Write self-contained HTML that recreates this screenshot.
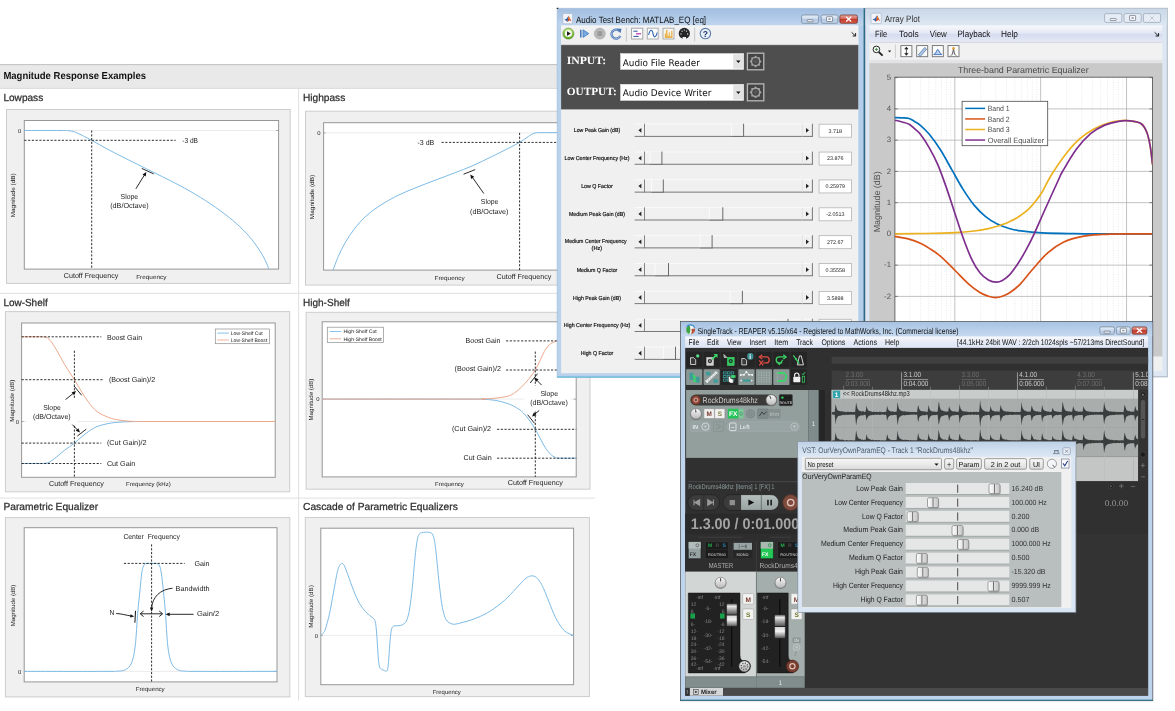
<!DOCTYPE html>
<html lang="en"><head><meta charset="utf-8"><title>Magnitude Response Examples</title>
<style>
html,body{margin:0;padding:0;background:#fff;}
body{width:1175px;height:711px;overflow:hidden;font-family:"Liberation Sans",sans-serif;}
svg{display:block;}
text{white-space:pre;}
</style></head><body>
<svg width="1175" height="711" viewBox="0 0 1175 711" text-rendering="geometricPrecision" style="will-change:transform">
<defs><linearGradient id="gTitleA" x1="0" y1="0" x2="0" y2="1"><stop offset="0" stop-color="#a3bee0"/><stop offset="0.5" stop-color="#afc9e8"/><stop offset="1" stop-color="#c1d6ee"/></linearGradient><linearGradient id="gTitleI" x1="0" y1="0" x2="0" y2="1"><stop offset="0" stop-color="#c9d7e7"/><stop offset="0.6" stop-color="#d6e1ee"/><stop offset="1" stop-color="#dee8f3"/></linearGradient><linearGradient id="gTitleR" x1="0" y1="0" x2="0" y2="1"><stop offset="0" stop-color="#a9c3e3"/><stop offset="0.5" stop-color="#b6cee9"/><stop offset="1" stop-color="#c6d9ef"/></linearGradient><linearGradient id="gTitleV" x1="0" y1="0" x2="0" y2="1"><stop offset="0" stop-color="#bed1e6"/><stop offset="0.5" stop-color="#cfdeee"/><stop offset="1" stop-color="#dde8f5"/></linearGradient><linearGradient id="gSideA" x1="0" y1="0" x2="0" y2="1"><stop offset="0" stop-color="#a6c3e8"/><stop offset="0.3" stop-color="#9fbfe6"/><stop offset="1" stop-color="#c3d8f0"/></linearGradient><linearGradient id="gTool" x1="0" y1="0" x2="0" y2="1"><stop offset="0" stop-color="#f3f4f6"/><stop offset="0.3" stop-color="#f0f0f0"/><stop offset="1" stop-color="#efefef"/></linearGradient><linearGradient id="gMenu" x1="0" y1="0" x2="0" y2="1"><stop offset="0" stop-color="#f8f9fc"/><stop offset="0.45" stop-color="#e4e8f5"/><stop offset="0.55" stop-color="#d6dcf0"/><stop offset="1" stop-color="#e6eaf6"/></linearGradient><linearGradient id="gMenuR" x1="0" y1="0" x2="0" y2="1"><stop offset="0" stop-color="#f8f9fc"/><stop offset="0.5" stop-color="#e6eaf6"/><stop offset="1" stop-color="#dfe5f3"/></linearGradient><linearGradient id="gBtn" x1="0" y1="0" x2="0" y2="1"><stop offset="0" stop-color="#e9f0f9"/><stop offset="0.5" stop-color="#c9d8ec"/><stop offset="0.55" stop-color="#b4c8e2"/><stop offset="1" stop-color="#c6d8ee"/></linearGradient><linearGradient id="gClose" x1="0" y1="0" x2="0" y2="1"><stop offset="0" stop-color="#e9a89c"/><stop offset="0.45" stop-color="#d4685a"/><stop offset="0.5" stop-color="#c1392b"/><stop offset="1" stop-color="#d4604a"/></linearGradient><linearGradient id="gPlay" x1="0" y1="0" x2="0" y2="1"><stop offset="0" stop-color="#c4e88a"/><stop offset="1" stop-color="#5aa21e"/></linearGradient><linearGradient id="gKnob" x1="0" y1="0" x2="0" y2="1"><stop offset="0" stop-color="#fafafa"/><stop offset="1" stop-color="#b8b8b8"/></linearGradient><linearGradient id="gPlayBtn" x1="0" y1="0" x2="0" y2="1"><stop offset="0" stop-color="#b4bebd"/><stop offset="1" stop-color="#98a3a2"/></linearGradient><linearGradient id="gFader" x1="0" y1="0" x2="0" y2="1"><stop offset="0" stop-color="#6a6a6a"/><stop offset="0.12" stop-color="#e8e8e8"/><stop offset="0.3" stop-color="#9a9a9a"/><stop offset="0.48" stop-color="#555"/><stop offset="0.52" stop-color="#d8d8d8"/><stop offset="0.7" stop-color="#f2f2f2"/><stop offset="0.9" stop-color="#8a8a8a"/><stop offset="1" stop-color="#444"/></linearGradient><linearGradient id="gBtnV" x1="0" y1="0" x2="0" y2="1"><stop offset="0" stop-color="#f6f6f6"/><stop offset="0.5" stop-color="#ebebeb"/><stop offset="1" stop-color="#d9d9d9"/></linearGradient><linearGradient id="gThumb" x1="0" y1="0" x2="1" y2="0"><stop offset="0" stop-color="#ffffff"/><stop offset="0.5" stop-color="#e2e2e2"/><stop offset="1" stop-color="#c2c2c2"/></linearGradient><clipPath id="cpAx"><rect x="894.9" y="77.2" width="257.6" height="268"/></clipPath><clipPath id="cpRuler"><rect x="831.6" y="370.6" width="316.5" height="19.3"/></clipPath><clipPath id="cpLane"><rect x="831.6" y="398.7" width="306.6" height="57.7"/></clipPath><clipPath id="cpTrans"><rect x="723" y="494.6" width="55.8" height="15.8" rx="7.9"/></clipPath></defs><rect x="0" y="0" width="1175" height="711" fill="#fff"/><g id="page"><rect x="0" y="65" width="596" height="23" fill="#e9e9e9"/><line x1="0" y1="64.6" x2="596" y2="64.6" stroke="#b9b9b9" stroke-width="0.9"/><line x1="0" y1="88.4" x2="596" y2="88.4" stroke="#d6d6d6" stroke-width="0.9"/><text x="3.4" y="78.9" font-size="10.2" fill="#111" font-family='"Liberation Sans", sans-serif' font-weight="bold" textLength="142.6" lengthAdjust="spacingAndGlyphs">Magnitude Response Examples</text><line x1="298.6" y1="88.8" x2="298.6" y2="700.6" stroke="#dcdcdc" stroke-width="0.9"/><line x1="0" y1="293.3" x2="595" y2="293.3" stroke="#dcdcdc" stroke-width="0.9"/><line x1="0" y1="498.1" x2="595" y2="498.1" stroke="#dcdcdc" stroke-width="0.9"/><text x="3.4" y="100.6" font-size="10.2" fill="#2e2e2e" font-family='"Liberation Sans", sans-serif' textLength="39.8" lengthAdjust="spacingAndGlyphs" stroke="#2e2e2e" stroke-width="0.25">Lowpass</text><text x="303" y="100.6" font-size="10.2" fill="#2e2e2e" font-family='"Liberation Sans", sans-serif' textLength="42.2" lengthAdjust="spacingAndGlyphs" stroke="#2e2e2e" stroke-width="0.25">Highpass</text><text x="3.4" y="305.5" font-size="10.2" fill="#2e2e2e" font-family='"Liberation Sans", sans-serif' textLength="44.3" lengthAdjust="spacingAndGlyphs" stroke="#2e2e2e" stroke-width="0.25">Low-Shelf</text><text x="303" y="305.5" font-size="10.2" fill="#2e2e2e" font-family='"Liberation Sans", sans-serif' textLength="46.8" lengthAdjust="spacingAndGlyphs" stroke="#2e2e2e" stroke-width="0.25">High-Shelf</text><text x="3.4" y="510.3" font-size="10.2" fill="#2e2e2e" font-family='"Liberation Sans", sans-serif' textLength="94.8" lengthAdjust="spacingAndGlyphs" stroke="#2e2e2e" stroke-width="0.25">Parametric Equalizer</text><text x="303" y="510.3" font-size="10.2" fill="#2e2e2e" font-family='"Liberation Sans", sans-serif' textLength="154.8" lengthAdjust="spacingAndGlyphs" stroke="#2e2e2e" stroke-width="0.25">Cascade of Parametric Equalizers</text><rect x="6.5" y="109.5" width="283.7" height="173.9" fill="#f0f0f0" stroke="#cdcdcd" stroke-width="1"/><rect x="24.3" y="120.5" width="254.3" height="148.6" fill="#fff" stroke="#969696" stroke-width="1"/><line x1="24.8" y1="130.5" x2="278.1" y2="130.5" stroke="#e6e6e6" stroke-width="0.8"/><line x1="276.1" y1="130.5" x2="278.6" y2="130.5" stroke="#8e8e8e" stroke-width="0.8"/><line x1="24.3" y1="130.5" x2="26.3" y2="130.5" stroke="#8e8e8e" stroke-width="0.8"/><text x="15.2" y="217.3" font-size="5.9" fill="#222" font-family='"Liberation Sans", sans-serif' textLength="44" lengthAdjust="spacingAndGlyphs" transform="rotate(-90 15.2 217.3)">Magnitude (dB)</text><text x="21.2" y="132.6" font-size="5.9" fill="#222" font-family='"Liberation Sans", sans-serif' text-anchor="end">0</text><path d="M24.3 130.5 C30.25 130.5 52.72 130.48 60 130.5 C67.28 130.52 65.6 130.37 68 130.6 C70.4 130.83 72.4 131.28 74.4 131.9 C76.4 132.52 77.13 132.9 80 134.3 C82.87 135.7 86.05 137.32 91.6 140.3 C97.15 143.28 104.3 147.52 113.3 152.2 C122.3 156.88 134.82 163 145.6 168.4 C156.38 173.8 168.83 179.75 178 184.6 C187.17 189.45 193.6 193.18 200.6 197.5 C207.6 201.82 214.07 206.18 220 210.5 C225.93 214.82 231.33 219.08 236.2 223.4 C241.07 227.72 245.42 232.08 249.2 236.4 C252.98 240.72 256.2 245.27 258.9 249.3 C261.6 253.33 263.75 257.3 265.4 260.6 C267.05 263.9 268.23 267.68 268.8 269.1" fill="none" stroke="#7dbbe6" stroke-width="1"/><line x1="24.3" y1="140.3" x2="175.7" y2="140.3" stroke="#1a1a1a" stroke-width="0.9" stroke-dasharray="2.2 1.55"/><line x1="91.7" y1="130.5" x2="91.7" y2="269.1" stroke="#1a1a1a" stroke-width="0.9" stroke-dasharray="2.2 1.55"/><text x="182.2" y="142.6" font-size="7.2" fill="#222" font-family='"Liberation Sans", sans-serif' textLength="15.8" lengthAdjust="spacingAndGlyphs">-3 dB</text><line x1="141.7" y1="168.4" x2="153.7" y2="173.9" stroke="#111" stroke-width="0.9"/><line x1="135.9" y1="188.8" x2="144.36" y2="175.05" stroke="#111" stroke-width="0.9"/><path d="M146.3 171.9 L145.72 176.47 L142.48 174.48Z" fill="#111"/><text x="129.4" y="198.5" font-size="7.2" fill="#222" font-family='"Liberation Sans", sans-serif' text-anchor="middle" textLength="17.6" lengthAdjust="spacingAndGlyphs">Slope</text><text x="129.4" y="208.2" font-size="7.2" fill="#222" font-family='"Liberation Sans", sans-serif' text-anchor="middle" textLength="38.4" lengthAdjust="spacingAndGlyphs">(dB/Octave)</text><text x="63.8" y="278" font-size="7.2" fill="#222" font-family='"Liberation Sans", sans-serif' textLength="54.5" lengthAdjust="spacingAndGlyphs">Cutoff Frequency</text><text x="136.2" y="279.1" font-size="5.9" fill="#222" font-family='"Liberation Sans", sans-serif' textLength="30.3" lengthAdjust="spacingAndGlyphs">Frequency</text><rect x="305.5" y="111.2" width="284.7" height="173.9" fill="#f0f0f0" stroke="#cdcdcd" stroke-width="1"/><rect x="323.6" y="122.7" width="253.4" height="147.4" fill="#fff" stroke="#969696" stroke-width="1"/><line x1="324.1" y1="132.9" x2="576.5" y2="132.9" stroke="#e6e6e6" stroke-width="0.8"/><line x1="574.5" y1="132.9" x2="577" y2="132.9" stroke="#8e8e8e" stroke-width="0.8"/><line x1="323.6" y1="132.9" x2="325.6" y2="132.9" stroke="#8e8e8e" stroke-width="0.8"/><text x="314.2" y="219.15" font-size="5.9" fill="#222" font-family='"Liberation Sans", sans-serif' textLength="44.3" lengthAdjust="spacingAndGlyphs" transform="rotate(-90 314.2 219.15)">Magnitude (dB)</text><text x="320.6" y="135" font-size="5.9" fill="#222" font-family='"Liberation Sans", sans-serif' text-anchor="end">0</text><path d="M333.11 270.06 C333.96 267.82 336.2 261.16 338.21 256.6 C340.22 252.03 342.47 247.31 345.18 242.67 C347.88 238.03 350.98 233.19 354.46 228.74 C357.94 224.29 361.81 219.84 366.07 215.97 C370.32 212.11 374.97 208.82 380 205.53 C385.02 202.24 390.44 199.15 396.24 196.24 C402.05 193.34 408.24 190.83 414.81 188.12 C421.39 185.41 429.13 182.51 435.71 180 C442.28 177.48 448.09 175.43 454.28 173.03 C460.47 170.63 466.66 168.31 472.85 165.6 C479.04 162.9 485.61 159.61 491.42 156.78 C497.22 153.96 502.98 151.06 507.66 148.66 C512.35 146.26 516.02 144.44 519.5 142.39 C522.99 140.34 526.27 137.83 528.56 136.36 C530.84 134.89 531.84 134.17 533.2 133.57 C534.55 132.97 535.33 132.91 536.68 132.76 C538.03 132.6 534.6 132.66 541.32 132.64 C548.04 132.62 571.05 132.64 577 132.64" fill="none" stroke="#7dbbe6" stroke-width="1"/><line x1="441.5" y1="142.4" x2="577" y2="142.4" stroke="#1a1a1a" stroke-width="0.9" stroke-dasharray="2.2 1.55"/><line x1="519.6" y1="132.9" x2="519.6" y2="270.1" stroke="#1a1a1a" stroke-width="0.9" stroke-dasharray="2.2 1.55"/><text x="417.5" y="144.8" font-size="7.2" fill="#222" font-family='"Liberation Sans", sans-serif' textLength="16.8" lengthAdjust="spacingAndGlyphs">-3 dB</text><line x1="463.6" y1="174.2" x2="475.2" y2="169.6" stroke="#111" stroke-width="0.9"/><line x1="483.8" y1="193.5" x2="472.44" y2="177.42" stroke="#111" stroke-width="0.9"/><path d="M470.3 174.4 L474.28 176.73 L471.17 178.93Z" fill="#111"/><text x="489.6" y="204.4" font-size="7.2" fill="#222" font-family='"Liberation Sans", sans-serif' text-anchor="middle" textLength="17.6" lengthAdjust="spacingAndGlyphs">Slope</text><text x="489.3" y="213.7" font-size="7.2" fill="#222" font-family='"Liberation Sans", sans-serif' text-anchor="middle" textLength="38.4" lengthAdjust="spacingAndGlyphs">(dB/Octave)</text><text x="434.5" y="279.7" font-size="5.9" fill="#222" font-family='"Liberation Sans", sans-serif' textLength="30.1" lengthAdjust="spacingAndGlyphs">Frequency</text><text x="496.6" y="279" font-size="7.2" fill="#222" font-family='"Liberation Sans", sans-serif' textLength="54.8" lengthAdjust="spacingAndGlyphs">Cutoff Frequency</text><rect x="5.4" y="311.6" width="284.3" height="180.2" fill="#f0f0f0" stroke="#cdcdcd" stroke-width="1"/><rect x="21.6" y="323" width="253.6" height="154.3" fill="#fff" stroke="#969696" stroke-width="1"/><line x1="22.1" y1="421.5" x2="274.7" y2="421.5" stroke="#e6e6e6" stroke-width="0.8"/><line x1="272.7" y1="421.5" x2="275.2" y2="421.5" stroke="#8e8e8e" stroke-width="0.8"/><line x1="21.6" y1="421.5" x2="23.6" y2="421.5" stroke="#8e8e8e" stroke-width="0.8"/><text x="13.7" y="421.7" font-size="5.9" fill="#222" font-family='"Liberation Sans", sans-serif' textLength="42" lengthAdjust="spacingAndGlyphs" transform="rotate(-90 13.7 421.7)">Magnitude (dB)</text><text x="19" y="423.6" font-size="5.9" fill="#222" font-family='"Liberation Sans", sans-serif' text-anchor="end">0</text><path d="M21.6 463.5 C24.67 463.5 35.93 463.55 40 463.5 C44.07 463.45 44.33 463.48 46 463.2 C47.67 462.92 48.3 462.78 50 461.8 C51.7 460.82 53.75 459.23 56.2 457.3 C58.65 455.37 61.67 452.57 64.7 450.2 C67.73 447.83 71.57 445.33 74.4 443.1 C77.23 440.87 79.35 438.73 81.7 436.8 C84.05 434.87 85.95 433.2 88.5 431.5 C91.05 429.8 93.58 427.95 97 426.6 C100.42 425.25 105.33 424.13 109 423.4 C112.67 422.67 115.03 422.5 119 422.2 C122.97 421.9 127.63 421.72 132.8 421.6 C137.97 421.48 126.27 421.52 150 421.5 C173.73 421.48 254.33 421.5 275.2 421.5" fill="none" stroke="#7dbbe6" stroke-width="1"/><path d="M21.6 336.8 C24.67 336.8 35.93 336.72 40 336.8 C44.07 336.88 44.33 336.73 46 337.3 C47.67 337.87 48.3 338.18 50 340.2 C51.7 342.22 53.75 345.32 56.2 349.4 C58.65 353.48 61.67 359.65 64.7 364.7 C67.73 369.75 71.57 375.17 74.4 379.7 C77.23 384.23 79.35 388.17 81.7 391.9 C84.05 395.63 85.95 398.83 88.5 402.1 C91.05 405.37 93.58 408.92 97 411.5 C100.42 414.08 105.33 416.18 109 417.6 C112.67 419.02 115.03 419.37 119 420 C122.97 420.63 127.63 421.15 132.8 421.4 C137.97 421.65 126.27 421.48 150 421.5 C173.73 421.52 254.33 421.5 275.2 421.5" fill="none" stroke="#eea88c" stroke-width="1"/><line x1="21.6" y1="336.8" x2="101.3" y2="336.8" stroke="#1a1a1a" stroke-width="0.9" stroke-dasharray="2.2 1.55"/><text x="106.9" y="339.5" font-size="7.2" fill="#222" font-family='"Liberation Sans", sans-serif' textLength="35.2" lengthAdjust="spacingAndGlyphs">Boost Gain</text><line x1="21.6" y1="379.7" x2="103" y2="379.7" stroke="#1a1a1a" stroke-width="0.9" stroke-dasharray="2.2 1.55"/><text x="108.9" y="382" font-size="7.2" fill="#222" font-family='"Liberation Sans", sans-serif' textLength="46.3" lengthAdjust="spacingAndGlyphs">(Boost Gain)/2</text><line x1="21.6" y1="443.1" x2="101.3" y2="443.1" stroke="#1a1a1a" stroke-width="0.9" stroke-dasharray="2.2 1.55"/><text x="106.9" y="445.3" font-size="7.2" fill="#222" font-family='"Liberation Sans", sans-serif' textLength="39.8" lengthAdjust="spacingAndGlyphs">(Cut Gain)/2</text><line x1="21.6" y1="463.5" x2="101.3" y2="463.5" stroke="#1a1a1a" stroke-width="0.9" stroke-dasharray="2.2 1.55"/><text x="106.9" y="466.3" font-size="7.2" fill="#222" font-family='"Liberation Sans", sans-serif' textLength="28.4" lengthAdjust="spacingAndGlyphs">Cut Gain</text><line x1="74.4" y1="350.7" x2="74.4" y2="477.3" stroke="#1a1a1a" stroke-width="0.9" stroke-dasharray="2.2 1.55"/><rect x="27" y="398.6" width="50.2" height="26.8" fill="#fff"/><line x1="74" y1="386" x2="81.7" y2="395.3" stroke="#111" stroke-width="0.9"/><line x1="65.5" y1="399.6" x2="73.21" y2="393.41" stroke="#111" stroke-width="0.9"/><path d="M76.1 391.1 L74.01 395.21 L71.63 392.25Z" fill="#111"/><line x1="77.4" y1="436" x2="86.3" y2="429.1" stroke="#111" stroke-width="0.9"/><line x1="72.3" y1="424.6" x2="77.42" y2="429.85" stroke="#111" stroke-width="0.9"/><path d="M80 432.5 L75.71 430.82 L78.43 428.17Z" fill="#111"/><text x="52" y="409.8" font-size="7.2" fill="#222" font-family='"Liberation Sans", sans-serif' text-anchor="middle" textLength="17.4" lengthAdjust="spacingAndGlyphs">Slope</text><text x="51.8" y="419.3" font-size="7.2" fill="#222" font-family='"Liberation Sans", sans-serif' text-anchor="middle" textLength="37.8" lengthAdjust="spacingAndGlyphs">(dB/Octave)</text><text x="49" y="485.7" font-size="7.2" fill="#222" font-family='"Liberation Sans", sans-serif' textLength="54.8" lengthAdjust="spacingAndGlyphs">Cutoff Frequency</text><text x="126" y="486.2" font-size="5.9" fill="#222" font-family='"Liberation Sans", sans-serif' textLength="44.7" lengthAdjust="spacingAndGlyphs">Frequency (kHz)</text><rect x="215.3" y="329" width="54.3" height="14.7" fill="#fff" stroke="#8e8e8e" stroke-width="0.7"/><line x1="217.2" y1="333.1" x2="228.8" y2="333.1" stroke="#7dbbe6" stroke-width="0.9"/><line x1="217.2" y1="340" x2="228.8" y2="340" stroke="#eea88c" stroke-width="0.9"/><text x="230.7" y="334.9" font-size="5" fill="#222" font-family='"Liberation Sans", sans-serif' textLength="32" lengthAdjust="spacingAndGlyphs">Low-Shelf Cut</text><text x="230.7" y="341.9" font-size="5" fill="#222" font-family='"Liberation Sans", sans-serif' textLength="36.6" lengthAdjust="spacingAndGlyphs">Low-Shelf Boost</text><rect x="306.1" y="312.3" width="283.9" height="176.9" fill="#f0f0f0" stroke="#cdcdcd" stroke-width="1"/><rect x="322.2" y="321.8" width="254" height="155.1" fill="#fff" stroke="#969696" stroke-width="1"/><line x1="322.7" y1="399.1" x2="575.7" y2="399.1" stroke="#e6e6e6" stroke-width="0.8"/><line x1="573.7" y1="399.1" x2="576.2" y2="399.1" stroke="#8e8e8e" stroke-width="0.8"/><line x1="322.2" y1="399.1" x2="324.2" y2="399.1" stroke="#8e8e8e" stroke-width="0.8"/><text x="313.4" y="420.5" font-size="5.9" fill="#222" font-family='"Liberation Sans", sans-serif' textLength="41.8" lengthAdjust="spacingAndGlyphs" transform="rotate(-90 313.4 420.5)">Magnitude (dB)</text><text x="319.6" y="401.2" font-size="5.9" fill="#222" font-family='"Liberation Sans", sans-serif' text-anchor="end">0</text><path d="M322.2 399.1 C346.83 399.1 443.27 399.07 470 399.1 C496.73 399.13 478.43 399.1 482.6 399.3 C486.77 399.5 490.75 399.57 495 400.3 C499.25 401.03 504.77 402.6 508.1 403.7 C511.43 404.8 512.73 405.62 515 406.9 C517.27 408.18 519.45 409.38 521.7 411.4 C523.95 413.42 526.23 416.02 528.5 419 C530.77 421.98 533.3 425.97 535.3 429.3 C537.3 432.63 538.8 435.88 540.5 439 C542.2 442.12 543.83 445.47 545.5 448 C547.17 450.53 548.92 452.65 550.5 454.2 C552.08 455.75 553.58 456.63 555 457.3 C556.42 457.97 555.47 458.05 559 458.2 C562.53 458.35 573.33 458.2 576.2 458.2" fill="none" stroke="#7dbbe6" stroke-width="1"/><path d="M322.2 399.1 C346.83 399.1 443.27 399.13 470 399.1 C496.73 399.07 478.43 399.05 482.6 398.9 C486.77 398.75 490.77 398.65 495 398.2 C499.23 397.75 504.67 397.13 508 396.2 C511.33 395.27 512.72 394.17 515 392.6 C517.28 391.03 519.45 389.02 521.7 386.8 C523.95 384.58 526.23 382.1 528.5 379.3 C530.77 376.5 533.3 373.3 535.3 370 C537.3 366.7 538.8 362.93 540.5 359.5 C542.2 356.07 543.83 352 545.5 349.4 C547.17 346.8 548.8 345.22 550.5 343.9 C552.2 342.58 554.12 342 555.7 341.5 C557.28 341 556.58 341 560 340.9 C563.42 340.8 573.5 340.9 576.2 340.9" fill="none" stroke="#eea88c" stroke-width="1"/><text x="465.5" y="342.6" font-size="7.2" fill="#222" font-family='"Liberation Sans", sans-serif' textLength="34.9" lengthAdjust="spacingAndGlyphs">Boost Gain</text><line x1="506" y1="340.9" x2="576.2" y2="340.9" stroke="#1a1a1a" stroke-width="0.9" stroke-dasharray="2.2 1.55"/><text x="454.5" y="370.6" font-size="7.2" fill="#222" font-family='"Liberation Sans", sans-serif' textLength="46.4" lengthAdjust="spacingAndGlyphs">(Boost Gain)/2</text><line x1="506" y1="370" x2="576.2" y2="370" stroke="#1a1a1a" stroke-width="0.9" stroke-dasharray="2.2 1.55"/><text x="451.9" y="431" font-size="7.2" fill="#222" font-family='"Liberation Sans", sans-serif' textLength="39.2" lengthAdjust="spacingAndGlyphs">(Cut Gain)/2</text><line x1="497" y1="429.3" x2="576.2" y2="429.3" stroke="#1a1a1a" stroke-width="0.9" stroke-dasharray="2.2 1.55"/><text x="463.5" y="459.9" font-size="7.2" fill="#222" font-family='"Liberation Sans", sans-serif' textLength="28.1" lengthAdjust="spacingAndGlyphs">Cut Gain</text><line x1="497" y1="458.2" x2="576.2" y2="458.2" stroke="#1a1a1a" stroke-width="0.9" stroke-dasharray="2.2 1.55"/><line x1="535.3" y1="351.6" x2="535.3" y2="476.9" stroke="#1a1a1a" stroke-width="0.9" stroke-dasharray="2.2 1.55"/><rect x="524.5" y="385.6" width="46.5" height="24.6" fill="#fff"/><line x1="530.2" y1="383" x2="537.6" y2="373.6" stroke="#111" stroke-width="0.9"/><line x1="541.6" y1="385.1" x2="536.88" y2="380.25" stroke="#111" stroke-width="0.9"/><path d="M534.3 377.6 L538.59 379.28 L535.87 381.93Z" fill="#111"/><line x1="527.7" y1="414.8" x2="534.5" y2="423.3" stroke="#111" stroke-width="0.9"/><line x1="539.2" y1="410.5" x2="534.86" y2="414.05" stroke="#111" stroke-width="0.9"/><path d="M532 416.4 L534.04 412.27 L536.45 415.21Z" fill="#111"/><text x="549.2" y="395.7" font-size="7.2" fill="#222" font-family='"Liberation Sans", sans-serif' text-anchor="middle" textLength="17.6" lengthAdjust="spacingAndGlyphs">Slope</text><text x="549" y="404.7" font-size="7.2" fill="#222" font-family='"Liberation Sans", sans-serif' text-anchor="middle" textLength="37.6" lengthAdjust="spacingAndGlyphs">(dB/Octave)</text><text x="435.1" y="485.6" font-size="5.9" fill="#222" font-family='"Liberation Sans", sans-serif' textLength="28.8" lengthAdjust="spacingAndGlyphs">Frequency</text><text x="507.7" y="484.6" font-size="7.2" fill="#222" font-family='"Liberation Sans", sans-serif' textLength="55.2" lengthAdjust="spacingAndGlyphs">Cutoff Frequency</text><rect x="327.3" y="327.2" width="56.2" height="15.4" fill="#fff" stroke="#8e8e8e" stroke-width="0.7"/><line x1="329.6" y1="331.5" x2="341.3" y2="331.5" stroke="#7dbbe6" stroke-width="0.9"/><line x1="329.6" y1="338.8" x2="341.3" y2="338.8" stroke="#eea88c" stroke-width="0.9"/><text x="343.5" y="333.3" font-size="5" fill="#222" font-family='"Liberation Sans", sans-serif' textLength="33.2" lengthAdjust="spacingAndGlyphs">High-Shelf Cut</text><text x="343.5" y="340.6" font-size="5" fill="#222" font-family='"Liberation Sans", sans-serif' textLength="38.3" lengthAdjust="spacingAndGlyphs">High-Shelf Boost</text><rect x="5.4" y="517.6" width="284.4" height="179.3" fill="#f0f0f0" stroke="#cdcdcd" stroke-width="1"/><rect x="24.2" y="527.7" width="252.8" height="154.2" fill="#fff" stroke="#969696" stroke-width="1"/><line x1="24.7" y1="671.4" x2="276.5" y2="671.4" stroke="#e6e6e6" stroke-width="0.8"/><line x1="274.5" y1="671.4" x2="277" y2="671.4" stroke="#8e8e8e" stroke-width="0.8"/><line x1="24.2" y1="671.4" x2="26.2" y2="671.4" stroke="#8e8e8e" stroke-width="0.8"/><text x="15" y="626.2" font-size="5.9" fill="#222" font-family='"Liberation Sans", sans-serif' textLength="41.6" lengthAdjust="spacingAndGlyphs" transform="rotate(-90 15 626.2)">Magnitude (dB)</text><text x="21.4" y="673.5" font-size="5.9" fill="#222" font-family='"Liberation Sans", sans-serif' text-anchor="end">0</text><path d="M24.2 671.4 C37.67 671.4 89.53 671.43 105 671.4 C120.47 671.37 113.58 671.48 117 671.2 C120.42 670.92 123.08 671.07 125.5 669.7 C127.92 668.33 129.88 666.95 131.5 663 C133.12 659.05 134.15 654.5 135.2 646 C136.25 637.5 137 621.33 137.8 612 C138.6 602.67 139.33 596.5 140 590 C140.67 583.5 141.22 577 141.8 573 C142.38 569 142.83 567.57 143.5 566 C144.17 564.43 144.88 564.03 145.8 563.6 C146.72 563.17 147.63 563.43 149 563.4 C150.37 563.37 152.63 563.37 154 563.4 C155.37 563.43 156.27 563.17 157.2 563.6 C158.13 564.03 158.92 564.43 159.6 566 C160.28 567.57 160.68 569 161.3 573 C161.92 577 162.62 583.5 163.3 590 C163.98 596.5 164.65 602.67 165.4 612 C166.15 621.33 166.78 637.5 167.8 646 C168.82 654.5 169.88 659.05 171.5 663 C173.12 666.95 175.08 668.33 177.5 669.7 C179.92 671.07 182.58 670.92 186 671.2 C189.42 671.48 182.83 671.37 198 671.4 C213.17 671.43 263.83 671.4 277 671.4" fill="none" stroke="#7dbbe6" stroke-width="1"/><text x="123.4" y="538.9" font-size="7.2" fill="#222" font-family='"Liberation Sans", sans-serif' textLength="56.5" lengthAdjust="spacingAndGlyphs">Center  Frequency</text><line x1="151.6" y1="544.4" x2="151.6" y2="681.9" stroke="#1a1a1a" stroke-width="0.9" stroke-dasharray="2.2 1.55"/><line x1="123.9" y1="563.4" x2="184.7" y2="563.4" stroke="#1a1a1a" stroke-width="0.9" stroke-dasharray="2.2 1.55"/><text x="194.4" y="565.5" font-size="7.2" fill="#222" font-family='"Liberation Sans", sans-serif' textLength="15.1" lengthAdjust="spacingAndGlyphs">Gain</text><text x="175.6" y="590.7" font-size="7.2" fill="#222" font-family='"Liberation Sans", sans-serif' textLength="33.9" lengthAdjust="spacingAndGlyphs">Bandwidth</text><text x="197" y="616" font-size="7.2" fill="#222" font-family='"Liberation Sans", sans-serif' textLength="22.1" lengthAdjust="spacingAndGlyphs">Gain/2</text><text x="109.4" y="614.7" font-size="7.2" fill="#222" font-family='"Liberation Sans", sans-serif' textLength="4.8" lengthAdjust="spacingAndGlyphs">N</text><path d="M172.5 588.2 C160 589.5 152.5 597 151.6 608" fill="none" stroke="#111" stroke-width="0.9"/><path d="M151.6 611.8 L149.9 607.6 L153.3 607.6Z" fill="#111"/><line x1="140.5" y1="613.8" x2="162.2" y2="613.8" stroke="#111" stroke-width="0.9"/><path d="M143.6 611 L140.2 613.8 L143.6 616.6" fill="none" stroke="#111" stroke-width="0.9"/><path d="M159.2 611 L162.6 613.8 L159.2 616.6" fill="none" stroke="#111" stroke-width="0.9"/><line x1="193.6" y1="614.3" x2="169.2" y2="614.3" stroke="#111" stroke-width="0.9"/><path d="M165.5 614.3 L169.7 612.4 L169.7 616.2Z" fill="#111"/><path d="M116.2 613.5 C122 613.8 126 615.2 130.5 615.9" fill="none" stroke="#111" stroke-width="0.9"/><path d="M134.2 616.4 L130 617.6 L130.6 614.2Z" fill="#111"/><line x1="135.5" y1="610.8" x2="134.9" y2="622.7" stroke="#111" stroke-width="1"/><text x="135.7" y="690.8" font-size="5.9" fill="#222" font-family='"Liberation Sans", sans-serif' textLength="29" lengthAdjust="spacingAndGlyphs">Frequency</text><rect x="305.3" y="517.5" width="284.1" height="179.1" fill="#f0f0f0" stroke="#cdcdcd" stroke-width="1"/><rect x="320.8" y="528.2" width="252.8" height="156.5" fill="#fff" stroke="#969696" stroke-width="1"/><line x1="321.3" y1="635.4" x2="573.1" y2="635.4" stroke="#e6e6e6" stroke-width="0.8"/><line x1="571.1" y1="635.4" x2="573.6" y2="635.4" stroke="#8e8e8e" stroke-width="0.8"/><line x1="320.8" y1="635.4" x2="322.8" y2="635.4" stroke="#8e8e8e" stroke-width="0.8"/><text x="312.6" y="627.8" font-size="5.9" fill="#222" font-family='"Liberation Sans", sans-serif' textLength="42.6" lengthAdjust="spacingAndGlyphs" transform="rotate(-90 312.6 627.8)">Magnitude (dB)</text><text x="318" y="637.6" font-size="5.9" fill="#222" font-family='"Liberation Sans", sans-serif' text-anchor="end">0</text><path d="M320.86 635.67 C321.3 635.13 322.77 633.57 323.53 632.46 C324.29 631.35 324.42 632.01 325.4 628.98 C326.38 625.95 328.07 620.29 329.41 614.28 C330.75 608.26 332.09 600.02 333.42 592.89 C334.76 585.76 336.32 576.18 337.43 571.5 C338.55 566.82 339.35 566.15 340.11 564.81 C340.86 563.48 341.31 563.39 341.98 563.48 C342.65 563.57 343.09 563.34 344.12 565.35 C345.14 567.35 346.57 571.36 348.13 575.51 C349.69 579.65 351.69 585.76 353.48 590.21 C355.26 594.67 356.82 598.68 358.82 602.25 C360.83 605.81 363.5 609.24 365.51 611.6 C367.51 613.97 369.47 615.21 370.86 616.42 C372.24 617.62 372.99 617.62 373.8 618.82 C374.6 620.03 375.13 620.38 375.67 623.64 C376.2 626.89 376.56 632.55 377.01 638.34 C377.45 644.14 377.9 653.58 378.34 658.4 C378.79 663.21 379.1 665.39 379.68 667.22 C380.26 669.05 381.02 668.78 381.82 669.36 C382.62 669.94 383.78 670.38 384.49 670.7 C385.2 671.01 385.61 671.36 386.1 671.23 C386.59 671.1 387.03 671.36 387.43 669.89 C387.83 668.42 388.1 666.77 388.5 662.41 C388.9 658.04 389.39 648.95 389.84 643.69 C390.29 638.43 390.69 633.66 391.18 630.86 C391.67 628.05 392.11 627.69 392.78 626.84 C393.45 626 393.94 626 395.19 625.78 C396.43 625.55 398.75 625.86 400.27 625.51 C401.78 625.15 403.16 624.62 404.28 623.64 C405.39 622.66 406.06 622.08 406.95 619.63 C407.84 617.17 408.73 614.28 409.63 608.93 C410.52 603.58 411.41 596.01 412.3 587.54 C413.19 579.07 414.17 565.93 414.97 558.13 C415.78 550.33 416.44 544.67 417.11 540.75 C417.78 536.83 418.23 535.94 418.98 534.6 C419.74 533.26 420.54 533.13 421.66 532.73 C422.77 532.33 424.33 532.24 425.67 532.19 C427.01 532.15 428.57 532.15 429.68 532.46 C430.79 532.77 431.55 532.68 432.35 534.06 C433.16 535.45 433.82 537.18 434.49 540.75 C435.16 544.31 435.61 548.55 436.36 555.45 C437.12 562.36 438.15 574.17 439.04 582.19 C439.93 590.21 440.82 598.01 441.71 603.58 C442.6 609.15 443.49 612.72 444.39 615.61 C445.28 618.51 445.94 619.63 447.06 620.96 C448.17 622.3 449.73 623.1 451.07 623.64 C452.41 624.17 453.07 624.39 455.08 624.17 C457.09 623.95 459.98 623.15 463.1 622.3 C466.22 621.45 469.79 620.65 473.8 619.09 C477.81 617.53 482.8 615.44 487.17 612.94 C491.53 610.45 496.55 606.75 500 604.12 C503.45 601.48 504.86 600.11 507.87 597.13 C510.89 594.15 515.25 589.24 518.09 586.23 C520.92 583.23 523.02 580.73 524.89 579.09 C526.77 577.44 528.07 576.9 529.32 576.36 C530.57 575.82 531.3 575.74 532.38 575.85 C533.46 575.96 534.6 576.16 535.79 577.04 C536.98 577.92 538.23 579.2 539.53 581.13 C540.84 583.06 542.09 585.27 543.62 588.62 C545.15 591.96 546.74 596.39 548.72 601.21 C550.71 606.04 553.26 613.01 555.53 617.55 C557.8 622.09 560.35 625.89 562.34 628.45 C564.33 631 565.57 631.71 567.45 632.87 C569.32 634.04 572.55 635 573.57 635.43" fill="none" stroke="#7dbbe6" stroke-width="1"/><text x="432.7" y="693.5" font-size="5.9" fill="#222" font-family='"Liberation Sans", sans-serif' textLength="28.1" lengthAdjust="spacingAndGlyphs">Frequency</text></g><g id="arrayplot"><rect x="865.1" y="8.2" width="302.1" height="368.7" fill="#dde7f4" stroke="#8b97a8" stroke-width="0.7"/><rect x="865.6" y="8.7" width="301.1" height="16.7" fill="url(#gTitleI)"/><rect x="871" y="13.2" width="10.3" height="10.4" fill="#f1f4f9" stroke="#9fb0c8" stroke-width="0.6" rx="0.8"/><path d="M872.44 19.44 L874.91 18.4 L877.18 15.28 L876.66 18.61 L875.74 21.73 L874.3 20.27Z" fill="#2f5fa8"/><path d="M877.18 15.28 L880.27 21.52 L878.42 19.86 L875.74 21.73 L876.66 18.61Z" fill="#d2431c"/><path d="M877.18 15.28 L878.72 19.23 L877.39 18.82Z" fill="#f19a38"/><text x="884.7" y="21.8" font-size="9.2" fill="#333" font-family='"Liberation Sans", sans-serif' textLength="35.2" lengthAdjust="spacingAndGlyphs">Array Plot</text><rect x="1104.6" y="13.6" width="17.2" height="8.8" fill="#e6ecf5" stroke="#97a3b3" stroke-width="0.7" rx="1.5"/><rect x="1110.2" y="18.6" width="6" height="2" fill="#fff" stroke="#4a5566" stroke-width="0.6" rx="0.5"/><rect x="1124" y="13.6" width="17.2" height="8.8" fill="#e6ecf5" stroke="#97a3b3" stroke-width="0.7" rx="1.5"/><rect x="1129.6" y="15.6" width="6" height="4.8" fill="#fff" stroke="#4a5566" stroke-width="0.6" rx="0.5"/><rect x="1131.4" y="17.2" width="2.4" height="1.6" fill="#8d99ab"/><rect x="1143.4" y="13.6" width="17.2" height="8.8" fill="#e6ecf5" stroke="#97a3b3" stroke-width="0.7" rx="1.5"/><path d="M1149.5 15.7 l5 4.6 M1154.5 15.7 l-5 4.6" fill="none" stroke="#fff" stroke-width="1.3"/><path d="M1149.5 15.7 l5 4.6 M1154.5 15.7 l-5 4.6" fill="none" stroke="#7a8799" stroke-width="0.5"/><rect x="869.4" y="25.4" width="292.9" height="16.8" fill="url(#gMenu)"/><text x="875" y="36.9" font-size="9.2" fill="#111" font-family='"Liberation Sans", sans-serif' textLength="12.2" lengthAdjust="spacingAndGlyphs">File</text><text x="899.1" y="36.9" font-size="9.2" fill="#111" font-family='"Liberation Sans", sans-serif' textLength="19.6" lengthAdjust="spacingAndGlyphs">Tools</text><text x="929.8" y="36.9" font-size="9.2" fill="#111" font-family='"Liberation Sans", sans-serif' textLength="17" lengthAdjust="spacingAndGlyphs">View</text><text x="957.5" y="36.9" font-size="9.2" fill="#111" font-family='"Liberation Sans", sans-serif' textLength="32.7" lengthAdjust="spacingAndGlyphs">Playback</text><text x="1000.9" y="36.9" font-size="9.2" fill="#111" font-family='"Liberation Sans", sans-serif' textLength="17.1" lengthAdjust="spacingAndGlyphs">Help</text><path d="M1154.6 32.3 l3.8 3.6 M1158.6 33 v3 h-3" fill="none" stroke="#111" stroke-width="0.9"/><rect x="869.4" y="42.2" width="292.9" height="17.7" fill="#f1f1f1"/><line x1="869.4" y1="42.4" x2="1162.3" y2="42.4" stroke="#c9cfdd" stroke-width="0.7"/><rect x="869.4" y="59.9" width="292.9" height="3.3" fill="#e3e3e3"/><circle cx="876.4" cy="49.4" r="3.3" fill="#fff" stroke="#222" stroke-width="1"/><line x1="878.8" y1="52" x2="882.6" y2="55.6" stroke="#222" stroke-width="1.8"/><path d="M874.8 49.4 h3.2 M876.4 47.8 v3.2" fill="none" stroke="#2a7a2a" stroke-width="0.8"/><path d="M888 50.4 L891.2 50.4 L889.6 52.4Z" fill="#222"/><line x1="895.4" y1="44.5" x2="895.4" y2="58" stroke="#c4c4c4" stroke-width="0.8"/><rect x="900.9" y="45.6" width="11" height="11.1" fill="#fcfcfc" stroke="#6f6f6f" stroke-width="0.9"/><path d="M906.4 47 v8.4 M906.4 47.2 l-1.6 1.8 h3.2z M906.4 55.2 l-1.6 -1.8 h3.2z" fill="#222" stroke="#222" stroke-width="0.7"/><rect x="916.7" y="45.6" width="11" height="11.1" fill="#fcfcfc" stroke="#6f6f6f" stroke-width="0.9"/><path d="M918.3 54.8 l6.4 -7.4 l2 1.8 l-6.4 7.4z" fill="#a8c4e6" stroke="#3e5f8e" stroke-width="0.6"/><rect x="932.3" y="45.6" width="11" height="11.1" fill="#fcfcfc" stroke="#6f6f6f" stroke-width="0.9"/><path d="M933.7 54.4 C936.3 54.2 936.5 49.4 937.8 49.4 C939.1 49.4 939.3 54.2 941.9 54.4" fill="#bcd3ef" stroke="#2f64b5" stroke-width="0.9"/><line x1="933.7" y1="54.6" x2="941.9" y2="54.6" stroke="#2f64b5" stroke-width="0.8"/><rect x="948" y="45.6" width="11" height="11.1" fill="#fcfcfc" stroke="#6f6f6f" stroke-width="0.9"/><path d="M950.6 55.6 C952.6 55 953 52 953.5 47.6 C954 52 954.4 55 956.4 55.6" fill="#e9eef6" stroke="#333" stroke-width="0.8"/><circle cx="953.5" cy="48.2" r="1.2" fill="#e8a020"/><rect x="869.4" y="63.2" width="292.9" height="293.4" fill="#c9c9c9"/><rect x="869.4" y="356.6" width="292.9" height="14.4" fill="#f0f0f0"/><text x="957.9" y="72.8" font-size="8.9" fill="#4a4a4a" font-family='"Liberation Sans", sans-serif' textLength="130.8" lengthAdjust="spacingAndGlyphs">Three-band Parametric Equalizer</text><rect x="894.9" y="77.2" width="257.6" height="267.8" fill="#fff"/><line x1="909.9" y1="77.2" x2="909.9" y2="345" stroke="#dcdcdc" stroke-width="0.6" stroke-dasharray="1 1.4"/><line x1="920.63" y1="77.2" x2="920.63" y2="345" stroke="#dcdcdc" stroke-width="0.6" stroke-dasharray="1 1.4"/><line x1="928.95" y1="77.2" x2="928.95" y2="345" stroke="#dcdcdc" stroke-width="0.6" stroke-dasharray="1 1.4"/><line x1="935.75" y1="77.2" x2="935.75" y2="345" stroke="#dcdcdc" stroke-width="0.6" stroke-dasharray="1 1.4"/><line x1="941.5" y1="77.2" x2="941.5" y2="345" stroke="#dcdcdc" stroke-width="0.6" stroke-dasharray="1 1.4"/><line x1="946.48" y1="77.2" x2="946.48" y2="345" stroke="#dcdcdc" stroke-width="0.6" stroke-dasharray="1 1.4"/><line x1="950.87" y1="77.2" x2="950.87" y2="345" stroke="#dcdcdc" stroke-width="0.6" stroke-dasharray="1 1.4"/><line x1="980.65" y1="77.2" x2="980.65" y2="345" stroke="#dcdcdc" stroke-width="0.6" stroke-dasharray="1 1.4"/><line x1="995.77" y1="77.2" x2="995.77" y2="345" stroke="#dcdcdc" stroke-width="0.6" stroke-dasharray="1 1.4"/><line x1="1006.5" y1="77.2" x2="1006.5" y2="345" stroke="#dcdcdc" stroke-width="0.6" stroke-dasharray="1 1.4"/><line x1="1014.82" y1="77.2" x2="1014.82" y2="345" stroke="#dcdcdc" stroke-width="0.6" stroke-dasharray="1 1.4"/><line x1="1021.62" y1="77.2" x2="1021.62" y2="345" stroke="#dcdcdc" stroke-width="0.6" stroke-dasharray="1 1.4"/><line x1="1027.37" y1="77.2" x2="1027.37" y2="345" stroke="#dcdcdc" stroke-width="0.6" stroke-dasharray="1 1.4"/><line x1="1032.35" y1="77.2" x2="1032.35" y2="345" stroke="#dcdcdc" stroke-width="0.6" stroke-dasharray="1 1.4"/><line x1="1036.74" y1="77.2" x2="1036.74" y2="345" stroke="#dcdcdc" stroke-width="0.6" stroke-dasharray="1 1.4"/><line x1="1066.52" y1="77.2" x2="1066.52" y2="345" stroke="#dcdcdc" stroke-width="0.6" stroke-dasharray="1 1.4"/><line x1="1081.64" y1="77.2" x2="1081.64" y2="345" stroke="#dcdcdc" stroke-width="0.6" stroke-dasharray="1 1.4"/><line x1="1092.37" y1="77.2" x2="1092.37" y2="345" stroke="#dcdcdc" stroke-width="0.6" stroke-dasharray="1 1.4"/><line x1="1100.69" y1="77.2" x2="1100.69" y2="345" stroke="#dcdcdc" stroke-width="0.6" stroke-dasharray="1 1.4"/><line x1="1107.49" y1="77.2" x2="1107.49" y2="345" stroke="#dcdcdc" stroke-width="0.6" stroke-dasharray="1 1.4"/><line x1="1113.24" y1="77.2" x2="1113.24" y2="345" stroke="#dcdcdc" stroke-width="0.6" stroke-dasharray="1 1.4"/><line x1="1118.22" y1="77.2" x2="1118.22" y2="345" stroke="#dcdcdc" stroke-width="0.6" stroke-dasharray="1 1.4"/><line x1="1122.61" y1="77.2" x2="1122.61" y2="345" stroke="#dcdcdc" stroke-width="0.6" stroke-dasharray="1 1.4"/><line x1="894.9" y1="327.65" x2="1152.5" y2="327.65" stroke="#b2b2b2" stroke-width="0.8"/><line x1="894.9" y1="296.4" x2="1152.5" y2="296.4" stroke="#b2b2b2" stroke-width="0.8"/><line x1="894.9" y1="265.15" x2="1152.5" y2="265.15" stroke="#b2b2b2" stroke-width="0.8"/><line x1="894.9" y1="233.9" x2="1152.5" y2="233.9" stroke="#b2b2b2" stroke-width="0.8"/><line x1="894.9" y1="202.65" x2="1152.5" y2="202.65" stroke="#b2b2b2" stroke-width="0.8"/><line x1="894.9" y1="171.4" x2="1152.5" y2="171.4" stroke="#b2b2b2" stroke-width="0.8"/><line x1="894.9" y1="140.15" x2="1152.5" y2="140.15" stroke="#b2b2b2" stroke-width="0.8"/><line x1="894.9" y1="108.9" x2="1152.5" y2="108.9" stroke="#b2b2b2" stroke-width="0.8"/><line x1="954.8" y1="77.2" x2="954.8" y2="345" stroke="#b2b2b2" stroke-width="0.8"/><line x1="1040.67" y1="77.2" x2="1040.67" y2="345" stroke="#b2b2b2" stroke-width="0.8"/><line x1="1126.54" y1="77.2" x2="1126.54" y2="345" stroke="#b2b2b2" stroke-width="0.8"/><rect x="894.9" y="77.2" width="257.6" height="267.8" fill="none" stroke="#5a5a5a" stroke-width="0.9"/><line x1="894.9" y1="296.4" x2="897.9" y2="296.4" stroke="#5a5a5a" stroke-width="0.7"/><line x1="1149.5" y1="296.4" x2="1152.5" y2="296.4" stroke="#5a5a5a" stroke-width="0.7"/><text x="891" y="298.6" font-size="7.8" fill="#555" font-family='"Liberation Sans", sans-serif' text-anchor="end">-2</text><line x1="894.9" y1="265.15" x2="897.9" y2="265.15" stroke="#5a5a5a" stroke-width="0.7"/><line x1="1149.5" y1="265.15" x2="1152.5" y2="265.15" stroke="#5a5a5a" stroke-width="0.7"/><text x="891" y="267.35" font-size="7.8" fill="#555" font-family='"Liberation Sans", sans-serif' text-anchor="end">-1</text><line x1="894.9" y1="233.9" x2="897.9" y2="233.9" stroke="#5a5a5a" stroke-width="0.7"/><line x1="1149.5" y1="233.9" x2="1152.5" y2="233.9" stroke="#5a5a5a" stroke-width="0.7"/><text x="891" y="236.1" font-size="7.8" fill="#555" font-family='"Liberation Sans", sans-serif' text-anchor="end">0</text><line x1="894.9" y1="202.65" x2="897.9" y2="202.65" stroke="#5a5a5a" stroke-width="0.7"/><line x1="1149.5" y1="202.65" x2="1152.5" y2="202.65" stroke="#5a5a5a" stroke-width="0.7"/><text x="891" y="204.85" font-size="7.8" fill="#555" font-family='"Liberation Sans", sans-serif' text-anchor="end">1</text><line x1="894.9" y1="171.4" x2="897.9" y2="171.4" stroke="#5a5a5a" stroke-width="0.7"/><line x1="1149.5" y1="171.4" x2="1152.5" y2="171.4" stroke="#5a5a5a" stroke-width="0.7"/><text x="891" y="173.6" font-size="7.8" fill="#555" font-family='"Liberation Sans", sans-serif' text-anchor="end">2</text><line x1="894.9" y1="140.15" x2="897.9" y2="140.15" stroke="#5a5a5a" stroke-width="0.7"/><line x1="1149.5" y1="140.15" x2="1152.5" y2="140.15" stroke="#5a5a5a" stroke-width="0.7"/><text x="891" y="142.35" font-size="7.8" fill="#555" font-family='"Liberation Sans", sans-serif' text-anchor="end">3</text><line x1="894.9" y1="108.9" x2="897.9" y2="108.9" stroke="#5a5a5a" stroke-width="0.7"/><line x1="1149.5" y1="108.9" x2="1152.5" y2="108.9" stroke="#5a5a5a" stroke-width="0.7"/><text x="891" y="111.1" font-size="7.8" fill="#555" font-family='"Liberation Sans", sans-serif' text-anchor="end">4</text><line x1="894.9" y1="77.65" x2="897.9" y2="77.65" stroke="#5a5a5a" stroke-width="0.7"/><line x1="1149.5" y1="77.65" x2="1152.5" y2="77.65" stroke="#5a5a5a" stroke-width="0.7"/><text x="891" y="79.85" font-size="7.8" fill="#555" font-family='"Liberation Sans", sans-serif' text-anchor="end">5</text><text x="880.2" y="232.3" font-size="8.9" fill="#4d4d4d" font-family='"Liberation Sans", sans-serif' textLength="61" lengthAdjust="spacingAndGlyphs" transform="rotate(-90 880.2 232.3)">Magnitude (dB)</text><g clip-path="url(#cpAx)" fill="none" stroke-width="1.5" stroke-linejoin="round"><path d="M894.9 117.7 C896.08 117.73 899.63 117.77 902 117.9 C904.37 118.03 907.02 117.92 909.1 118.5 C911.18 119.08 912.62 120.27 914.5 121.4 C916.38 122.53 917.93 123.15 920.4 125.3 C922.87 127.45 925.93 130.18 929.3 134.3 C932.67 138.42 936.85 144.1 940.6 150 C944.35 155.9 948.05 163.13 951.8 169.7 C955.55 176.27 959.35 183.45 963.1 189.4 C966.85 195.35 970.55 200.87 974.3 205.4 C978.05 209.93 981.85 213.55 985.6 216.6 C989.35 219.65 992.73 221.68 996.8 223.7 C1000.87 225.72 1005.98 227.5 1010 228.7 C1014.02 229.9 1015.52 230.2 1020.9 230.9 C1026.28 231.6 1033.37 232.43 1042.3 232.9 C1051.23 233.37 1064.88 233.53 1074.5 233.7 C1084.12 233.87 1087 233.87 1100 233.9 C1113 233.93 1143.75 233.9 1152.5 233.9" fill="none" stroke="#0072bd" stroke-width="1.7"/><path d="M894.9 236.3 C897.27 236.77 904.85 237.93 909.1 239.1 C913.35 240.27 917.03 241.75 920.4 243.3 C923.77 244.85 925.93 246.23 929.3 248.4 C932.67 250.57 936.38 252.7 940.6 256.3 C944.82 259.9 949.92 265.37 954.6 270 C959.28 274.63 964.48 280.35 968.7 284.1 C972.92 287.85 976.62 290.48 979.9 292.5 C983.18 294.52 985.82 295.35 988.4 296.2 C990.98 297.05 993.07 297.6 995.4 297.6 C997.73 297.6 999.97 297.05 1002.4 296.2 C1004.83 295.35 1007.07 294.48 1010 292.5 C1012.93 290.52 1016.4 287.97 1020 284.3 C1023.6 280.63 1026.98 275.75 1031.6 270.5 C1036.22 265.25 1042.33 257.57 1047.7 252.8 C1053.07 248.03 1058 244.65 1063.8 241.9 C1069.6 239.15 1076.25 237.53 1082.5 236.3 C1088.75 235.07 1093.7 234.9 1101.3 234.5 C1108.9 234.1 1119.57 234 1128.1 233.9 C1136.63 233.8 1148.43 233.9 1152.5 233.9" fill="none" stroke="#d95319" stroke-width="1.7"/><path d="M894.9 233.8 C899.92 233.75 915.05 233.68 925 233.5 C934.95 233.32 946.38 233.12 954.6 232.7 C962.82 232.28 968.67 231.67 974.3 231 C979.93 230.33 983.72 229.78 988.4 228.7 C993.08 227.62 998.8 225.72 1002.4 224.5 C1006 223.28 1007.23 222.73 1010 221.4 C1012.77 220.07 1015.85 218.6 1019 216.5 C1022.15 214.4 1026.07 211.45 1028.9 208.8 C1031.73 206.15 1033.77 203.43 1036 200.6 C1038.23 197.77 1039.77 196.02 1042.3 191.8 C1044.83 187.58 1047.37 181.48 1051.2 175.3 C1055.03 169.12 1060.62 160.72 1065.3 154.7 C1069.98 148.68 1074.62 143.45 1079.3 139.2 C1083.98 134.95 1088.7 131.87 1093.4 129.2 C1098.1 126.53 1102.82 124.63 1107.5 123.2 C1112.18 121.77 1117.75 120.98 1121.5 120.6 C1125.25 120.22 1126.72 120.38 1130 120.9 C1133.28 121.42 1138.4 121.82 1141.2 123.7 C1144 125.58 1145.3 128.45 1146.8 132.2 C1148.3 135.95 1149.25 140.82 1150.2 146.2 C1151.15 151.58 1152.12 161.45 1152.5 164.5" fill="none" stroke="#edb120" stroke-width="1.7"/><path d="M894.9 120.2 C896.08 120.5 899.63 121.33 902 122 C904.37 122.67 907.02 123.1 909.1 124.2 C911.18 125.3 912.62 126.92 914.5 128.6 C916.38 130.28 917.93 131.1 920.4 134.3 C922.87 137.5 926.4 142.75 929.3 147.8 C932.2 152.85 934.98 158.05 937.8 164.6 C940.62 171.15 943.4 179.13 946.2 187.1 C949 195.07 951.78 203.97 954.6 212.4 C957.42 220.83 960.28 229.97 963.1 237.7 C965.92 245.43 968.7 252.95 971.5 258.8 C974.3 264.65 977.08 269.28 979.9 272.8 C982.72 276.32 985.68 278.35 988.4 279.9 C991.12 281.45 993.87 282.02 996.2 282.1 C998.53 282.18 1000.1 281.7 1002.4 280.4 C1004.7 279.1 1007.4 277.12 1010 274.3 C1012.6 271.48 1015.3 267.6 1018 263.5 C1020.7 259.4 1023.48 254.68 1026.2 249.7 C1028.92 244.72 1031.17 240.3 1034.3 233.6 C1037.43 226.9 1040.98 218.43 1045 209.5 C1049.02 200.57 1055.48 186.33 1058.4 180 C1061.32 173.67 1059.48 176.67 1062.5 171.5 C1065.52 166.33 1071.82 155.32 1076.5 149 C1081.18 142.68 1085.9 137.58 1090.6 133.6 C1095.3 129.62 1100.02 127.15 1104.7 125.1 C1109.38 123.05 1114.48 122 1118.7 121.3 C1122.92 120.6 1126.25 120.5 1130 120.9 C1133.75 121.3 1138.4 121.82 1141.2 123.7 C1144 125.58 1145.3 128.45 1146.8 132.2 C1148.3 135.95 1149.25 140.82 1150.2 146.2 C1151.15 151.58 1152.12 161.45 1152.5 164.5" fill="none" stroke="#7e2f8e" stroke-width="1.7"/></g><rect x="962.1" y="101.3" width="85.6" height="44.4" fill="#fff" stroke="#4a4a4a" stroke-width="0.8"/><line x1="965.2" y1="108.4" x2="985.1" y2="108.4" stroke="#0072bd" stroke-width="1.5"/><text x="987.7" y="111.1" font-size="7.6" fill="#4d4d4d" font-family='"Liberation Sans", sans-serif' textLength="22" lengthAdjust="spacingAndGlyphs">Band 1</text><line x1="965.2" y1="118.95" x2="985.1" y2="118.95" stroke="#d95319" stroke-width="1.5"/><text x="987.7" y="121.65" font-size="7.6" fill="#4d4d4d" font-family='"Liberation Sans", sans-serif' textLength="22" lengthAdjust="spacingAndGlyphs">Band 2</text><line x1="965.2" y1="129.5" x2="985.1" y2="129.5" stroke="#edb120" stroke-width="1.5"/><text x="987.7" y="132.2" font-size="7.6" fill="#4d4d4d" font-family='"Liberation Sans", sans-serif' textLength="22" lengthAdjust="spacingAndGlyphs">Band 3</text><line x1="965.2" y1="140.05" x2="985.1" y2="140.05" stroke="#7e2f8e" stroke-width="1.5"/><text x="987.7" y="142.75" font-size="7.6" fill="#4d4d4d" font-family='"Liberation Sans", sans-serif' textLength="56.5" lengthAdjust="spacingAndGlyphs">Overall Equalizer</text></g><g id="atb"><rect x="557.1" y="8.2" width="306.7" height="369.2" fill="#b9d1ea" stroke="#9db6d6" stroke-width="0.6"/><rect x="556.7" y="7.8" width="1.6" height="1.2" fill="#222"/><rect x="557.7" y="8.8" width="305.5" height="16.8" fill="url(#gTitleA)"/><rect x="557.7" y="25.5" width="3.4" height="347.7" fill="#b9d1ea"/><rect x="858.3" y="25.5" width="4.9" height="347.7" fill="#b4cdea"/><rect x="863.6" y="8.2" width="1.4" height="369.2" fill="#2b6b88"/><line x1="557.1" y1="377" x2="863.8" y2="377" stroke="#46b6d6" stroke-width="0.9"/><rect x="561.1" y="25.5" width="297.2" height="347.7" fill="#f0f0f0"/><rect x="562.8" y="13.6" width="9.8" height="10.2" fill="#f1f4f9" stroke="#9fb0c8" stroke-width="0.6" rx="0.8"/><path d="M564.17 19.72 L566.52 18.7 L568.68 15.64 L568.19 18.9 L567.31 21.96 L565.94 20.54Z" fill="#2f5fa8"/><path d="M568.68 15.64 L571.62 21.76 L569.86 20.13 L567.31 21.96 L568.19 18.9Z" fill="#d2431c"/><path d="M568.68 15.64 L570.15 19.52 L568.88 19.11Z" fill="#f19a38"/><text x="576" y="22.6" font-size="9.2" fill="#111" font-family='"Liberation Sans", sans-serif' textLength="130.1" lengthAdjust="spacingAndGlyphs">Audio Test Bench: MATLAB_EQ [eq]</text><rect x="801.6" y="15" width="17" height="8.3" fill="url(#gBtn)" stroke="#6f7f93" stroke-width="0.7" rx="1.5"/><rect x="807.1" y="19.75" width="6" height="2" fill="#fff" stroke="#4a5566" stroke-width="0.6" rx="0.5"/><rect x="821.2" y="15" width="16.7" height="8.3" fill="url(#gBtn)" stroke="#6f7f93" stroke-width="0.7" rx="1.5"/><rect x="826.55" y="16.75" width="6" height="4.8" fill="#fff" stroke="#4a5566" stroke-width="0.6" rx="0.5"/><rect x="828.35" y="18.35" width="2.4" height="1.6" fill="#8d99ab"/><rect x="839.9" y="15" width="17.5" height="8.3" fill="url(#gClose)" stroke="#6b2a22" stroke-width="0.7" rx="1.5"/><path d="M846.15 16.85 l5 4.6 M851.15 16.85 l-5 4.6" fill="none" stroke="#fff" stroke-width="1.3"/><rect x="561.1" y="25.5" width="297.2" height="19.1" fill="url(#gTool)"/><line x1="561.1" y1="44.6" x2="858.3" y2="44.6" stroke="#c8c8c8" stroke-width="0.8"/><circle cx="568.4" cy="33.6" r="5.5" fill="url(#gPlay)" stroke="#4f8420" stroke-width="0.6"/><circle cx="568.4" cy="33.6" r="3.5" fill="#f7fcf2"/><path d="M567 31.3 L567 35.9 L570.8 33.6Z" fill="#222"/><line x1="580.8" y1="29.8" x2="580.8" y2="37.4" stroke="#3f78bb" stroke-width="1.5"/><path d="M583 29.8 L583 37.4 L588.8 33.6Z" fill="#77abe0" stroke="#3f78bb" stroke-width="0.8"/><circle cx="599.8" cy="33.6" r="5.5" fill="#b9b9b9" stroke="#a3a3a3" stroke-width="0.6"/><rect x="597.4" y="31.2" width="4.8" height="4.8" fill="#999"/><path d="M619.2 31 A4.5 4.5 0 1 0 620.2 35.8" fill="none" stroke="#4b76b4" stroke-width="2.3"/><path d="M619.2 31 A4.5 4.5 0 1 0 620.2 35.8" fill="none" stroke="#a9c2e4" stroke-width="0.9"/><path d="M616.6 28.4 L621.6 28.8 L620.4 33.2Z" fill="#4b76b4"/><line x1="626.4" y1="27.5" x2="626.4" y2="41.5" stroke="#bdbdbd" stroke-width="0.8"/><rect x="631.6" y="28.2" width="11.2" height="10.8" fill="#fdfdfd" stroke="#9c9c9c" stroke-width="0.9"/><line x1="633.4" y1="31.2" x2="637.6" y2="31.2" stroke="#3a5fa8" stroke-width="1.1"/><line x1="636" y1="33.8" x2="641" y2="33.8" stroke="#c02aa8" stroke-width="1.2"/><line x1="633.4" y1="36.4" x2="638.6" y2="36.4" stroke="#3a5fa8" stroke-width="1.1"/><rect x="647.3" y="28.2" width="10.9" height="10.8" fill="#fdfdfd" stroke="#a6a6a6" stroke-width="0.9"/><path d="M648.6 35 C650 29 652.3 29 653 33.6 C653.8 38 656 38 657.2 32.5" fill="none" stroke="#2f64b5" stroke-width="1.1"/><rect x="663" y="28.2" width="11" height="10.8" fill="#f6f3ea" stroke="#a6a6a6" stroke-width="0.9"/><path d="M664.8 38 V33.4 h1.2 V30 h1.5 V35.8 h1.2 V32.6 h1.2 V36.2 h1.2 V31 h1.4 V38Z" fill="#e9b452"/><circle cx="684.3" cy="33.4" r="5.6" fill="#262626"/><rect x="682.6" y="37" width="3.4" height="2.6" fill="#f0f0f0"/><circle cx="681" cy="34" r="0.65" fill="#ddd"/><circle cx="682.1" cy="31.2" r="0.65" fill="#ddd"/><circle cx="684.3" cy="30.1" r="0.65" fill="#ddd"/><circle cx="686.5" cy="31.2" r="0.65" fill="#ddd"/><circle cx="687.6" cy="34" r="0.65" fill="#ddd"/><line x1="694.7" y1="27.5" x2="694.7" y2="41.5" stroke="#bdbdbd" stroke-width="0.8"/><circle cx="705.4" cy="33.6" r="5.2" fill="#e8f0fa" stroke="#5b7eab" stroke-width="1.1"/><text x="705.4" y="36.7" font-size="8.6" fill="#1e3566" font-family='"Liberation Sans", sans-serif' font-weight="bold" text-anchor="middle">?</text><path d="M851.6 32.3 l3.8 3.6 M855.6 33 v3 h-3" fill="none" stroke="#111" stroke-width="0.9"/><rect x="561.1" y="45.1" width="297.2" height="64.3" fill="#4e4e4e"/><text x="566.7" y="63.8" font-size="11" fill="#fff" font-family='"Liberation Serif", serif' font-weight="bold" textLength="39.5" lengthAdjust="spacingAndGlyphs">INPUT:</text><text x="566.7" y="94.5" font-size="11" fill="#fff" font-family='"Liberation Serif", serif' font-weight="bold" textLength="50" lengthAdjust="spacingAndGlyphs">OUTPUT:</text><rect x="620.6" y="53.6" width="123.1" height="15.8" fill="#fff" stroke="#e6e6e6" stroke-width="0.6"/><rect x="733.2" y="54.4" width="9.9" height="14.2" fill="#e2e2e2"/><path d="M736.1 60.6 L740.5 60.6 L738.3 63.1Z" fill="#111"/><text x="622.7" y="65.5" font-size="9.3" fill="#111" font-family='"DejaVu Sans", "Liberation Sans", sans-serif' textLength="77.1" lengthAdjust="spacingAndGlyphs">Audio File Reader</text><rect x="747.4" y="53.2" width="16.4" height="16.6" fill="#444" stroke="#b9b9b9" stroke-width="1.3"/><path d="M755.6 55.5 L757.4 57.16 L759.84 57.26 L759.94 59.7 L761.6 61.5 L759.94 63.3 L759.84 65.74 L757.4 65.84 L755.6 67.5 L753.8 65.84 L751.36 65.74 L751.26 63.3 L749.6 61.5 L751.26 59.7 L751.36 57.26 L753.8 57.16Z" fill="#a2a2a2"/><circle cx="755.6" cy="61.5" r="3.4" fill="#474747"/><circle cx="755.6" cy="61.2" r="2" fill="#565656"/><rect x="620.6" y="84.3" width="123.1" height="16.1" fill="#fff" stroke="#e6e6e6" stroke-width="0.6"/><rect x="733.2" y="85.1" width="9.9" height="14.5" fill="#e2e2e2"/><path d="M736.1 91.45 L740.5 91.45 L738.3 93.95Z" fill="#111"/><text x="622.7" y="96.2" font-size="9.3" fill="#111" font-family='"DejaVu Sans", "Liberation Sans", sans-serif' textLength="88.7" lengthAdjust="spacingAndGlyphs">Audio Device Writer</text><rect x="747.4" y="83.9" width="16.4" height="16.9" fill="#444" stroke="#b9b9b9" stroke-width="1.3"/><path d="M755.6 86.35 L757.4 88.01 L759.84 88.11 L759.94 90.55 L761.6 92.35 L759.94 94.15 L759.84 96.59 L757.4 96.69 L755.6 98.35 L753.8 96.69 L751.36 96.59 L751.26 94.15 L749.6 92.35 L751.26 90.55 L751.36 88.11 L753.8 88.01Z" fill="#a2a2a2"/><circle cx="755.6" cy="92.35" r="3.4" fill="#474747"/><circle cx="755.6" cy="92.05" r="2" fill="#565656"/><rect x="634.6" y="123.7" width="178.1" height="13.1" fill="#f0f0f0"/><line x1="634.6" y1="136.4" x2="812.7" y2="136.4" stroke="#6a6a6a" stroke-width="0.9"/><line x1="634.6" y1="124.1" x2="812.7" y2="124.1" stroke="#fdfdfd" stroke-width="0.8"/><line x1="644.5" y1="123.7" x2="644.5" y2="136.8" stroke="#777" stroke-width="0.9"/><line x1="802.4" y1="123.7" x2="802.4" y2="136.8" stroke="#d8d8d8" stroke-width="0.6"/><line x1="812.4" y1="123.7" x2="812.4" y2="136.8" stroke="#6a6a6a" stroke-width="0.9"/><path d="M638.4 130.3 L641.4 127.9 L641.4 132.7Z" fill="#222"/><path d="M809 130.3 L806 127.9 L806 132.7Z" fill="#222"/><rect x="731.3" y="124.3" width="12.7" height="11.9" fill="#f0f0f0"/><line x1="743.6" y1="123.7" x2="743.6" y2="136.8" stroke="#6a6a6a" stroke-width="1"/><line x1="731.6" y1="124.3" x2="731.6" y2="136" stroke="#fff" stroke-width="0.7"/><line x1="731.3" y1="136.4" x2="744" y2="136.4" stroke="#6a6a6a" stroke-width="0.9"/><rect x="819.1" y="124.2" width="32.4" height="13" fill="#fff" stroke="#b4b4b4" stroke-width="0.8"/><text x="835.3" y="132.5" font-size="5.4" fill="#222" font-family='"Liberation Sans", sans-serif' text-anchor="middle">3.718</text><text x="597" y="132.3" font-size="5.7" fill="#111" font-family='"Liberation Sans", sans-serif' text-anchor="middle" textLength="46.3" lengthAdjust="spacingAndGlyphs" stroke="#111" stroke-width="0.18">Low Peak Gain (dB)</text><rect x="634.6" y="151.57" width="178.1" height="13.1" fill="#f0f0f0"/><line x1="634.6" y1="164.27" x2="812.7" y2="164.27" stroke="#6a6a6a" stroke-width="0.9"/><line x1="634.6" y1="151.97" x2="812.7" y2="151.97" stroke="#fdfdfd" stroke-width="0.8"/><line x1="644.5" y1="151.57" x2="644.5" y2="164.67" stroke="#777" stroke-width="0.9"/><line x1="802.4" y1="151.57" x2="802.4" y2="164.67" stroke="#d8d8d8" stroke-width="0.6"/><line x1="812.4" y1="151.57" x2="812.4" y2="164.67" stroke="#6a6a6a" stroke-width="0.9"/><path d="M638.4 158.17 L641.4 155.77 L641.4 160.57Z" fill="#222"/><path d="M809 158.17 L806 155.77 L806 160.57Z" fill="#222"/><rect x="649.6" y="152.17" width="12.7" height="11.9" fill="#f0f0f0"/><line x1="661.9" y1="151.57" x2="661.9" y2="164.67" stroke="#6a6a6a" stroke-width="1"/><line x1="649.9" y1="152.17" x2="649.9" y2="163.87" stroke="#fff" stroke-width="0.7"/><line x1="649.6" y1="164.27" x2="662.3" y2="164.27" stroke="#6a6a6a" stroke-width="0.9"/><rect x="819.1" y="152.07" width="32.4" height="13" fill="#fff" stroke="#b4b4b4" stroke-width="0.8"/><text x="835.3" y="160.37" font-size="5.4" fill="#222" font-family='"Liberation Sans", sans-serif' text-anchor="middle">23.876</text><text x="597" y="160.17" font-size="5.7" fill="#111" font-family='"Liberation Sans", sans-serif' text-anchor="middle" textLength="65" lengthAdjust="spacingAndGlyphs" stroke="#111" stroke-width="0.18">Low Center Frequency (Hz)</text><rect x="634.6" y="179.44" width="178.1" height="13.1" fill="#f0f0f0"/><line x1="634.6" y1="192.14" x2="812.7" y2="192.14" stroke="#6a6a6a" stroke-width="0.9"/><line x1="634.6" y1="179.84" x2="812.7" y2="179.84" stroke="#fdfdfd" stroke-width="0.8"/><line x1="644.5" y1="179.44" x2="644.5" y2="192.54" stroke="#777" stroke-width="0.9"/><line x1="802.4" y1="179.44" x2="802.4" y2="192.54" stroke="#d8d8d8" stroke-width="0.6"/><line x1="812.4" y1="179.44" x2="812.4" y2="192.54" stroke="#6a6a6a" stroke-width="0.9"/><path d="M638.4 186.04 L641.4 183.64 L641.4 188.44Z" fill="#222"/><path d="M809 186.04 L806 183.64 L806 188.44Z" fill="#222"/><rect x="651.3" y="180.04" width="12.4" height="11.9" fill="#f0f0f0"/><line x1="663.3" y1="179.44" x2="663.3" y2="192.54" stroke="#6a6a6a" stroke-width="1"/><line x1="651.6" y1="180.04" x2="651.6" y2="191.74" stroke="#fff" stroke-width="0.7"/><line x1="651.3" y1="192.14" x2="663.7" y2="192.14" stroke="#6a6a6a" stroke-width="0.9"/><rect x="819.1" y="179.94" width="32.4" height="13" fill="#fff" stroke="#b4b4b4" stroke-width="0.8"/><text x="835.3" y="188.24" font-size="5.4" fill="#222" font-family='"Liberation Sans", sans-serif' text-anchor="middle">0.25979</text><text x="597" y="188.04" font-size="5.7" fill="#111" font-family='"Liberation Sans", sans-serif' text-anchor="middle" textLength="31.6" lengthAdjust="spacingAndGlyphs" stroke="#111" stroke-width="0.18">Low Q Factor</text><rect x="634.6" y="207.31" width="178.1" height="13.1" fill="#f0f0f0"/><line x1="634.6" y1="220.01" x2="812.7" y2="220.01" stroke="#6a6a6a" stroke-width="0.9"/><line x1="634.6" y1="207.71" x2="812.7" y2="207.71" stroke="#fdfdfd" stroke-width="0.8"/><line x1="644.5" y1="207.31" x2="644.5" y2="220.41" stroke="#777" stroke-width="0.9"/><line x1="802.4" y1="207.31" x2="802.4" y2="220.41" stroke="#d8d8d8" stroke-width="0.6"/><line x1="812.4" y1="207.31" x2="812.4" y2="220.41" stroke="#6a6a6a" stroke-width="0.9"/><path d="M638.4 213.91 L641.4 211.51 L641.4 216.31Z" fill="#222"/><path d="M809 213.91 L806 211.51 L806 216.31Z" fill="#222"/><rect x="709.1" y="207.91" width="14.1" height="11.9" fill="#f0f0f0"/><line x1="722.8" y1="207.31" x2="722.8" y2="220.41" stroke="#6a6a6a" stroke-width="1"/><line x1="709.4" y1="207.91" x2="709.4" y2="219.61" stroke="#fff" stroke-width="0.7"/><line x1="709.1" y1="220.01" x2="723.2" y2="220.01" stroke="#6a6a6a" stroke-width="0.9"/><rect x="819.1" y="207.81" width="32.4" height="13" fill="#fff" stroke="#b4b4b4" stroke-width="0.8"/><text x="835.3" y="216.11" font-size="5.4" fill="#222" font-family='"Liberation Sans", sans-serif' text-anchor="middle">-2.0513</text><text x="597" y="215.91" font-size="5.7" fill="#111" font-family='"Liberation Sans", sans-serif' text-anchor="middle" textLength="56" lengthAdjust="spacingAndGlyphs" stroke="#111" stroke-width="0.18">Medium Peak Gain (dB)</text><rect x="634.6" y="235.18" width="178.1" height="13.1" fill="#f0f0f0"/><line x1="634.6" y1="247.88" x2="812.7" y2="247.88" stroke="#6a6a6a" stroke-width="0.9"/><line x1="634.6" y1="235.58" x2="812.7" y2="235.58" stroke="#fdfdfd" stroke-width="0.8"/><line x1="644.5" y1="235.18" x2="644.5" y2="248.28" stroke="#777" stroke-width="0.9"/><line x1="802.4" y1="235.18" x2="802.4" y2="248.28" stroke="#d8d8d8" stroke-width="0.6"/><line x1="812.4" y1="235.18" x2="812.4" y2="248.28" stroke="#6a6a6a" stroke-width="0.9"/><path d="M638.4 241.78 L641.4 239.38 L641.4 244.18Z" fill="#222"/><path d="M809 241.78 L806 239.38 L806 244.18Z" fill="#222"/><rect x="699.8" y="235.78" width="12.7" height="11.9" fill="#f0f0f0"/><line x1="712.1" y1="235.18" x2="712.1" y2="248.28" stroke="#6a6a6a" stroke-width="1"/><line x1="700.1" y1="235.78" x2="700.1" y2="247.48" stroke="#fff" stroke-width="0.7"/><line x1="699.8" y1="247.88" x2="712.5" y2="247.88" stroke="#6a6a6a" stroke-width="0.9"/><rect x="819.1" y="235.68" width="32.4" height="13" fill="#fff" stroke="#b4b4b4" stroke-width="0.8"/><text x="835.3" y="243.98" font-size="5.4" fill="#222" font-family='"Liberation Sans", sans-serif' text-anchor="middle">272.67</text><text x="595.8" y="243.38" font-size="5.7" fill="#111" font-family='"Liberation Sans", sans-serif' text-anchor="middle" textLength="61.9" lengthAdjust="spacingAndGlyphs" stroke="#111" stroke-width="0.18">Medium Center Frequency</text><text x="596.9" y="250.48" font-size="5.7" fill="#111" font-family='"Liberation Sans", sans-serif' text-anchor="middle" textLength="10.6" lengthAdjust="spacingAndGlyphs" stroke="#111" stroke-width="0.18">(Hz)</text><rect x="634.6" y="263.05" width="178.1" height="13.1" fill="#f0f0f0"/><line x1="634.6" y1="275.75" x2="812.7" y2="275.75" stroke="#6a6a6a" stroke-width="0.9"/><line x1="634.6" y1="263.45" x2="812.7" y2="263.45" stroke="#fdfdfd" stroke-width="0.8"/><line x1="644.5" y1="263.05" x2="644.5" y2="276.15" stroke="#777" stroke-width="0.9"/><line x1="802.4" y1="263.05" x2="802.4" y2="276.15" stroke="#d8d8d8" stroke-width="0.6"/><line x1="812.4" y1="263.05" x2="812.4" y2="276.15" stroke="#6a6a6a" stroke-width="0.9"/><path d="M638.4 269.65 L641.4 267.25 L641.4 272.05Z" fill="#222"/><path d="M809 269.65 L806 267.25 L806 272.05Z" fill="#222"/><rect x="654.8" y="263.65" width="14.1" height="11.9" fill="#f0f0f0"/><line x1="668.5" y1="263.05" x2="668.5" y2="276.15" stroke="#6a6a6a" stroke-width="1"/><line x1="655.1" y1="263.65" x2="655.1" y2="275.35" stroke="#fff" stroke-width="0.7"/><line x1="654.8" y1="275.75" x2="668.9" y2="275.75" stroke="#6a6a6a" stroke-width="0.9"/><rect x="819.1" y="263.55" width="32.4" height="13" fill="#fff" stroke="#b4b4b4" stroke-width="0.8"/><text x="835.3" y="271.85" font-size="5.4" fill="#222" font-family='"Liberation Sans", sans-serif' text-anchor="middle">0.35558</text><text x="597" y="271.65" font-size="5.7" fill="#111" font-family='"Liberation Sans", sans-serif' text-anchor="middle" textLength="40.7" lengthAdjust="spacingAndGlyphs" stroke="#111" stroke-width="0.18">Medium Q Factor</text><rect x="634.6" y="290.92" width="178.1" height="13.1" fill="#f0f0f0"/><line x1="634.6" y1="303.62" x2="812.7" y2="303.62" stroke="#6a6a6a" stroke-width="0.9"/><line x1="634.6" y1="291.32" x2="812.7" y2="291.32" stroke="#fdfdfd" stroke-width="0.8"/><line x1="644.5" y1="290.92" x2="644.5" y2="304.02" stroke="#777" stroke-width="0.9"/><line x1="802.4" y1="290.92" x2="802.4" y2="304.02" stroke="#d8d8d8" stroke-width="0.6"/><line x1="812.4" y1="290.92" x2="812.4" y2="304.02" stroke="#6a6a6a" stroke-width="0.9"/><path d="M638.4 297.52 L641.4 295.12 L641.4 299.92Z" fill="#222"/><path d="M809 297.52 L806 295.12 L806 299.92Z" fill="#222"/><rect x="729.9" y="291.52" width="12.9" height="11.9" fill="#f0f0f0"/><line x1="742.4" y1="290.92" x2="742.4" y2="304.02" stroke="#6a6a6a" stroke-width="1"/><line x1="730.2" y1="291.52" x2="730.2" y2="303.22" stroke="#fff" stroke-width="0.7"/><line x1="729.9" y1="303.62" x2="742.8" y2="303.62" stroke="#6a6a6a" stroke-width="0.9"/><rect x="819.1" y="291.42" width="32.4" height="13" fill="#fff" stroke="#b4b4b4" stroke-width="0.8"/><text x="835.3" y="299.72" font-size="5.4" fill="#222" font-family='"Liberation Sans", sans-serif' text-anchor="middle">3.5898</text><text x="597" y="299.52" font-size="5.7" fill="#111" font-family='"Liberation Sans", sans-serif' text-anchor="middle" textLength="47.8" lengthAdjust="spacingAndGlyphs" stroke="#111" stroke-width="0.18">High Peak Gain (dB)</text><rect x="634.6" y="318.79" width="178.1" height="13.1" fill="#f0f0f0"/><line x1="634.6" y1="331.49" x2="812.7" y2="331.49" stroke="#6a6a6a" stroke-width="0.9"/><line x1="634.6" y1="319.19" x2="812.7" y2="319.19" stroke="#fdfdfd" stroke-width="0.8"/><line x1="644.5" y1="318.79" x2="644.5" y2="331.89" stroke="#777" stroke-width="0.9"/><line x1="802.4" y1="318.79" x2="802.4" y2="331.89" stroke="#d8d8d8" stroke-width="0.6"/><line x1="812.4" y1="318.79" x2="812.4" y2="331.89" stroke="#6a6a6a" stroke-width="0.9"/><path d="M638.4 325.39 L641.4 322.99 L641.4 327.79Z" fill="#222"/><path d="M809 325.39 L806 322.99 L806 327.79Z" fill="#222"/><rect x="774.3" y="319.39" width="14.1" height="11.9" fill="#f0f0f0"/><line x1="788" y1="318.79" x2="788" y2="331.89" stroke="#6a6a6a" stroke-width="1"/><line x1="774.6" y1="319.39" x2="774.6" y2="331.09" stroke="#fff" stroke-width="0.7"/><line x1="774.3" y1="331.49" x2="788.4" y2="331.49" stroke="#6a6a6a" stroke-width="0.9"/><rect x="819.1" y="319.29" width="32.4" height="13" fill="#fff" stroke="#b4b4b4" stroke-width="0.8"/><text x="597" y="327.39" font-size="5.7" fill="#111" font-family='"Liberation Sans", sans-serif' text-anchor="middle" textLength="66.7" lengthAdjust="spacingAndGlyphs" stroke="#111" stroke-width="0.18">High Center Frequency (Hz)</text><rect x="634.6" y="346.66" width="178.1" height="13.1" fill="#f0f0f0"/><line x1="634.6" y1="359.36" x2="812.7" y2="359.36" stroke="#6a6a6a" stroke-width="0.9"/><line x1="634.6" y1="347.06" x2="812.7" y2="347.06" stroke="#fdfdfd" stroke-width="0.8"/><line x1="644.5" y1="346.66" x2="644.5" y2="359.76" stroke="#777" stroke-width="0.9"/><line x1="802.4" y1="346.66" x2="802.4" y2="359.76" stroke="#d8d8d8" stroke-width="0.6"/><line x1="812.4" y1="346.66" x2="812.4" y2="359.76" stroke="#6a6a6a" stroke-width="0.9"/><path d="M638.4 353.26 L641.4 350.86 L641.4 355.66Z" fill="#222"/><path d="M809 353.26 L806 350.86 L806 355.66Z" fill="#222"/><rect x="663.3" y="347.26" width="12.6" height="11.9" fill="#f0f0f0"/><line x1="675.5" y1="346.66" x2="675.5" y2="359.76" stroke="#6a6a6a" stroke-width="1"/><line x1="663.6" y1="347.26" x2="663.6" y2="358.96" stroke="#fff" stroke-width="0.7"/><line x1="663.3" y1="359.36" x2="675.9" y2="359.36" stroke="#6a6a6a" stroke-width="0.9"/><rect x="819.1" y="347.16" width="32.4" height="13" fill="#fff" stroke="#b4b4b4" stroke-width="0.8"/><text x="597" y="355.26" font-size="5.7" fill="#111" font-family='"Liberation Sans", sans-serif' text-anchor="middle" textLength="32.6" lengthAdjust="spacingAndGlyphs" stroke="#111" stroke-width="0.18">High Q Factor</text></g><g id="reaper"><rect x="680.4" y="321.4" width="472.4" height="379.3" fill="#bdd4ec" stroke="#555b61" stroke-width="0.8"/><rect x="681" y="322" width="471.2" height="14.4" fill="url(#gTitleR)"/><line x1="680.4" y1="700.2" x2="1152.8" y2="700.2" stroke="#1d6d86" stroke-width="1"/><circle cx="690.4" cy="329.6" r="4.7" fill="#f4f4f4" stroke="#a8b4c4" stroke-width="0.4"/><path d="M689.6 325.2 A4.6 4.6 0 0 0 689.2 334 C691 331.5 690.4 328 689.6 325.2z" fill="#3ea344"/><path d="M691 334.2 A4.7 4.7 0 0 0 695 328.6 L691.4 329 C692 331 691.8 332.6 691 334.2z" fill="#b5513c"/><path d="M686.6 327 A4.7 4.7 0 0 1 694.8 327.8" fill="none" stroke="#3b8fd0" stroke-width="1.3"/><text x="697.5" y="333.8" font-size="8.6" fill="#111" font-family='"Liberation Sans", sans-serif' textLength="261" lengthAdjust="spacingAndGlyphs">SingleTrack - REAPER v5.15/x64 - Registered to MathWorks, Inc. (Commercial license)</text><rect x="1099.9" y="326.9" width="14.5" height="7.3" fill="url(#gBtn)" stroke="#6f7f93" stroke-width="0.7" rx="1.5"/><rect x="1104.15" y="331.15" width="6" height="2" fill="#fff" stroke="#4a5566" stroke-width="0.6" rx="0.5"/><rect x="1116.4" y="326.9" width="13.9" height="7.3" fill="url(#gBtn)" stroke="#6f7f93" stroke-width="0.7" rx="1.5"/><rect x="1120.35" y="328.15" width="6" height="4.8" fill="#fff" stroke="#4a5566" stroke-width="0.6" rx="0.5"/><rect x="1122.15" y="329.75" width="2.4" height="1.6" fill="#8d99ab"/><rect x="1132.1" y="326.9" width="14.7" height="7.3" fill="url(#gClose)" stroke="#6b2a22" stroke-width="0.7" rx="1.5"/><path d="M1136.95 328.25 l5 4.6 M1141.95 328.25 l-5 4.6" fill="none" stroke="#fff" stroke-width="1.3"/><rect x="685.2" y="336.4" width="462.9" height="11.5" fill="url(#gMenuR)"/><text x="688.6" y="344.9" font-size="8.2" fill="#111" font-family='"Liberation Sans", sans-serif' textLength="10.7" lengthAdjust="spacingAndGlyphs">File</text><text x="707" y="344.9" font-size="8.2" fill="#111" font-family='"Liberation Sans", sans-serif' textLength="11.9" lengthAdjust="spacingAndGlyphs">Edit</text><text x="726.9" y="344.9" font-size="8.2" fill="#111" font-family='"Liberation Sans", sans-serif' textLength="14.5" lengthAdjust="spacingAndGlyphs">View</text><text x="749.4" y="344.9" font-size="8.2" fill="#111" font-family='"Liberation Sans", sans-serif' textLength="16.7" lengthAdjust="spacingAndGlyphs">Insert</text><text x="774.2" y="344.9" font-size="8.2" fill="#111" font-family='"Liberation Sans", sans-serif' textLength="14" lengthAdjust="spacingAndGlyphs">Item</text><text x="796.2" y="344.9" font-size="8.2" fill="#111" font-family='"Liberation Sans", sans-serif' textLength="16.7" lengthAdjust="spacingAndGlyphs">Track</text><text x="821.4" y="344.9" font-size="8.2" fill="#111" font-family='"Liberation Sans", sans-serif' textLength="23.8" lengthAdjust="spacingAndGlyphs">Options</text><text x="853.4" y="344.9" font-size="8.2" fill="#111" font-family='"Liberation Sans", sans-serif' textLength="23.6" lengthAdjust="spacingAndGlyphs">Actions</text><text x="885" y="344.9" font-size="8.2" fill="#111" font-family='"Liberation Sans", sans-serif' textLength="14.4" lengthAdjust="spacingAndGlyphs">Help</text><text x="957" y="344.7" font-size="8.2" fill="#111" font-family='"Liberation Sans", sans-serif' textLength="187.3" lengthAdjust="spacingAndGlyphs">[44.1kHz 24bit WAV : 2/2ch 1024spls ~57/213ms DirectSound]</text><rect x="685.2" y="347.9" width="462.9" height="347.7" fill="#303030"/><rect x="686.1" y="351.7" width="16.2" height="15.8" fill="#252525" rx="0.8"/><path d="M690.5 357.7 h3.2 l2 2 v4.8 h-5.2z" fill="#3a3a3a" stroke="#d6d6d6" stroke-width="0.9"/><circle cx="697.7" cy="355.9" r="1.6" fill="#5fe08a"/><rect x="686.1" y="369.2" width="16.2" height="15.8" fill="#8a9795" rx="0.8"/><rect x="689.5" y="372.8" width="4" height="7" fill="#3f9c99"/><rect x="695.5" y="376.6" width="4.2" height="6" fill="#3f9c99"/><path d="M692.3 373.6 L696.7 377.4 L694.7 378.2 L696.9 382 L692.5 381.8 L693.7 379.6Z" fill="#3bd468"/><rect x="703.53" y="351.7" width="16.2" height="15.8" fill="#252525" rx="0.8"/><rect x="706.73" y="357.5" width="6.6" height="7.8" fill="#cfcfcf" stroke="#d6d6d6" stroke-width="0.6"/><circle cx="709.93" cy="361.1" r="2.1" fill="#2a2a2a"/><circle cx="709.93" cy="361.1" r="0.8" fill="#cfcfcf"/><path d="M712.13 359.3 l4.6 -4.6" fill="none" stroke="#3bd468" stroke-width="1.7"/><path d="M713.53 353.9 h4 v4z" fill="#3bd468"/><rect x="703.53" y="369.2" width="16.2" height="15.8" fill="#8a9795" rx="0.8"/><rect x="706.13" y="371.8" width="4.2" height="3.6" fill="#3f9c99"/><rect x="713.53" y="379.2" width="4.2" height="3.6" fill="#3f9c99"/><line x1="706.13" y1="382.2" x2="716.93" y2="372" stroke="#f0f0f0" stroke-width="2.4"/><line x1="706.13" y1="382.2" x2="716.93" y2="372" stroke="#8a9795" stroke-width="0.8" stroke-dasharray="1.4 1.2"/><path d="M715.13 371.4 l2 2 M707.93 382.8 l-2.2 -2.2" fill="none" stroke="#f0f0f0" stroke-width="0.9"/><rect x="720.96" y="351.7" width="16.2" height="15.8" fill="#252525" rx="0.8"/><rect x="727.36" y="357.3" width="6.8" height="8.2" fill="#35c862" stroke="#3bd468" stroke-width="0.6"/><circle cx="730.76" cy="361.1" r="2.1" fill="#1f3a28"/><circle cx="730.76" cy="361.1" r="0.8" fill="#35c862"/><path d="M723.56 354.5 l3 2.6 M726.76 357.3 h-2.6 v-2.4" fill="none" stroke="#d6d6d6" stroke-width="1"/><rect x="720.96" y="369.2" width="16.2" height="15.8" fill="#252525" rx="0.8"/><rect x="723.56" y="371.8" width="2.6" height="2.2" fill="none" stroke="#3a9a98" stroke-width="0.8"/><rect x="727.36" y="371.8" width="2.6" height="2.2" fill="none" stroke="#3a9a98" stroke-width="0.8"/><rect x="731.16" y="371.8" width="2.6" height="2.2" fill="none" stroke="#3a9a98" stroke-width="0.8"/><rect x="723.56" y="375.4" width="2.6" height="2.2" fill="none" stroke="#3a9a98" stroke-width="0.8"/><rect x="727.36" y="375.4" width="2.6" height="2.2" fill="none" stroke="#3a9a98" stroke-width="0.8"/><rect x="731.16" y="375.4" width="2.6" height="2.2" fill="none" stroke="#3a9a98" stroke-width="0.8"/><rect x="723.56" y="379" width="2.6" height="2.2" fill="none" stroke="#3a9a98" stroke-width="0.8"/><rect x="727.36" y="379" width="2.6" height="2.2" fill="none" stroke="#3a9a98" stroke-width="0.8"/><rect x="731.16" y="379" width="2.6" height="2.2" fill="none" stroke="#3a9a98" stroke-width="0.8"/><rect x="731.16" y="375.2" width="4.4" height="2.6" fill="#3bd468"/><path d="M728.56 376.6 v5 l2 1.4 h2.6 v-3.6 l-2.6 -0.8 v-2z" fill="#fff" stroke="#333" stroke-width="0.4"/><rect x="738.39" y="351.7" width="16.2" height="15.8" fill="#252525" rx="0.8"/><path d="M741.79 358.5 h3 l1.8 1.8 v4.6 h-4.8z" fill="#3a3a3a" stroke="#d6d6d6" stroke-width="0.9"/><rect x="747.19" y="353.1" width="6.2" height="6.6" fill="#3f8f92" rx="2.6"/><text x="750.09" y="359.1" font-size="6.5" fill="#fff" font-family='"Liberation Sans", sans-serif' font-weight="bold" text-anchor="middle">i</text><rect x="738.39" y="369.2" width="16.2" height="15.8" fill="#8a9795" rx="0.8"/><path d="M740.99 375 l3 -0.2 l2.4 -3 l2.6 2.8 l3 0.2" fill="none" stroke="#f0f0f0" stroke-width="0.8"/><circle cx="740.79" cy="375" r="0.9" fill="#fff"/><circle cx="743.99" cy="374.8" r="0.9" fill="#fff"/><circle cx="746.39" cy="372" r="0.9" fill="#fff"/><circle cx="748.99" cy="374.8" r="0.9" fill="#fff"/><circle cx="752.19" cy="375" r="0.9" fill="#fff"/><rect x="742.79" y="379.4" width="7.4" height="2.4" fill="#3f9c99"/><path d="M739.99 380.6 L741.79 379.4 L741.79 381.8Z" fill="#f0f0f0"/><path d="M752.99 380.6 L751.19 379.4 L751.19 381.8Z" fill="#f0f0f0"/><rect x="755.82" y="351.7" width="16.2" height="15.8" fill="#252525" rx="0.8"/><path d="M759.82 356.9 h6.4 a3 3 0 0 1 0 6 h-3" fill="none" stroke="#de4a42" stroke-width="1.3"/><path d="M762.22 359.1 l-3 -2.2 l3 -2.2" fill="none" stroke="#de4a42" stroke-width="1.2"/><path d="M759.22 360.3 l4 5 M763.22 360.3 l-4 5" fill="none" stroke="#de4a42" stroke-width="1.2"/><rect x="755.82" y="369.2" width="16.2" height="15.8" fill="#8a9795" rx="0.8"/><line x1="758.82" y1="371.6" x2="758.82" y2="382.8" stroke="#b9c4c2" stroke-width="0.8" stroke-dasharray="1 0.8"/><line x1="761.42" y1="371.6" x2="761.42" y2="382.8" stroke="#b9c4c2" stroke-width="0.8" stroke-dasharray="1 0.8"/><line x1="764.02" y1="371.6" x2="764.02" y2="382.8" stroke="#b9c4c2" stroke-width="0.8" stroke-dasharray="1 0.8"/><line x1="766.62" y1="371.6" x2="766.62" y2="382.8" stroke="#b9c4c2" stroke-width="0.8" stroke-dasharray="1 0.8"/><line x1="769.22" y1="371.6" x2="769.22" y2="382.8" stroke="#b9c4c2" stroke-width="0.8" stroke-dasharray="1 0.8"/><rect x="773.25" y="351.7" width="16.2" height="15.8" fill="#252525" rx="0.8"/><path d="M785.25 356.9 h-6 a3 3 0 0 0 0 6 h3" fill="none" stroke="#3bd468" stroke-width="1.3"/><path d="M783.25 359.1 l3 -2.2 l-3 -2.2" fill="none" stroke="#3bd468" stroke-width="1.2"/><path d="M777.65 362.1 l1.6 2.4 l3.6 -4.6" fill="none" stroke="#3bd468" stroke-width="1.2"/><rect x="773.25" y="369.2" width="16.2" height="15.8" fill="#8a9795" rx="0.8"/><path d="M777.25 373 h5 a4 4 0 0 1 0 8 h-5" fill="none" stroke="#3bd468" stroke-width="1.8"/><line x1="777.25" y1="372.2" x2="777.25" y2="382" stroke="#b9c4c2" stroke-width="0.7" stroke-dasharray="1 1"/><rect x="790.68" y="351.7" width="16.2" height="15.8" fill="#252525" rx="0.8"/><path d="M797.28 364.9 l2.2 -9 h1.8 l2.2 9z" fill="none" stroke="#d6d6d6" stroke-width="1"/><line x1="793.28" y1="355.3" x2="799.28" y2="363.7" stroke="#3bd468" stroke-width="1.2"/><circle cx="796.08" cy="359.3" r="1" fill="#3bd468"/><rect x="790.68" y="369.2" width="16.2" height="15.8" fill="#252525" rx="0.8"/><rect x="793.28" y="376.8" width="7" height="5.4" fill="#f0f0f0" rx="0.6"/><path d="M794.58 376.8 v-1.6 a2.2 2.2 0 0 1 4.4 0 v1.6" fill="none" stroke="#f0f0f0" stroke-width="1.2"/><path d="M802.08 373.6 l1 1.2 l2 -2.6" fill="none" stroke="#3bd468" stroke-width="1"/><rect x="802.28" y="376.2" width="2.4" height="6" fill="none" stroke="#3bd468" stroke-width="0.7"/><rect x="831.6" y="356.7" width="316.5" height="7.1" fill="#404040"/><rect x="831.6" y="370.6" width="316.5" height="19.3" fill="#3d3d3d"/><g clip-path="url(#cpRuler)"><line x1="843.6" y1="385.5" x2="843.6" y2="389.9" stroke="#777" stroke-width="0.8"/><line x1="872.57" y1="386.6" x2="872.57" y2="389.9" stroke="#777" stroke-width="0.8"/><text x="845.5" y="377.3" font-size="7.4" fill="#6e6e6e" font-family='"Liberation Sans", sans-serif' textLength="17.6" lengthAdjust="spacingAndGlyphs">2.3.00</text><line x1="845.5" y1="379.5" x2="870.2" y2="379.5" stroke="#6e6e6e" stroke-width="0.6"/><text x="845.5" y="385.7" font-size="7.4" fill="#6e6e6e" font-family='"Liberation Sans", sans-serif' textLength="24.8" lengthAdjust="spacingAndGlyphs">0:03.000</text><line x1="901.55" y1="372.4" x2="901.55" y2="389.9" stroke="#b0b0b0" stroke-width="0.8"/><line x1="930.52" y1="386.6" x2="930.52" y2="389.9" stroke="#777" stroke-width="0.8"/><text x="903.45" y="377.3" font-size="7.4" fill="#c9c9c9" font-family='"Liberation Sans", sans-serif' textLength="17.6" lengthAdjust="spacingAndGlyphs">3.1.00</text><line x1="903.45" y1="379.5" x2="928.15" y2="379.5" stroke="#c9c9c9" stroke-width="0.6"/><text x="903.45" y="385.7" font-size="7.4" fill="#c9c9c9" font-family='"Liberation Sans", sans-serif' textLength="24.8" lengthAdjust="spacingAndGlyphs">0:04.000</text><line x1="959.5" y1="385.5" x2="959.5" y2="389.9" stroke="#777" stroke-width="0.8"/><line x1="988.47" y1="386.6" x2="988.47" y2="389.9" stroke="#777" stroke-width="0.8"/><text x="961.4" y="377.3" font-size="7.4" fill="#6e6e6e" font-family='"Liberation Sans", sans-serif' textLength="17.6" lengthAdjust="spacingAndGlyphs">3.3.00</text><line x1="961.4" y1="379.5" x2="986.1" y2="379.5" stroke="#6e6e6e" stroke-width="0.6"/><text x="961.4" y="385.7" font-size="7.4" fill="#6e6e6e" font-family='"Liberation Sans", sans-serif' textLength="24.8" lengthAdjust="spacingAndGlyphs">0:05.000</text><line x1="1017.45" y1="372.4" x2="1017.45" y2="389.9" stroke="#b0b0b0" stroke-width="0.8"/><line x1="1046.42" y1="386.6" x2="1046.42" y2="389.9" stroke="#777" stroke-width="0.8"/><text x="1019.35" y="377.3" font-size="7.4" fill="#c9c9c9" font-family='"Liberation Sans", sans-serif' textLength="17.6" lengthAdjust="spacingAndGlyphs">4.1.00</text><line x1="1019.35" y1="379.5" x2="1044.05" y2="379.5" stroke="#c9c9c9" stroke-width="0.6"/><text x="1019.35" y="385.7" font-size="7.4" fill="#c9c9c9" font-family='"Liberation Sans", sans-serif' textLength="24.8" lengthAdjust="spacingAndGlyphs">0:06.000</text><line x1="1075.4" y1="385.5" x2="1075.4" y2="389.9" stroke="#777" stroke-width="0.8"/><line x1="1104.37" y1="386.6" x2="1104.37" y2="389.9" stroke="#777" stroke-width="0.8"/><text x="1077.3" y="377.3" font-size="7.4" fill="#6e6e6e" font-family='"Liberation Sans", sans-serif' textLength="17.6" lengthAdjust="spacingAndGlyphs">4.3.00</text><line x1="1077.3" y1="379.5" x2="1102" y2="379.5" stroke="#6e6e6e" stroke-width="0.6"/><text x="1077.3" y="385.7" font-size="7.4" fill="#6e6e6e" font-family='"Liberation Sans", sans-serif' textLength="24.8" lengthAdjust="spacingAndGlyphs">0:07.000</text><line x1="1133.35" y1="372.4" x2="1133.35" y2="389.9" stroke="#b0b0b0" stroke-width="0.8"/><line x1="1162.32" y1="386.6" x2="1162.32" y2="389.9" stroke="#777" stroke-width="0.8"/><text x="1135.25" y="377.3" font-size="7.4" fill="#c9c9c9" font-family='"Liberation Sans", sans-serif' textLength="17.6" lengthAdjust="spacingAndGlyphs">5.1.00</text><line x1="1135.25" y1="379.5" x2="1159.95" y2="379.5" stroke="#c9c9c9" stroke-width="0.6"/><text x="1135.25" y="385.7" font-size="7.4" fill="#c9c9c9" font-family='"Liberation Sans", sans-serif' textLength="24.8" lengthAdjust="spacingAndGlyphs">0:08.000</text></g><rect x="831.6" y="389.9" width="306.6" height="91.5" fill="#c3c6c5"/><rect x="831.6" y="389.9" width="306.6" height="8.8" fill="#c8cccb"/><rect x="831.6" y="398.7" width="306.6" height="57.7" fill="#a9aead"/><line x1="831.6" y1="456.6" x2="1138.2" y2="456.6" stroke="#8b908f" stroke-width="0.8"/><line x1="843.6" y1="389.9" x2="843.6" y2="481.2" stroke="#9fa7a6" stroke-width="0.6" opacity="0.8"/><line x1="872.58" y1="389.9" x2="872.58" y2="481.2" stroke="#b4bbba" stroke-width="0.6" opacity="0.8"/><line x1="901.55" y1="389.9" x2="901.55" y2="481.2" stroke="#9fa7a6" stroke-width="0.6" opacity="0.8"/><line x1="930.53" y1="389.9" x2="930.53" y2="481.2" stroke="#b4bbba" stroke-width="0.6" opacity="0.8"/><line x1="959.5" y1="389.9" x2="959.5" y2="481.2" stroke="#9fa7a6" stroke-width="0.6" opacity="0.8"/><line x1="988.48" y1="389.9" x2="988.48" y2="481.2" stroke="#b4bbba" stroke-width="0.6" opacity="0.8"/><line x1="1017.45" y1="389.9" x2="1017.45" y2="481.2" stroke="#9fa7a6" stroke-width="0.6" opacity="0.8"/><line x1="1046.42" y1="389.9" x2="1046.42" y2="481.2" stroke="#b4bbba" stroke-width="0.6" opacity="0.8"/><line x1="1075.4" y1="389.9" x2="1075.4" y2="481.2" stroke="#9fa7a6" stroke-width="0.6" opacity="0.8"/><line x1="1104.38" y1="389.9" x2="1104.38" y2="481.2" stroke="#b4bbba" stroke-width="0.6" opacity="0.8"/><line x1="1133.35" y1="389.9" x2="1133.35" y2="481.2" stroke="#9fa7a6" stroke-width="0.6" opacity="0.8"/><g clip-path="url(#cpLane)"><path d="M831.6 412.11 L832.1 411.9 L832.6 412.18 L833.1 412.03 L833.6 411.81 L834.1 412.14 L834.6 411.92 L835.1 408.05 L835.6 404.06 L836.1 406.37 L836.6 408 L837.1 409.38 L837.6 410.15 L838.1 410.48 L838.6 410.81 L839.1 411.11 L839.6 410.95 L840.1 410.9 L840.6 411.38 L841.1 411.06 L841.6 411.49 L842.1 411.6 L842.6 411.3 L843.1 411.54 L843.6 411.76 L844.1 411.97 L844.6 411.71 L845.1 411.55 L845.6 412.02 L846.1 412.15 L846.6 411.89 L847.1 411.74 L847.6 411.72 L848.1 411.86 L848.6 411.86 L849.1 411.94 L849.6 412.11 L850.1 411.92 L850.6 411.97 L851.1 411.86 L851.6 411.89 L852.1 411.99 L852.6 412.29 L853.1 411.78 L853.6 411.96 L854.1 412.09 L854.6 412.1 L855.1 412.21 L855.6 407.6 L856.1 402.16 L856.6 404.94 L857.1 406.92 L857.6 408.74 L858.1 409.24 L858.6 410.43 L859.1 410.49 L859.6 410.98 L860.1 410.72 L860.6 411.34 L861.1 411.37 L861.6 411.38 L862.1 411.71 L862.6 411.11 L863.1 411.16 L863.6 411.37 L864.1 411.69 L864.6 411.94 L865.1 411.77 L865.6 411.49 L866.1 408.52 L866.6 405.69 L867.1 408.07 L867.6 409.17 L868.1 410.35 L868.6 410.49 L869.1 411.03 L869.6 411.16 L870.1 410.95 L870.6 411.15 L871.1 411.62 L871.6 411.55 L872.1 411.94 L872.6 411.93 L873.1 411.61 L873.6 411.85 L874.1 411.65 L874.6 411.98 L875.1 411.72 L875.6 412.11 L876.1 411.72 L876.6 411.67 L877.1 411.95 L877.6 411.89 L878.1 412.03 L878.6 412.15 L879.1 411.61 L879.6 411.65 L880.1 412.04 L880.6 411.77 L881.1 411.81 L881.6 412.15 L882.1 412.09 L882.6 412.25 L883.1 412.22 L883.6 412.1 L884.1 411.68 L884.6 411.92 L885.1 411.92 L885.6 411.74 L886.1 412.05 L886.6 409.55 L887.1 405.45 L887.6 407.8 L888.1 409.51 L888.6 409.86 L889.1 410.67 L889.6 410.79 L890.1 410.88 L890.6 411.39 L891.1 411.37 L891.6 411.68 L892.1 411.54 L892.6 411.35 L893.1 411.56 L893.6 411.7 L894.1 411.98 L894.6 411.96 L895.1 411.74 L895.6 411.8 L896.1 411.57 L896.6 411.81 L897.1 406.95 L897.6 402.09 L898.1 405.21 L898.6 407.79 L899.1 409.32 L899.6 409.29 L900.1 410.11 L900.6 410.6 L901.1 410.68 L901.6 410.84 L902.1 411.2 L902.6 411.34 L903.1 411.36 L903.6 411.48 L904.1 411.14 L904.6 411.36 L905.1 411.53 L905.6 411.49 L906.1 411.43 L906.6 411.81 L907.1 411.79 L907.6 411.84 L908.1 411.83 L908.6 411.85 L909.1 412.08 L909.6 411.81 L910.1 411.95 L910.6 412.09 L911.1 411.83 L911.6 412.07 L912.1 412.17 L912.6 411.83 L913.1 411.98 L913.6 411.95 L914.1 412.15 L914.6 411.75 L915.1 412.14 L915.6 411.73 L916.1 412.17 L916.6 411.94 L917.1 412.05 L917.6 408.35 L918.1 404.93 L918.6 406.5 L919.1 408.67 L919.6 409.62 L920.1 410.15 L920.6 410.74 L921.1 411.14 L921.6 411.09 L922.1 410.89 L922.6 411.18 L923.1 411.61 L923.6 411.39 L924.1 411.34 L924.6 411.42 L925.1 411.51 L925.6 411.44 L926.1 411.73 L926.6 412.09 L927.1 412.04 L927.6 411.72 L928.1 408.76 L928.6 405.05 L929.1 407.27 L929.6 409.19 L930.1 410.37 L930.6 410.48 L931.1 411.05 L931.6 411.17 L932.1 411.47 L932.6 411.65 L933.1 411.37 L933.6 411.54 L934.1 411.38 L934.6 411.7 L935.1 411.82 L935.6 411.63 L936.1 411.63 L936.6 411.94 L937.1 411.76 L937.6 411.6 L938.1 407.8 L938.6 402.37 L939.1 402.52 L939.6 406.24 L940.1 407.65 L940.6 409.32 L941.1 410.23 L941.6 410.58 L942.1 410.32 L942.6 410.6 L943.1 410.81 L943.6 411.27 L944.1 411.34 L944.6 411.2 L945.1 411.49 L945.6 411.54 L946.1 411.38 L946.6 411.67 L947.1 411.36 L947.6 411.43 L948.1 411.92 L948.6 409.06 L949.1 406.36 L949.6 408.11 L950.1 408.97 L950.6 409.87 L951.1 410.49 L951.6 410.64 L952.1 411.31 L952.6 411.16 L953.1 411.17 L953.6 411.63 L954.1 411.27 L954.6 411.3 L955.1 411.57 L955.6 411.45 L956.1 411.85 L956.6 411.73 L957.1 411.88 L957.6 411.69 L958.1 411.84 L958.6 411.63 L959.1 408.74 L959.6 403.72 L960.1 406.84 L960.6 408.86 L961.1 409.25 L961.6 410.19 L962.1 410.52 L962.6 411.2 L963.1 411.16 L963.6 411.37 L964.1 411.4 L964.6 411.34 L965.1 411.61 L965.6 411.66 L966.1 411.2 L966.6 411.81 L967.1 411.71 L967.6 411.72 L968.1 411.69 L968.6 411.96 L969.1 412.15 L969.6 411.9 L970.1 411.96 L970.6 411.54 L971.1 412.19 L971.6 411.97 L972.1 411.98 L972.6 411.99 L973.1 412.15 L973.6 411.83 L974.1 411.84 L974.6 411.74 L975.1 411.76 L975.6 412.22 L976.1 411.65 L976.6 411.78 L977.1 411.93 L977.6 412.2 L978.1 411.7 L978.6 412.06 L979.1 411.9 L979.6 406.91 L980.1 399.68 L980.6 404.78 L981.1 406.91 L981.6 408.05 L982.1 409.4 L982.6 409.51 L983.1 410.34 L983.6 410.56 L984.1 410.79 L984.6 411.14 L985.1 411.42 L985.6 411.56 L986.1 411.57 L986.6 411.21 L987.1 411.82 L987.6 411.85 L988.1 411.73 L988.6 411.7 L989.1 411.59 L989.6 411.61 L990.1 409.07 L990.6 405.75 L991.1 408.1 L991.6 409.77 L992.1 410.05 L992.6 410.95 L993.1 410.86 L993.6 410.66 L994.1 411.41 L994.6 411.29 L995.1 411.73 L995.6 411.34 L996.1 411.57 L996.6 411.54 L997.1 411.34 L997.6 411.37 L998.1 411.94 L998.6 411.55 L999.1 412.11 L999.6 411.54 L1000.1 408.47 L1000.6 404.89 L1001.1 406.4 L1001.6 408.55 L1002.1 409.15 L1002.6 409.81 L1003.1 410.46 L1003.6 410.78 L1004.1 411.07 L1004.6 411.24 L1005.1 410.95 L1005.6 411.41 L1006.1 411.43 L1006.6 411.7 L1007.1 411.4 L1007.6 411.53 L1008.1 411.45 L1008.6 411.84 L1009.1 411.8 L1009.6 411.84 L1010.1 411.86 L1010.6 412.1 L1011.1 412.1 L1011.6 411.8 L1012.1 411.61 L1012.6 411.9 L1013.1 411.98 L1013.6 412.1 L1014.1 411.97 L1014.6 412.12 L1015.1 412.15 L1015.6 411.96 L1016.1 411.88 L1016.6 411.65 L1017.1 411.94 L1017.6 412.28 L1018.1 411.92 L1018.6 412.07 L1019.1 411.84 L1019.6 412.16 L1020.1 411.74 L1020.6 412.24 L1021.1 407 L1021.6 401.51 L1022.1 406.25 L1022.6 408.1 L1023.1 409.01 L1023.6 409.5 L1024.1 410.54 L1024.6 410.6 L1025.1 410.46 L1025.6 410.81 L1026.1 411.45 L1026.6 411.19 L1027.1 411.61 L1027.6 411.67 L1028.1 411.45 L1028.6 411.73 L1029.1 411.7 L1029.6 411.55 L1030.1 411.6 L1030.6 411.66 L1031.1 409.05 L1031.6 405.56 L1032.1 406.54 L1032.6 408.23 L1033.1 409.53 L1033.6 410.34 L1034.1 410.86 L1034.6 410.8 L1035.1 410.98 L1035.6 411.13 L1036.1 411.52 L1036.6 411.46 L1037.1 411.37 L1037.6 411.53 L1038.1 411.49 L1038.6 411.68 L1039.1 411.61 L1039.6 411.96 L1040.1 411.76 L1040.6 411.99 L1041.1 412.13 L1041.6 408.85 L1042.1 405 L1042.6 406.94 L1043.1 409.22 L1043.6 409.79 L1044.1 410.4 L1044.6 410.61 L1045.1 411.06 L1045.6 410.75 L1046.1 411.19 L1046.6 411.32 L1047.1 411.25 L1047.6 411.65 L1048.1 411.61 L1048.6 411.5 L1049.1 411.64 L1049.6 411.67 L1050.1 412.06 L1050.6 411.88 L1051.1 411.47 L1051.6 412 L1052.1 409.5 L1052.6 407.54 L1053.1 409.21 L1053.6 410.11 L1054.1 411.04 L1054.6 410.97 L1055.1 411.35 L1055.6 411.22 L1056.1 411.52 L1056.6 411.59 L1057.1 411.84 L1057.6 411.52 L1058.1 411.68 L1058.6 411.69 L1059.1 411.72 L1059.6 411.95 L1060.1 411.9 L1060.6 411.84 L1061.1 412.14 L1061.6 411.89 L1062.1 406.93 L1062.6 401.49 L1063.1 403.41 L1063.6 406.45 L1064.1 408.37 L1064.6 409.33 L1065.1 409.93 L1065.6 410.5 L1066.1 410.9 L1066.6 411.05 L1067.1 410.99 L1067.6 411.27 L1068.1 411.49 L1068.6 411.45 L1069.1 411.31 L1069.6 411.38 L1070.1 411.53 L1070.6 411.53 L1071.1 412.03 L1071.6 411.51 L1072.1 411.75 L1072.6 409.29 L1073.1 405.83 L1073.6 407.98 L1074.1 408.75 L1074.6 410.26 L1075.1 410.62 L1075.6 411.09 L1076.1 411.22 L1076.6 410.97 L1077.1 411.5 L1077.6 411.33 L1078.1 411.69 L1078.6 411.69 L1079.1 411.61 L1079.6 411.71 L1080.1 411.81 L1080.6 411.61 L1081.1 411.85 L1081.6 411.56 L1082.1 411.57 L1082.6 411.68 L1083.1 408.19 L1083.6 405.94 L1084.1 408.08 L1084.6 409.19 L1085.1 409.9 L1085.6 410.36 L1086.1 410.71 L1086.6 410.9 L1087.1 411.32 L1087.6 411.25 L1088.1 411.45 L1088.6 411.16 L1089.1 411.83 L1089.6 411.66 L1090.1 411.41 L1090.6 411.84 L1091.1 411.9 L1091.6 411.83 L1092.1 411.81 L1092.6 411.9 L1093.1 411.85 L1093.6 411.93 L1094.1 412.03 L1094.6 412.13 L1095.1 411.98 L1095.6 411.85 L1096.1 411.78 L1096.6 412.03 L1097.1 411.99 L1097.6 412.04 L1098.1 412.2 L1098.6 411.96 L1099.1 411.92 L1099.6 412.09 L1100.1 411.86 L1100.6 411.87 L1101.1 411.65 L1101.6 412.11 L1102.1 411.94 L1102.6 411.66 L1103.1 412.04 L1103.6 407.84 L1104.1 401.24 L1104.6 404.88 L1105.1 407.04 L1105.6 408.56 L1106.1 409.4 L1106.6 410.31 L1107.1 410.62 L1107.6 410.6 L1108.1 411 L1108.6 410.8 L1109.1 411.46 L1109.6 411.39 L1110.1 411.36 L1110.6 411.25 L1111.1 411.67 L1111.6 411.58 L1112.1 411.76 L1112.6 411.75 L1113.1 411.45 L1113.6 411.65 L1114.1 411.79 L1114.6 411.73 L1115.1 411.87 L1115.6 411.88 L1116.1 412.08 L1116.6 411.84 L1117.1 412.13 L1117.6 411.92 L1118.1 411.76 L1118.6 412.2 L1119.1 412.12 L1119.6 412.02 L1120.1 411.87 L1120.6 412.12 L1121.1 412.02 L1121.6 412.3 L1122.1 412.11 L1122.6 412.06 L1123.1 412.15 L1123.6 411.8 L1124.1 408.26 L1124.6 404.55 L1125.1 406.32 L1125.6 407.56 L1126.1 408.98 L1126.6 410.37 L1127.1 410.55 L1127.6 410.71 L1128.1 410.78 L1128.6 411.33 L1129.1 411.06 L1129.6 411.08 L1130.1 411.38 L1130.6 411.64 L1131.1 411.64 L1131.6 411.57 L1132.1 411.66 L1132.6 411.5 L1133.1 411.65 L1133.6 411.48 L1134.1 411.94 L1134.6 409.05 L1135.1 405.71 L1135.6 407.48 L1136.1 409.28 L1136.6 410.18 L1137.1 410.24 L1137.6 410.94 L1138.1 411.1 L1138.1 415.82 L1137.6 415.82 L1137.1 416.28 L1136.6 416.96 L1136.1 417.67 L1135.6 419.15 L1135.1 421.22 L1134.6 417.65 L1134.1 414.84 L1133.6 415.15 L1133.1 415.23 L1132.6 415.29 L1132.1 415.17 L1131.6 415.04 L1131.1 414.82 L1130.6 415.12 L1130.1 415.34 L1129.6 415.51 L1129.1 415.61 L1128.6 415.4 L1128.1 415.63 L1127.6 415.98 L1127.1 416.52 L1126.6 416.42 L1126.1 417.36 L1125.6 419.13 L1125.1 421.76 L1124.6 422.95 L1124.1 418.57 L1123.6 414.92 L1123.1 414.41 L1122.6 414.59 L1122.1 414.5 L1121.6 414.38 L1121.1 414.61 L1120.6 414.64 L1120.1 414.73 L1119.6 414.63 L1119.1 414.45 L1118.6 414.47 L1118.1 414.88 L1117.6 414.69 L1117.1 414.69 L1116.6 414.7 L1116.1 414.56 L1115.6 414.86 L1115.1 414.63 L1114.6 415.12 L1114.1 414.88 L1113.6 415.04 L1113.1 415.18 L1112.6 414.87 L1112.1 414.88 L1111.6 415.27 L1111.1 414.97 L1110.6 415.29 L1110.1 415.35 L1109.6 415.36 L1109.1 415.48 L1108.6 415.7 L1108.1 415.97 L1107.6 416.18 L1107.1 415.91 L1106.6 416.66 L1106.1 416.97 L1105.6 418.2 L1105.1 419.16 L1104.6 421.22 L1104.1 424.73 L1103.6 419.79 L1103.1 414.81 L1102.6 415.08 L1102.1 414.74 L1101.6 414.69 L1101.1 414.8 L1100.6 414.81 L1100.1 414.77 L1099.6 414.44 L1099.1 414.96 L1098.6 414.71 L1098.1 414.45 L1097.6 414.63 L1097.1 414.75 L1096.6 414.56 L1096.1 414.8 L1095.6 414.74 L1095.1 414.68 L1094.6 414.58 L1094.1 414.68 L1093.6 414.96 L1093.1 414.79 L1092.6 414.84 L1092.1 415.09 L1091.6 414.71 L1091.1 414.93 L1090.6 415.06 L1090.1 415.15 L1089.6 415.01 L1089.1 414.84 L1088.6 415.58 L1088.1 415.43 L1087.6 415.4 L1087.1 415.35 L1086.6 416.12 L1086.1 416.01 L1085.6 416.29 L1085.1 416.93 L1084.6 417.45 L1084.1 418.91 L1083.6 421.85 L1083.1 418.29 L1082.6 414.83 L1082.1 414.9 L1081.6 414.9 L1081.1 414.81 L1080.6 415.14 L1080.1 414.92 L1079.6 415.01 L1079.1 415.28 L1078.6 415 L1078.1 415 L1077.6 415.5 L1077.1 415.42 L1076.6 415.66 L1076.1 415.41 L1075.6 415.59 L1075.1 416.13 L1074.6 416.35 L1074.1 417.74 L1073.6 419.17 L1073.1 421.44 L1072.6 417.73 L1072.1 414.96 L1071.6 415.27 L1071.1 414.78 L1070.6 415.29 L1070.1 415 L1069.6 415.4 L1069.1 415.36 L1068.6 414.98 L1068.1 415.37 L1067.6 415.38 L1067.1 416 L1066.6 415.73 L1066.1 416.03 L1065.6 416.58 L1065.1 417.08 L1064.6 417.62 L1064.1 418.23 L1063.6 420.13 L1063.1 423.23 L1062.6 425.5 L1062.1 420.09 L1061.6 414.91 L1061.1 414.49 L1060.6 414.77 L1060.1 414.77 L1059.6 414.64 L1059.1 414.85 L1058.6 414.97 L1058.1 414.92 L1057.6 415.4 L1057.1 414.79 L1056.6 414.95 L1056.1 414.96 L1055.6 415.36 L1055.1 415.22 L1054.6 415.7 L1054.1 415.88 L1053.6 416.62 L1053.1 417.21 L1052.6 419.14 L1052.1 416.86 L1051.6 414.79 L1051.1 415.19 L1050.6 414.74 L1050.1 414.71 L1049.6 414.96 L1049.1 414.9 L1048.6 415.25 L1048.1 415.23 L1047.6 414.93 L1047.1 415.61 L1046.6 415.47 L1046.1 415.76 L1045.6 415.96 L1045.1 415.67 L1044.6 416.32 L1044.1 416.27 L1043.6 417.52 L1043.1 417.62 L1042.6 419.86 L1042.1 422.58 L1041.6 417.73 L1041.1 414.62 L1040.6 414.71 L1040.1 414.99 L1039.6 414.66 L1039.1 415.03 L1038.6 414.91 L1038.1 415.1 L1037.6 415.08 L1037.1 415.28 L1036.6 415.23 L1036.1 415.11 L1035.6 415.37 L1035.1 415.76 L1034.6 415.95 L1034.1 416.06 L1033.6 416.62 L1033.1 417.07 L1032.6 418.13 L1032.1 419.89 L1031.6 421.05 L1031.1 417.82 L1030.6 414.98 L1030.1 415.13 L1029.6 415.02 L1029.1 414.85 L1028.6 414.99 L1028.1 415.17 L1027.6 415.02 L1027.1 415.08 L1026.6 415.51 L1026.1 415.41 L1025.6 415.84 L1025.1 415.92 L1024.6 415.86 L1024.1 416.15 L1023.6 416.97 L1023.1 417.91 L1022.6 418.85 L1022.1 421.47 L1021.6 425.45 L1021.1 419.66 L1020.6 414.46 L1020.1 414.96 L1019.6 414.38 L1019.1 414.89 L1018.6 414.63 L1018.1 414.73 L1017.6 414.46 L1017.1 414.79 L1016.6 414.87 L1016.1 414.71 L1015.6 414.76 L1015.1 414.53 L1014.6 414.73 L1014.1 414.68 L1013.6 414.7 L1013.1 414.78 L1012.6 414.97 L1012.1 414.96 L1011.6 414.9 L1011.1 414.64 L1010.6 414.56 L1010.1 414.7 L1009.6 414.85 L1009.1 414.93 L1008.6 414.81 L1008.1 415.14 L1007.6 415.03 L1007.1 415.25 L1006.6 414.86 L1006.1 415.25 L1005.6 415.12 L1005.1 415.6 L1004.6 415.49 L1004.1 415.92 L1003.6 415.79 L1003.1 416.22 L1002.6 416.66 L1002.1 417.63 L1001.6 418.33 L1001.1 420.78 L1000.6 421.72 L1000.1 417.85 L999.6 415.06 L999.1 414.74 L998.6 415.28 L998.1 414.69 L997.6 415.12 L997.1 415.15 L996.6 415.28 L996.1 415.15 L995.6 415.33 L995.1 415.07 L994.6 415.29 L994.1 415.48 L993.6 416.07 L993.1 415.92 L992.6 415.86 L992.1 416.64 L991.6 417.2 L991.1 418.43 L990.6 421.31 L990.1 417.35 L989.6 414.93 L989.1 415.35 L988.6 414.78 L988.1 414.82 L987.6 414.88 L987.1 415.03 L986.6 415.56 L986.1 415.19 L985.6 415.12 L985.1 415.53 L984.6 415.53 L984.1 415.93 L983.6 415.96 L983.1 416.07 L982.6 417.1 L982.1 417.5 L981.6 418.15 L981.1 419.8 L980.6 423.12 L980.1 427.87 L979.6 419.91 L979.1 414.6 L978.6 414.68 L978.1 414.95 L977.6 414.56 L977.1 414.77 L976.6 414.88 L976.1 414.92 L975.6 414.56 L975.1 414.85 L974.6 414.87 L974.1 414.81 L973.6 414.91 L973.1 414.6 L972.6 414.6 L972.1 414.74 L971.6 414.63 L971.1 414.43 L970.6 415.2 L970.1 414.65 L969.6 414.74 L969.1 414.59 L968.6 414.85 L968.1 414.97 L967.6 414.82 L967.1 414.98 L966.6 414.91 L966.1 415.48 L965.6 415.01 L965.1 414.98 L964.6 415.3 L964.1 415.44 L963.6 415.18 L963.1 415.59 L962.6 415.75 L962.1 416.54 L961.6 416.89 L961.1 417.26 L960.6 418.38 L960.1 420.45 L959.6 423.62 L959.1 418.06 L958.6 415.09 L958.1 414.88 L957.6 415.05 L957.1 414.92 L956.6 415.03 L956.1 414.81 L955.6 415.31 L955.1 415.02 L954.6 415.24 L954.1 415.44 L953.6 414.99 L953.1 415.8 L952.6 415.52 L952.1 415.36 L951.6 415.99 L951.1 416.43 L950.6 416.5 L950.1 417.44 L949.6 418.86 L949.1 421.33 L948.6 418.13 L948.1 414.84 L947.6 415.15 L947.1 415.21 L946.6 414.96 L946.1 415.14 L945.6 415.3 L945.1 415.1 L944.6 415.55 L944.1 415.33 L943.6 415.63 L943.1 415.7 L942.6 416.18 L942.1 416.07 L941.6 416.14 L941.1 416.83 L940.6 417.72 L940.1 418.43 L939.6 421.12 L939.1 423.44 L938.6 424.84 L938.1 419.15 L937.6 414.99 L937.1 414.85 L936.6 414.86 L936.1 414.89 L935.6 415.21 L935.1 414.84 L934.6 415.12 L934.1 415.28 L933.6 415.04 L933.1 415.13 L932.6 415.17 L932.1 415.34 L931.6 415.49 L931.1 415.65 L930.6 416.43 L930.1 416.5 L929.6 417.68 L929.1 419.3 L928.6 421.66 L928.1 418.21 L927.6 414.93 L927.1 414.7 L926.6 414.58 L926.1 414.88 L925.6 415.23 L925.1 415.07 L924.6 415.38 L924.1 415.19 L923.6 415.13 L923.1 415.03 L922.6 415.33 L922.1 415.54 L921.6 415.67 L921.1 415.76 L920.6 415.88 L920.1 416.52 L919.6 416.74 L919.1 417.9 L918.6 420.14 L918.1 422.15 L917.6 418.55 L917.1 414.47 L916.6 414.65 L916.1 414.45 L915.6 414.91 L915.1 414.59 L914.6 414.79 L914.1 414.51 L913.6 414.56 L913.1 414.74 L912.6 414.84 L912.1 414.44 L911.6 414.7 L911.1 414.75 L910.6 414.59 L910.1 414.69 L909.6 414.89 L909.1 414.67 L908.6 415.04 L908.1 415.04 L907.6 414.96 L907.1 414.88 L906.6 414.97 L906.1 415.18 L905.6 415.05 L905.1 415.28 L904.6 415.48 L904.1 415.29 L903.6 415.05 L903.1 415.2 L902.6 415.48 L902.1 415.52 L901.6 415.62 L901.1 416.09 L900.6 416.14 L900.1 416.72 L899.6 417.1 L899.1 417.86 L898.6 419.05 L898.1 422.2 L897.6 425.11 L897.1 420.23 L896.6 414.9 L896.1 415.04 L895.6 414.85 L895.1 415.18 L894.6 414.7 L894.1 414.67 L893.6 414.97 L893.1 415.27 L892.6 415.15 L892.1 415.13 L891.6 414.98 L891.1 415.42 L890.6 415.36 L890.1 415.56 L889.6 415.93 L889.1 416.09 L888.6 417.12 L888.1 417.58 L887.6 419.05 L887.1 421.1 L886.6 417.3 L886.1 414.67 L885.6 414.73 L885.1 414.62 L884.6 414.93 L884.1 414.91 L883.6 414.53 L883.1 414.6 L882.6 414.56 L882.1 414.43 L881.6 414.4 L881.1 414.83 L880.6 414.89 L880.1 414.79 L879.6 414.9 L879.1 414.93 L878.6 414.51 L878.1 414.67 L877.6 414.73 L877.1 414.77 L876.6 414.96 L876.1 414.86 L875.6 414.59 L875.1 414.87 L874.6 414.64 L874.1 414.98 L873.6 414.83 L873.1 415.21 L872.6 414.98 L872.1 414.75 L871.6 415.23 L871.1 415.15 L870.6 415.28 L870.1 415.46 L869.6 415.6 L869.1 415.8 L868.6 416.06 L868.1 416.72 L867.6 417.43 L867.1 418.69 L866.6 420.59 L866.1 418.08 L865.6 415.27 L865.1 414.72 L864.6 414.87 L864.1 415.01 L863.6 415.28 L863.1 415.31 L862.6 415.41 L862.1 415.25 L861.6 415.5 L861.1 415.36 L860.6 415.54 L860.1 415.82 L859.6 415.96 L859.1 416.27 L858.6 416.53 L858.1 417.3 L857.6 418.24 L857.1 419.61 L856.6 422.44 L856.1 425.52 L855.6 419.9 L855.1 414.48 L854.6 414.65 L854.1 414.62 L853.6 414.72 L853.1 414.95 L852.6 414.48 L852.1 414.68 L851.6 414.83 L851.1 414.68 L850.6 414.57 L850.1 414.63 L849.6 414.7 L849.1 414.8 L848.6 414.9 L848.1 414.8 L847.6 414.99 L847.1 415.12 L846.6 414.75 L846.1 414.55 L845.6 414.77 L845.1 415.29 L844.6 415.13 L844.1 414.58 L843.6 414.95 L843.1 415.07 L842.6 415.12 L842.1 415.02 L841.6 415.41 L841.1 415.54 L840.6 415.56 L840.1 415.87 L839.6 415.69 L839.1 415.7 L838.6 416.01 L838.1 416.03 L837.6 416.64 L837.1 417.76 L836.6 418.43 L836.1 420.78 L835.6 424.45 L835.1 418.69 L834.6 414.74 L834.1 414.56 L833.6 414.91 L833.1 414.53 L832.6 414.37 L832.1 414.64 L831.6 414.52Z" fill="#3a3d3d"/><path d="M831.6 440.44 L832.1 440.5 L832.6 440.51 L833.1 440.41 L833.6 440.25 L834.1 440.4 L834.6 440.26 L835.1 436.27 L835.6 432.3 L836.1 435.08 L836.6 436.78 L837.1 438.29 L837.6 438.37 L838.1 438.8 L838.6 438.86 L839.1 439.24 L839.6 439.4 L840.1 439.79 L840.6 439.85 L841.1 439.57 L841.6 439.68 L842.1 439.8 L842.6 439.62 L843.1 440.01 L843.6 439.8 L844.1 440.19 L844.6 440.34 L845.1 440.4 L845.6 440.38 L846.1 440.06 L846.6 440.05 L847.1 440.05 L847.6 440.19 L848.1 440.45 L848.6 440.36 L849.1 440.45 L849.6 440.29 L850.1 440.13 L850.6 440.26 L851.1 440.01 L851.6 440.33 L852.1 440.29 L852.6 440.48 L853.1 440.59 L853.6 440.5 L854.1 440.04 L854.6 440.43 L855.1 440.41 L855.6 435.56 L856.1 430.24 L856.6 433.08 L857.1 435.19 L857.6 437.3 L858.1 437.37 L858.6 438.59 L859.1 438.61 L859.6 439.22 L860.1 438.81 L860.6 439.11 L861.1 439.54 L861.6 439.92 L862.1 439.44 L862.6 439.38 L863.1 439.99 L863.6 440.13 L864.1 439.63 L864.6 439.83 L865.1 439.83 L865.6 439.93 L866.1 437.29 L866.6 433.91 L867.1 435.96 L867.6 438.11 L868.1 438.48 L868.6 438.57 L869.1 439.31 L869.6 439.07 L870.1 439.32 L870.6 439.57 L871.1 439.91 L871.6 439.96 L872.1 439.7 L872.6 439.77 L873.1 439.75 L873.6 440.12 L874.1 440.33 L874.6 440.26 L875.1 440.12 L875.6 440.03 L876.1 440.18 L876.6 440.02 L877.1 439.94 L877.6 440.13 L878.1 440.11 L878.6 440.13 L879.1 439.91 L879.6 440.1 L880.1 440.5 L880.6 440.52 L881.1 440.09 L881.6 440.39 L882.1 440.37 L882.6 440.32 L883.1 440.16 L883.6 440.46 L884.1 440.41 L884.6 440.26 L885.1 440.4 L885.6 440.2 L886.1 439.94 L886.6 437.86 L887.1 434.26 L887.6 435.6 L888.1 437.84 L888.6 438.22 L889.1 439.03 L889.6 439.26 L890.1 439.4 L890.6 439.67 L891.1 439.73 L891.6 439.98 L892.1 440.07 L892.6 440.2 L893.1 439.98 L893.6 440.07 L894.1 440.33 L894.6 439.92 L895.1 439.99 L895.6 439.96 L896.1 439.99 L896.6 439.93 L897.1 435.04 L897.6 430.19 L898.1 434.57 L898.6 436.46 L899.1 436.83 L899.6 438.29 L900.1 438.7 L900.6 438.75 L901.1 439.15 L901.6 439.4 L902.1 439.47 L902.6 439.67 L903.1 439.87 L903.6 440.08 L904.1 439.9 L904.6 439.67 L905.1 439.74 L905.6 439.81 L906.1 440.04 L906.6 439.79 L907.1 440 L907.6 440.01 L908.1 439.92 L908.6 439.99 L909.1 440.48 L909.6 440.32 L910.1 440.09 L910.6 440.32 L911.1 440.08 L911.6 440.24 L912.1 440.44 L912.6 440.18 L913.1 439.99 L913.6 440.22 L914.1 440.16 L914.6 440.49 L915.1 440.35 L915.6 440.53 L916.1 440.12 L916.6 440.27 L917.1 440.4 L917.6 436.52 L918.1 432.83 L918.6 435.62 L919.1 437.1 L919.6 438.28 L920.1 438.73 L920.6 438.74 L921.1 439.07 L921.6 439.71 L922.1 439.79 L922.6 439.67 L923.1 439.52 L923.6 439.54 L924.1 440.04 L924.6 439.65 L925.1 440.08 L925.6 440.16 L926.1 439.9 L926.6 440.16 L927.1 439.76 L927.6 439.96 L928.1 436.8 L928.6 433.3 L929.1 436.11 L929.6 437.48 L930.1 438.45 L930.6 438.63 L931.1 439.16 L931.6 439.59 L932.1 439.24 L932.6 439.19 L933.1 439.96 L933.6 439.96 L934.1 439.94 L934.6 439.78 L935.1 439.96 L935.6 440.27 L936.1 440.22 L936.6 439.95 L937.1 440.24 L937.6 439.78 L938.1 436.09 L938.6 429.45 L939.1 432 L939.6 434.19 L940.1 436.99 L940.6 437.45 L941.1 438.01 L941.6 438.62 L942.1 438.89 L942.6 439.13 L943.1 439.38 L943.6 439.78 L944.1 439.54 L944.6 439.75 L945.1 439.61 L945.6 439.61 L946.1 439.88 L946.6 440.14 L947.1 439.9 L947.6 439.8 L948.1 440.32 L948.6 437.42 L949.1 433.82 L949.6 435.8 L950.1 437.73 L950.6 438.14 L951.1 439.07 L951.6 438.84 L952.1 439.49 L952.6 439.82 L953.1 439.54 L953.6 439.42 L954.1 439.96 L954.6 439.86 L955.1 440.01 L955.6 440.25 L956.1 439.97 L956.6 439.88 L957.1 439.81 L957.6 440.34 L958.1 439.98 L958.6 440.06 L959.1 436.21 L959.6 433.45 L960.1 435.4 L960.6 437.37 L961.1 438.12 L961.6 438.79 L962.1 438.62 L962.6 439.16 L963.1 439.21 L963.6 439.64 L964.1 439.48 L964.6 439.46 L965.1 439.6 L965.6 439.98 L966.1 440.2 L966.6 440.19 L967.1 440.01 L967.6 439.69 L968.1 440.37 L968.6 440 L969.1 440.13 L969.6 439.92 L970.1 440.29 L970.6 440.17 L971.1 440.4 L971.6 440.31 L972.1 440.32 L972.6 440.28 L973.1 440.03 L973.6 440.18 L974.1 440.14 L974.6 440.51 L975.1 440.11 L975.6 440.07 L976.1 440 L976.6 440.18 L977.1 440.41 L977.6 440.38 L978.1 440.52 L978.6 440.25 L979.1 440.37 L979.6 435.77 L980.1 428.54 L980.6 432.33 L981.1 435.54 L981.6 436.84 L982.1 437.53 L982.6 438.51 L983.1 439.04 L983.6 438.84 L984.1 438.96 L984.6 439.55 L985.1 439.39 L985.6 439.62 L986.1 439.76 L986.6 439.94 L987.1 439.66 L987.6 439.48 L988.1 440.06 L988.6 439.72 L989.1 440.12 L989.6 440.01 L990.1 437.66 L990.6 434.39 L991.1 436.47 L991.6 437.97 L992.1 438.57 L992.6 438.84 L993.1 439.33 L993.6 439.37 L994.1 439.72 L994.6 439.73 L995.1 439.6 L995.6 439.94 L996.1 440.02 L996.6 440.05 L997.1 440.14 L997.6 440.12 L998.1 440 L998.6 439.75 L999.1 440.02 L999.6 440.02 L1000.1 436.95 L1000.6 433.56 L1001.1 434.29 L1001.6 436.77 L1002.1 437.78 L1002.6 438.57 L1003.1 439.21 L1003.6 438.92 L1004.1 439.36 L1004.6 439.48 L1005.1 439.57 L1005.6 439.79 L1006.1 439.76 L1006.6 439.57 L1007.1 439.79 L1007.6 439.96 L1008.1 440.1 L1008.6 439.95 L1009.1 440.43 L1009.6 440.05 L1010.1 440.01 L1010.6 440.18 L1011.1 440.32 L1011.6 440.3 L1012.1 440.32 L1012.6 440.31 L1013.1 440.48 L1013.6 439.95 L1014.1 440.45 L1014.6 440.24 L1015.1 440.18 L1015.6 440.3 L1016.1 440.26 L1016.6 440.44 L1017.1 440.13 L1017.6 440.4 L1018.1 440.12 L1018.6 440.41 L1019.1 439.99 L1019.6 440.47 L1020.1 440.24 L1020.6 440.49 L1021.1 435.93 L1021.6 429.62 L1022.1 434.21 L1022.6 436.06 L1023.1 437.02 L1023.6 438.21 L1024.1 438.6 L1024.6 438.84 L1025.1 439.31 L1025.6 439.15 L1026.1 439.19 L1026.6 439.32 L1027.1 439.5 L1027.6 439.85 L1028.1 439.7 L1028.6 439.97 L1029.1 440.22 L1029.6 439.83 L1030.1 440 L1030.6 440.04 L1031.1 437.42 L1031.6 433.16 L1032.1 435.79 L1032.6 436.64 L1033.1 437.83 L1033.6 439.06 L1034.1 439.26 L1034.6 439.61 L1035.1 439.39 L1035.6 439.33 L1036.1 439.77 L1036.6 439.72 L1037.1 439.72 L1037.6 439.83 L1038.1 440.24 L1038.6 439.72 L1039.1 440.03 L1039.6 440.23 L1040.1 439.98 L1040.6 440.29 L1041.1 440.23 L1041.6 437.01 L1042.1 432.81 L1042.6 435.61 L1043.1 437.09 L1043.6 438.38 L1044.1 438.71 L1044.6 439.17 L1045.1 439.01 L1045.6 439.56 L1046.1 439.31 L1046.6 439.85 L1047.1 439.82 L1047.6 439.7 L1048.1 439.93 L1048.6 440.2 L1049.1 440.06 L1049.6 440.18 L1050.1 440.04 L1050.6 440.32 L1051.1 439.89 L1051.6 440.26 L1052.1 438.39 L1052.6 435.87 L1053.1 437.57 L1053.6 438.66 L1054.1 438.71 L1054.6 439.19 L1055.1 439.59 L1055.6 439.44 L1056.1 439.62 L1056.6 439.9 L1057.1 439.86 L1057.6 439.95 L1058.1 439.99 L1058.6 439.82 L1059.1 439.91 L1059.6 439.98 L1060.1 440.18 L1060.6 439.9 L1061.1 440.11 L1061.6 440.13 L1062.1 435.52 L1062.6 429.45 L1063.1 432.4 L1063.6 435.53 L1064.1 437.12 L1064.6 437.58 L1065.1 438.54 L1065.6 438.42 L1066.1 438.84 L1066.6 439.25 L1067.1 439.26 L1067.6 439.45 L1068.1 439.39 L1068.6 439.74 L1069.1 439.85 L1069.6 439.7 L1070.1 440.03 L1070.6 440.14 L1071.1 440.16 L1071.6 440.02 L1072.1 440.02 L1072.6 437.33 L1073.1 434.26 L1073.6 436.4 L1074.1 437.15 L1074.6 438.71 L1075.1 438.75 L1075.6 438.79 L1076.1 439.1 L1076.6 439.27 L1077.1 439.55 L1077.6 439.62 L1078.1 439.57 L1078.6 440.09 L1079.1 440.15 L1079.6 439.97 L1080.1 439.96 L1080.6 440.04 L1081.1 439.93 L1081.6 439.98 L1082.1 440.17 L1082.6 439.94 L1083.1 436.74 L1083.6 434.11 L1084.1 436.26 L1084.6 437.63 L1085.1 438.35 L1085.6 438.82 L1086.1 439.09 L1086.6 439.4 L1087.1 439.16 L1087.6 439.74 L1088.1 439.6 L1088.6 439.96 L1089.1 439.94 L1089.6 440.23 L1090.1 439.85 L1090.6 439.74 L1091.1 439.91 L1091.6 440.04 L1092.1 440.05 L1092.6 440.38 L1093.1 439.88 L1093.6 439.91 L1094.1 440.34 L1094.6 440.3 L1095.1 440.09 L1095.6 440.52 L1096.1 440.08 L1096.6 440.5 L1097.1 439.88 L1097.6 440.37 L1098.1 440.47 L1098.6 440.48 L1099.1 440.11 L1099.6 440.54 L1100.1 440.35 L1100.6 440.45 L1101.1 440.02 L1101.6 440.15 L1102.1 440.1 L1102.6 440.27 L1103.1 440.12 L1103.6 435.41 L1104.1 429.57 L1104.6 433.28 L1105.1 436.01 L1105.6 437.11 L1106.1 438.07 L1106.6 438.08 L1107.1 439.11 L1107.6 438.81 L1108.1 439 L1108.6 439.41 L1109.1 439.36 L1109.6 439.44 L1110.1 439.97 L1110.6 439.8 L1111.1 439.79 L1111.6 439.63 L1112.1 439.99 L1112.6 439.78 L1113.1 440.24 L1113.6 440.17 L1114.1 440.21 L1114.6 440.21 L1115.1 439.93 L1115.6 440.31 L1116.1 440.3 L1116.6 439.98 L1117.1 440.23 L1117.6 440.34 L1118.1 440.21 L1118.6 440.5 L1119.1 440.38 L1119.6 440.17 L1120.1 440.32 L1120.6 440.41 L1121.1 440.25 L1121.6 440.13 L1122.1 440.04 L1122.6 440.48 L1123.1 440.51 L1123.6 440.16 L1124.1 436.13 L1124.6 432.47 L1125.1 434.25 L1125.6 435.95 L1126.1 437.74 L1126.6 437.85 L1127.1 439.16 L1127.6 438.72 L1128.1 439.45 L1128.6 439.21 L1129.1 439.69 L1129.6 439.65 L1130.1 439.75 L1130.6 440.06 L1131.1 440.13 L1131.6 439.99 L1132.1 440.26 L1132.6 440.07 L1133.1 439.95 L1133.6 440.21 L1134.1 440.06 L1134.6 437.21 L1135.1 434.52 L1135.6 435.98 L1136.1 437.54 L1136.6 438.68 L1137.1 439.09 L1137.6 439.11 L1138.1 439.3 L1138.1 444.38 L1137.6 443.91 L1137.1 444.39 L1136.6 444.97 L1136.1 445.98 L1135.6 447.12 L1135.1 448.84 L1134.6 446.33 L1134.1 443.19 L1133.6 443.05 L1133.1 443.42 L1132.6 443.19 L1132.1 443.24 L1131.6 443.51 L1131.1 443.12 L1130.6 443.32 L1130.1 443.62 L1129.6 443.75 L1129.1 443.67 L1128.6 443.76 L1128.1 443.83 L1127.6 444.61 L1127.1 444.21 L1126.6 445.09 L1126.1 445.47 L1125.6 447.29 L1125.1 449.74 L1124.6 450.77 L1124.1 446.61 L1123.6 443.02 L1123.1 442.74 L1122.6 442.81 L1122.1 443.27 L1121.6 443.28 L1121.1 442.95 L1120.6 442.83 L1120.1 442.83 L1119.6 443.22 L1119.1 443 L1118.6 442.95 L1118.1 443.09 L1117.6 442.86 L1117.1 443.05 L1116.6 443.29 L1116.1 443.04 L1115.6 442.95 L1115.1 443.27 L1114.6 443.08 L1114.1 443.08 L1113.6 443.15 L1113.1 443.09 L1112.6 443.35 L1112.1 443.29 L1111.6 443.58 L1111.1 443.77 L1110.6 443.57 L1110.1 443.4 L1109.6 443.85 L1109.1 444.08 L1108.6 443.95 L1108.1 444.27 L1107.6 444.31 L1107.1 444.64 L1106.6 445.18 L1106.1 445.56 L1105.6 446.31 L1105.1 448.14 L1104.6 450.17 L1104.1 453.39 L1103.6 447.55 L1103.1 442.98 L1102.6 443 L1102.1 443.36 L1101.6 443.06 L1101.1 443.09 L1100.6 442.8 L1100.1 442.8 L1099.6 442.85 L1099.1 443.38 L1098.6 442.68 L1098.1 442.77 L1097.6 443.02 L1097.1 443.27 L1096.6 442.79 L1096.1 443.08 L1095.6 442.87 L1095.1 443.33 L1094.6 443.02 L1094.1 442.95 L1093.6 443.32 L1093.1 443.33 L1092.6 443.05 L1092.1 443.06 L1091.6 443.37 L1091.1 443.35 L1090.6 443.56 L1090.1 443.48 L1089.6 443.22 L1089.1 443.42 L1088.6 443.38 L1088.1 443.75 L1087.6 443.55 L1087.1 444.22 L1086.6 444.01 L1086.1 444.07 L1085.6 444.66 L1085.1 445.16 L1084.6 445.81 L1084.1 447.71 L1083.6 450.44 L1083.1 446.7 L1082.6 443.19 L1082.1 443.26 L1081.6 443.48 L1081.1 443.37 L1080.6 443.27 L1080.1 443.59 L1079.6 443.33 L1079.1 443.04 L1078.6 443.29 L1078.1 443.64 L1077.6 443.58 L1077.1 443.94 L1076.6 444.01 L1076.1 444.31 L1075.6 444.27 L1075.1 444.51 L1074.6 444.69 L1074.1 445.99 L1073.6 447.07 L1073.1 450.25 L1072.6 446.15 L1072.1 443.25 L1071.6 443.27 L1071.1 443.16 L1070.6 443.03 L1070.1 443.19 L1069.6 443.63 L1069.1 443.3 L1068.6 443.64 L1068.1 443.93 L1067.6 443.65 L1067.1 444.1 L1066.6 444.08 L1066.1 444.42 L1065.6 444.78 L1065.1 445.1 L1064.6 445.6 L1064.1 446.65 L1063.6 448.23 L1063.1 452.73 L1062.6 453.8 L1062.1 448.57 L1061.6 443.19 L1061.1 443.22 L1060.6 443.27 L1060.1 443.26 L1059.6 443.06 L1059.1 443.27 L1058.6 443.26 L1058.1 443.24 L1057.6 443.39 L1057.1 443.41 L1056.6 443.24 L1056.1 443.63 L1055.6 443.93 L1055.1 443.77 L1054.6 444.01 L1054.1 444.42 L1053.6 444.6 L1053.1 445.73 L1052.6 447.54 L1052.1 444.79 L1051.6 442.89 L1051.1 443.32 L1050.6 443.09 L1050.1 443.49 L1049.6 443.29 L1049.1 443.12 L1048.6 443.1 L1048.1 443.4 L1047.6 443.59 L1047.1 443.59 L1046.6 443.55 L1046.1 444.04 L1045.6 443.69 L1045.1 444.28 L1044.6 444.19 L1044.1 444.89 L1043.6 445.36 L1043.1 445.72 L1042.6 448.42 L1042.1 450.45 L1041.6 446.37 L1041.1 443.17 L1040.6 443.09 L1040.1 443.5 L1039.6 443.01 L1039.1 443.33 L1038.6 443.29 L1038.1 443.08 L1037.6 443.7 L1037.1 443.48 L1036.6 443.45 L1036.1 443.65 L1035.6 444.12 L1035.1 443.91 L1034.6 443.7 L1034.1 444.1 L1033.6 444.58 L1033.1 445.35 L1032.6 446.67 L1032.1 447.63 L1031.6 449.36 L1031.1 446.62 L1030.6 443.24 L1030.1 443.43 L1029.6 443.48 L1029.1 443.05 L1028.6 443.17 L1028.1 443.56 L1027.6 443.28 L1027.1 443.71 L1026.6 443.85 L1026.1 444.29 L1025.6 444.17 L1025.1 444.29 L1024.6 444.78 L1024.1 444.85 L1023.6 445.32 L1023.1 445.88 L1022.6 447.19 L1022.1 449.23 L1021.6 453.95 L1021.1 447.98 L1020.6 442.79 L1020.1 442.97 L1019.6 442.77 L1019.1 443.27 L1018.6 442.8 L1018.1 443.01 L1017.6 442.84 L1017.1 442.96 L1016.6 442.68 L1016.1 442.98 L1015.6 442.79 L1015.1 443.05 L1014.6 443.11 L1014.1 442.94 L1013.6 443.23 L1013.1 442.89 L1012.6 442.82 L1012.1 442.91 L1011.6 442.97 L1011.1 443 L1010.6 443.09 L1010.1 443.3 L1009.6 443.25 L1009.1 442.86 L1008.6 443.24 L1008.1 443.27 L1007.6 443.56 L1007.1 443.42 L1006.6 443.66 L1006.1 443.38 L1005.6 443.4 L1005.1 443.85 L1004.6 444.02 L1004.1 444.12 L1003.6 444.11 L1003.1 444.46 L1002.6 444.64 L1002.1 445.66 L1001.6 446.99 L1001.1 448.56 L1000.6 450.63 L1000.1 446.6 L999.6 443.25 L999.1 443.49 L998.6 443.47 L998.1 443.07 L997.6 443.28 L997.1 443.15 L996.6 443.41 L996.1 443.36 L995.6 443.36 L995.1 443.61 L994.6 443.74 L994.1 443.78 L993.6 443.87 L993.1 444.06 L992.6 444.54 L992.1 444.44 L991.6 445.54 L991.1 447.14 L990.6 448.86 L990.1 445.87 L989.6 443.27 L989.1 443.02 L988.6 443.64 L988.1 443.09 L987.6 443.66 L987.1 443.62 L986.6 443.43 L986.1 443.66 L985.6 443.56 L985.1 444.15 L984.6 443.79 L984.1 444.24 L983.6 444.32 L983.1 444.72 L982.6 445.14 L982.1 445.98 L981.6 446.44 L981.1 448.67 L980.6 450.92 L980.1 454.16 L979.6 448.05 L979.1 442.84 L978.6 443.05 L978.1 442.8 L977.6 442.9 L977.1 442.87 L976.6 443 L976.1 443.07 L975.6 443.16 L975.1 443.04 L974.6 442.91 L974.1 443.2 L973.6 443.1 L973.1 443.03 L972.6 443.13 L972.1 443.08 L971.6 442.9 L971.1 442.87 L970.6 443.2 L970.1 442.86 L969.6 443.32 L969.1 443.16 L968.6 443.23 L968.1 442.98 L967.6 443.39 L967.1 443.45 L966.6 443.07 L966.1 443.22 L965.6 443.43 L965.1 443.61 L964.6 443.88 L964.1 443.58 L963.6 443.72 L963.1 444.11 L962.6 444.27 L962.1 444.6 L961.6 444.42 L961.1 445.55 L960.6 446.57 L960.1 448.28 L959.6 451.46 L959.1 446.63 L958.6 443.33 L958.1 443.35 L957.6 442.91 L957.1 443.37 L956.6 443.46 L956.1 443.1 L955.6 443.09 L955.1 443.27 L954.6 443.63 L954.1 443.54 L953.6 443.87 L953.1 443.76 L952.6 443.48 L952.1 444.11 L951.6 444.16 L951.1 444.35 L950.6 444.99 L950.1 446.05 L949.6 448.22 L949.1 449.39 L948.6 446.44 L948.1 442.96 L947.6 443.29 L947.1 443.34 L946.6 443.26 L946.1 443.34 L945.6 443.61 L945.1 443.59 L944.6 443.64 L944.1 443.7 L943.6 443.67 L943.1 443.96 L942.6 444.12 L942.1 444.79 L941.6 444.48 L941.1 445.45 L940.6 446.15 L940.1 446.49 L939.6 449.54 L939.1 452.6 L938.6 454.62 L938.1 448.09 L937.6 443.53 L937.1 443.04 L936.6 443.36 L936.1 443.08 L935.6 443.17 L935.1 443.31 L934.6 443.51 L934.1 443.44 L933.6 443.37 L933.1 443.3 L932.6 443.93 L932.1 443.97 L931.6 443.73 L931.1 444.1 L930.6 444.94 L930.1 445.16 L929.6 446.2 L929.1 447.15 L928.6 450.77 L928.1 446.12 L927.6 443.33 L927.1 443.51 L926.6 443.17 L926.1 443.39 L925.6 442.99 L925.1 443.14 L924.6 443.58 L924.1 443.25 L923.6 443.83 L923.1 443.55 L922.6 443.37 L922.1 443.57 L921.6 443.58 L921.1 444.06 L920.6 444.39 L920.1 444.48 L919.6 445.34 L919.1 446.63 L918.6 447.83 L918.1 451.04 L917.6 446.2 L917.1 442.73 L916.6 443.01 L916.1 443.06 L915.6 442.8 L915.1 442.8 L914.6 442.87 L914.1 442.98 L913.6 443.07 L913.1 443.26 L912.6 443.23 L912.1 442.86 L911.6 443.2 L911.1 443.21 L910.6 443.14 L910.1 443.2 L909.6 442.89 L909.1 442.83 L908.6 443.17 L908.1 443.45 L907.6 443.27 L907.1 443.4 L906.6 443.54 L906.1 443.46 L905.6 443.68 L905.1 443.54 L904.6 443.65 L904.1 443.37 L903.6 443.28 L903.1 443.52 L902.6 443.46 L902.1 443.86 L901.6 443.78 L901.1 444.5 L900.6 444.6 L900.1 444.81 L899.6 445.12 L899.1 446.47 L898.6 446.94 L898.1 449.87 L897.6 453.02 L897.1 448.43 L896.6 443.19 L896.1 443.33 L895.6 443.34 L895.1 443.08 L894.6 443.27 L894.1 442.88 L893.6 443.26 L893.1 443.18 L892.6 443.11 L892.1 443.23 L891.6 443.42 L891.1 443.69 L890.6 443.5 L890.1 444.23 L889.6 443.95 L889.1 444.19 L888.6 444.82 L888.1 446.08 L887.6 447.82 L887.1 449.14 L886.6 445.38 L886.1 443.39 L885.6 442.96 L885.1 442.93 L884.6 443.14 L884.1 442.87 L883.6 442.82 L883.1 443.08 L882.6 442.83 L882.1 442.91 L881.6 442.86 L881.1 443.21 L880.6 442.71 L880.1 442.82 L879.6 443.16 L879.1 443.19 L878.6 443.09 L878.1 443.18 L877.6 443.15 L877.1 443.22 L876.6 443.28 L876.1 443.11 L875.6 443.08 L875.1 443.21 L874.6 443.07 L874.1 443.13 L873.6 443.27 L873.1 443.56 L872.6 443.39 L872.1 443.63 L871.6 443.25 L871.1 443.48 L870.6 443.75 L870.1 444.17 L869.6 444.21 L869.1 443.97 L868.6 444.64 L868.1 445.27 L867.6 445.75 L867.1 447.02 L866.6 449.7 L866.1 446.49 L865.6 443.27 L865.1 443.42 L864.6 443.26 L864.1 443.56 L863.6 443.26 L863.1 443.3 L862.6 443.93 L862.1 443.69 L861.6 443.37 L861.1 443.65 L860.6 444.01 L860.1 444.51 L859.6 444.35 L859.1 444.88 L858.6 444.66 L858.1 445.94 L857.6 446.52 L857.1 447.93 L856.6 450.35 L856.1 453.41 L855.6 447.55 L855.1 442.88 L854.6 442.84 L854.1 443.12 L853.6 442.69 L853.1 442.69 L852.6 442.82 L852.1 442.98 L851.6 442.87 L851.1 443.25 L850.6 443.22 L850.1 443.17 L849.6 443.07 L849.1 442.9 L848.6 442.93 L848.1 442.82 L847.6 443.11 L847.1 443.27 L846.6 443.22 L846.1 443.32 L845.6 442.92 L845.1 443.02 L844.6 442.86 L844.1 443.15 L843.6 443.44 L843.1 443.46 L842.6 443.54 L842.1 443.45 L841.6 443.75 L841.1 443.67 L840.6 443.31 L840.1 443.61 L839.6 444.19 L839.1 444.22 L838.6 444.28 L838.1 444.47 L837.6 444.93 L837.1 445.17 L836.6 446.82 L836.1 448.93 L835.6 451.72 L835.1 446.72 L834.6 443.14 L834.1 442.92 L833.6 442.86 L833.1 442.86 L832.6 442.66 L832.1 442.73 L831.6 442.92Z" fill="#3a3d3d"/></g><line x1="831.6" y1="427.6" x2="1138.2" y2="427.6" stroke="#9aa3a2" stroke-width="0.5"/><rect x="832.8" y="390.6" width="7.4" height="7.6" fill="#35a3ab"/><text x="836.5" y="396.7" font-size="6.4" fill="#fff" font-family='"Liberation Sans", sans-serif' font-weight="bold" text-anchor="middle">1</text><text x="843" y="396.3" font-size="7.2" fill="#222" font-family='"Liberation Sans", sans-serif' textLength="66.7" lengthAdjust="spacingAndGlyphs">&lt;&lt; RockDrums48khz.mp3</text><rect x="1138.2" y="389.9" width="9.9" height="91.3" fill="#333"/><circle cx="1142.9" cy="394.5" r="2.7" fill="#1c1c1c" stroke="#555" stroke-width="0.5"/><path d="M1141.5 395.4 L1144.3 395.4 L1142.9 393.2Z" fill="#888"/><path d="M1141.5 453.8 L1144.3 453.8 L1142.9 456Z" fill="#888"/><rect x="1140.7" y="400" width="4.5" height="38.5" fill="#555" rx="2"/><line x1="1141.7" y1="419.5" x2="1144.3" y2="419.5" stroke="#222" stroke-width="0.8"/><circle cx="1142.9" cy="454.5" r="2.7" fill="#1c1c1c" stroke="#555" stroke-width="0.5"/><text x="1142.9" y="467.5" font-size="8" fill="#777" font-family='"Liberation Sans", sans-serif' font-weight="bold" text-anchor="middle">+</text><text x="1142.9" y="479" font-size="8" fill="#777" font-family='"Liberation Sans", sans-serif' font-weight="bold" text-anchor="middle">–</text><rect x="831.6" y="481.2" width="316.5" height="52.8" fill="#303030"/><rect x="685.2" y="534" width="462.9" height="153.8" fill="#333"/><circle cx="1111" cy="486.2" r="2.6" fill="#1e1e1e" stroke="#555" stroke-width="0.5"/><path d="M1110.2 484.8 L1110.2 487.6 L1112.4 486.2Z" fill="#666"/><text x="1121.3" y="489.3" font-size="9" fill="#6a6a6a" font-family='"Liberation Sans", sans-serif' font-weight="bold" text-anchor="middle">+</text><text x="1133" y="488.6" font-size="9" fill="#6a6a6a" font-family='"Liberation Sans", sans-serif' font-weight="bold" text-anchor="middle">–</text><text x="1104.8" y="506.2" font-size="8.4" fill="#9a9a9a" font-family='"Liberation Sans", sans-serif' textLength="23.3" lengthAdjust="spacingAndGlyphs">0.0.00</text><rect x="686.1" y="390" width="122.2" height="67.9" fill="#939f9d"/><rect x="808.3" y="390" width="10.5" height="67.9" fill="#7f8b8a"/><text x="813.6" y="426.4" font-size="6.4" fill="#e4e4e4" font-family='"Liberation Sans", sans-serif' text-anchor="middle">1</text><rect x="818.8" y="390" width="6.2" height="67.9" fill="#262626"/><rect x="690.3" y="394.6" width="86.8" height="10.8" fill="#3c3a38" rx="5.4"/><circle cx="695.9" cy="400" r="4.6" fill="#8a4636" stroke="#5e2e22" stroke-width="0.6"/><circle cx="695.9" cy="400" r="2" fill="none" stroke="#d9b0a4" stroke-width="1"/><text x="702.6" y="402.8" font-size="8.2" fill="#d0d0d0" font-family='"Liberation Sans", sans-serif' textLength="55.2" lengthAdjust="spacingAndGlyphs">RockDrums48khz</text><circle cx="771.3" cy="400.6" r="5.7" fill="#555" opacity="0.5"/><circle cx="771.3" cy="400" r="5.2" fill="url(#gKnob)" stroke="#7c7c7c" stroke-width="0.6"/><line x1="770.89" y1="398.87" x2="769.86" y2="396.05" stroke="#333" stroke-width="0.9"/><rect x="779.2" y="394.6" width="13.2" height="11.1" fill="#1e1e1e" stroke="#444" stroke-width="0.5" rx="1"/><circle cx="782.4" cy="397.6" r="1.2" fill="#2fd05c"/><circle cx="785.8" cy="397.6" r="1.2" fill="#0c0c0c" stroke="#444" stroke-width="0.3"/><circle cx="789.2" cy="397.6" r="1.2" fill="#0c0c0c" stroke="#444" stroke-width="0.3"/><text x="785.8" y="404" font-size="3.6" fill="#bbb" font-family='"Liberation Sans", sans-serif' font-weight="bold" text-anchor="middle">ROUTE</text><circle cx="696" cy="414.3" r="5.8" fill="#555" opacity="0.5"/><circle cx="696" cy="413.7" r="5.3" fill="url(#gKnob)" stroke="#7c7c7c" stroke-width="0.6"/><line x1="695.9" y1="412.5" x2="695.63" y2="409.42" stroke="#333" stroke-width="0.9"/><rect x="703.9" y="408.7" width="10.5" height="9.9" fill="#f0f0ee" stroke="#8a8a8a" stroke-width="0.5" rx="1"/><text x="709.2" y="416.2" font-size="6.4" fill="#7a3a30" font-family='"Liberation Sans", sans-serif' font-weight="bold" text-anchor="middle">M</text><rect x="714.6" y="408.7" width="10.3" height="9.9" fill="#f0f0ee" stroke="#8a8a8a" stroke-width="0.5" rx="1"/><text x="719.8" y="416.2" font-size="6.4" fill="#7a7a3a" font-family='"Liberation Sans", sans-serif' font-weight="bold" text-anchor="middle">S</text><rect x="727.8" y="408.7" width="10.8" height="9.9" fill="#24c458" rx="1"/><text x="733.2" y="416.4" font-size="6.6" fill="#fff" font-family='"Liberation Sans", sans-serif' font-weight="bold" text-anchor="middle">FX</text><rect x="738.6" y="408.7" width="5" height="9.9" fill="#7fc79a" rx="1"/><circle cx="741.1" cy="413.8" r="1.5" fill="none" stroke="#3f9a5f" stroke-width="0.7"/><circle cx="750.5" cy="413.8" r="4" fill="#8a9695" stroke="#727e7d" stroke-width="0.8"/><circle cx="750.5" cy="413.8" r="1.6" fill="none" stroke="#727e7d" stroke-width="0.6"/><rect x="757.6" y="409" width="10.6" height="9.4" fill="#7e8a89" stroke="#6e7a79" stroke-width="0.6" rx="1"/><path d="M759.4 416 l2.6 -4 l2 2.4 l2.6 -2.8" fill="none" stroke="#2c2c2c" stroke-width="0.8"/><rect x="768.2" y="409" width="12.4" height="9.4" fill="#848f8e"/><text x="774.4" y="416" font-size="5.8" fill="#bcc6c5" font-family='"Liberation Sans", sans-serif' text-anchor="middle">trim</text><rect x="690.6" y="421.8" width="19.4" height="9.6" fill="#98a4a3" stroke="#a6b1b0" stroke-width="0.5" rx="1"/><text x="695.4" y="429.2" font-size="5.8" fill="#dde3e2" font-family='"Liberation Sans", sans-serif' font-weight="bold" text-anchor="middle">IN</text><circle cx="705.4" cy="426.6" r="3.6" fill="none" stroke="#dde3e2" stroke-width="0.8"/><path d="M703.6 425.6 L707.2 425.6 L705.4 428.4Z" fill="#c0c8c7"/><rect x="713.4" y="421.8" width="10.2" height="9.6" fill="none" stroke="#84908e" stroke-width="0.6"/><path d="M716.4 423.8 l4.2 2.8 l-4.2 2.8" fill="none" stroke="#7d8988" stroke-width="0.8"/><rect x="727.4" y="421.8" width="72.2" height="9.6" fill="#98a4a3" stroke="#a6b1b0" stroke-width="0.5" rx="4.6"/><rect x="729.6" y="423" width="6.4" height="7.6" fill="none" stroke="#e0e4e4" stroke-width="0.9" rx="1"/><line x1="731.4" y1="427.5" x2="734.2" y2="427.5" stroke="#e0e4e4" stroke-width="0.8"/><text x="739.4" y="429.2" font-size="6.2" fill="#e6ebea" font-family='"Liberation Sans", sans-serif'>Left</text><circle cx="794.3" cy="426.6" r="3.6" fill="none" stroke="#c0c8c7" stroke-width="0.7"/><path d="M792.5 425.6 L796.1 425.6 L794.3 428.4Z" fill="#c0c8c7"/><line x1="688.3" y1="481.7" x2="800" y2="481.7" stroke="#545454" stroke-width="0.7"/><text x="688.3" y="488.6" font-size="7" fill="#8e9c9c" font-family='"Liberation Sans", sans-serif' textLength="86.3" lengthAdjust="spacingAndGlyphs">RockDrums48khz [items] 1 [FX] 1</text><rect x="687.8" y="494.6" width="31.8" height="15.8" fill="#3b3b3b" stroke="#1c1c1c" stroke-width="0.6" rx="7.9"/><line x1="703.7" y1="495" x2="703.7" y2="510" stroke="#2a2a2a" stroke-width="0.7"/><path d="M694 499.8 v5.4 M699.6 499.8 v5.4 l-4.6 -2.7z" fill="#9a9a9a" stroke="#9a9a9a" stroke-width="1.1"/><path d="M713.4 499.8 v5.4 M707.8 499.8 v5.4 l4.6 -2.7z" fill="#9a9a9a" stroke="#9a9a9a" stroke-width="1.1"/><g clip-path="url(#cpTrans)"><rect x="723" y="494.6" width="55.8" height="15.8" fill="#3b3b3b"/><rect x="741.1" y="494.6" width="37.7" height="15.8" fill="url(#gPlayBtn)"/></g><rect x="723" y="494.6" width="55.8" height="15.8" fill="none" stroke="#1c1c1c" stroke-width="0.6" rx="7.9"/><line x1="761.3" y1="494.8" x2="761.3" y2="510.2" stroke="#5c6664" stroke-width="0.8"/><rect x="729.6" y="500" width="5.4" height="5.2" fill="#8e8e8e"/><path d="M748.4 499.6 L748.4 505.6 L754.2 502.6Z" fill="#111"/><rect x="767.2" y="499.8" width="1.5" height="5.6" fill="#111"/><rect x="770.4" y="499.8" width="1.5" height="5.6" fill="#111"/><circle cx="790.7" cy="502.6" r="8" fill="#7d4a3c" stroke="#4e2e25" stroke-width="0.6"/><circle cx="790.7" cy="502.6" r="3.2" fill="none" stroke="#e2c2b8" stroke-width="1.4"/><rect x="685.2" y="513.5" width="146.4" height="20.5" fill="#2a2a2a"/><text x="690.7" y="529" font-size="15.4" fill="#a4a4a4" font-family='"Liberation Sans", sans-serif' font-weight="bold" textLength="108.5" lengthAdjust="spacingAndGlyphs">1.3.00 / 0:01.000</text><rect x="685.2" y="534" width="122.8" height="37.6" fill="#2e2e2e"/><line x1="698" y1="537.2" x2="743" y2="537.2" stroke="#4a4a4a" stroke-width="0.6"/><line x1="770" y1="537.2" x2="791" y2="537.2" stroke="#4a4a4a" stroke-width="0.6"/><line x1="756.4" y1="540.6" x2="756.4" y2="571.6" stroke="#444" stroke-width="0.6"/><rect x="688.3" y="541.7" width="12.7" height="17" fill="#97a3a2" stroke="#1a1a1a" stroke-width="0.6" rx="1"/><rect x="688.6" y="541.9" width="12.1" height="6.7" fill="#b2bcbb"/><circle cx="697.4" cy="545.3" r="1.5" fill="none" stroke="#444" stroke-width="0.6"/><text x="689.8" y="556.4" font-size="5" fill="#333" font-family='"Liberation Sans", sans-serif' font-weight="bold">FX</text><rect x="705.3" y="541.7" width="23.3" height="17" fill="#1c1c1c" stroke="#3c3c3c" stroke-width="0.6" rx="1"/><text x="710.2" y="547.4" font-size="5" fill="#1fae4e" font-family='"Liberation Sans", sans-serif' font-weight="bold" text-anchor="middle">M</text><text x="717.4" y="547.4" font-size="5" fill="#4a4a4a" font-family='"Liberation Sans", sans-serif' font-weight="bold" text-anchor="middle">R</text><text x="724.2" y="547.4" font-size="5" fill="#2a86b0" font-family='"Liberation Sans", sans-serif' font-weight="bold" text-anchor="middle">S</text><line x1="706.4" y1="549.6" x2="727.6" y2="549.6" stroke="#333" stroke-width="0.5"/><text x="717" y="556.2" font-size="3.9" fill="#a5a5a5" font-family='"Liberation Sans", sans-serif' font-weight="bold" text-anchor="middle">ROUTING</text><rect x="732.5" y="541.7" width="20.5" height="17" fill="#262626" stroke="#3a3a3a" stroke-width="0.5" rx="1"/><rect x="733.6" y="542.8" width="18.4" height="7" fill="#98a4a3"/><path d="M739.2 544.4 v4 M741 546.4 h3.2 M746 544.4 v4 M744.6 546.4 l1.4 -1.4 v2.8z" fill="none" stroke="#56605f" stroke-width="0.7"/><text x="742.6" y="556.2" font-size="3.9" fill="#a5a5a5" font-family='"Liberation Sans", sans-serif' font-weight="bold" text-anchor="middle">MONO</text><text x="708.7" y="567.7" font-size="7.2" fill="#b0b0b0" font-family='"Liberation Sans", sans-serif' textLength="24.5" lengthAdjust="spacingAndGlyphs">MASTER</text><rect x="760.4" y="541.7" width="13" height="17" fill="#23c857" stroke="#1a1a1a" stroke-width="0.6" rx="1"/><rect x="760.7" y="541.9" width="12.4" height="6.7" fill="#a9b9af"/><circle cx="769.8" cy="545.3" r="1.5" fill="none" stroke="#1a8a3c" stroke-width="0.7"/><text x="761.9" y="556.4" font-size="5" fill="#fff" font-family='"Liberation Sans", sans-serif' font-weight="bold">FX</text><rect x="777.6" y="541.7" width="23.3" height="17" fill="#1c1c1c" stroke="#3c3c3c" stroke-width="0.6" rx="1"/><text x="782.5" y="547.4" font-size="5" fill="#1fae4e" font-family='"Liberation Sans", sans-serif' font-weight="bold" text-anchor="middle">M</text><text x="789.7" y="547.4" font-size="5" fill="#4a4a4a" font-family='"Liberation Sans", sans-serif' font-weight="bold" text-anchor="middle">R</text><text x="796.5" y="547.4" font-size="5" fill="#2a86b0" font-family='"Liberation Sans", sans-serif' font-weight="bold" text-anchor="middle">S</text><text x="789.3" y="556.2" font-size="3.9" fill="#a5a5a5" font-family='"Liberation Sans", sans-serif' font-weight="bold" text-anchor="middle">ROUTING</text><text x="759.6" y="567.7" font-size="7.2" fill="#b0b0b0" font-family='"Liberation Sans", sans-serif' textLength="52" lengthAdjust="spacingAndGlyphs">RockDrums48khz</text><rect x="685.2" y="571.6" width="71.2" height="105.2" fill="#d2d7d6"/><rect x="756.4" y="571.6" width="48.3" height="105.2" fill="#a4aeac"/><line x1="756.4" y1="571.6" x2="756.4" y2="687.8" stroke="#6c7877" stroke-width="0.8"/><rect x="685.2" y="676.8" width="71.2" height="11.1" fill="#818d8c"/><rect x="756.4" y="676.8" width="48.3" height="11.1" fill="#818d8c"/><line x1="685.2" y1="676.8" x2="804.7" y2="676.8" stroke="#6f7b7a" stroke-width="0.6"/><text x="780.4" y="685.2" font-size="6.6" fill="#dde2e2" font-family='"Liberation Sans", sans-serif' text-anchor="middle">1</text><circle cx="720.6" cy="583.2" r="5.9" fill="#555" opacity="0.5"/><circle cx="720.6" cy="582.6" r="5.4" fill="url(#gKnob)" stroke="#7c7c7c" stroke-width="0.6"/><line x1="720.6" y1="581.4" x2="720.6" y2="578.2" stroke="#333" stroke-width="0.9"/><circle cx="780.5" cy="583.2" r="5.9" fill="#555" opacity="0.5"/><circle cx="780.5" cy="582.6" r="5.4" fill="url(#gKnob)" stroke="#7c7c7c" stroke-width="0.6"/><line x1="780.5" y1="581.4" x2="780.5" y2="578.2" stroke="#333" stroke-width="0.9"/><path d="M688.3 593 H740 V655 Q740 661 744.4 661 A6.4 6.4 0 0 1 744.4 672.9 H688.3Z" fill="#222" stroke="#111" stroke-width="0.5"/><circle cx="744.4" cy="666.3" r="6.4" fill="#222"/><circle cx="744.4" cy="666.3" r="5.4" fill="url(#gKnob)" stroke="#666" stroke-width="0.5"/><circle cx="744.4" cy="666.3" r="3.2" fill="none" stroke="#666" stroke-width="1.6" stroke-dasharray="1.3 1.2"/><circle cx="744.4" cy="666.3" r="1.5" fill="#999"/><line x1="731.7" y1="599" x2="731.7" y2="667" stroke="#0c0c0c" stroke-width="1.2"/><text x="699.5" y="599.4" font-size="5" fill="#8a8a8a" font-family='"Liberation Sans", sans-serif' text-anchor="middle">-inf</text><text x="717" y="599.4" font-size="5" fill="#8a8a8a" font-family='"Liberation Sans", sans-serif' text-anchor="middle">-inf</text><text x="690.8" y="606" font-size="5" fill="#8a8a8a" font-family='"Liberation Sans", sans-serif'>12</text><text x="724.6" y="606" font-size="5" fill="#8a8a8a" font-family='"Liberation Sans", sans-serif' text-anchor="end">12</text><text x="690.8" y="612.7" font-size="5" fill="#8a8a8a" font-family='"Liberation Sans", sans-serif'>6</text><text x="724.6" y="612.7" font-size="5" fill="#8a8a8a" font-family='"Liberation Sans", sans-serif' text-anchor="end">6</text><text x="690.8" y="626.1" font-size="5" fill="#8a8a8a" font-family='"Liberation Sans", sans-serif'>6-</text><text x="724.6" y="626.1" font-size="5" fill="#8a8a8a" font-family='"Liberation Sans", sans-serif' text-anchor="end">-6</text><text x="690.8" y="632.8" font-size="5" fill="#8a8a8a" font-family='"Liberation Sans", sans-serif'>12-</text><text x="724.6" y="632.8" font-size="5" fill="#8a8a8a" font-family='"Liberation Sans", sans-serif' text-anchor="end">-12</text><text x="690.8" y="639.5" font-size="5" fill="#8a8a8a" font-family='"Liberation Sans", sans-serif'>18-</text><text x="724.6" y="639.5" font-size="5" fill="#8a8a8a" font-family='"Liberation Sans", sans-serif' text-anchor="end">-18</text><text x="690.8" y="646.2" font-size="5" fill="#8a8a8a" font-family='"Liberation Sans", sans-serif'>24-</text><text x="724.6" y="646.2" font-size="5" fill="#8a8a8a" font-family='"Liberation Sans", sans-serif' text-anchor="end">-24</text><text x="690.8" y="652.9" font-size="5" fill="#8a8a8a" font-family='"Liberation Sans", sans-serif'>30-</text><text x="724.6" y="652.9" font-size="5" fill="#8a8a8a" font-family='"Liberation Sans", sans-serif' text-anchor="end">-30</text><text x="690.8" y="659.6" font-size="5" fill="#8a8a8a" font-family='"Liberation Sans", sans-serif'>36-</text><text x="724.6" y="659.6" font-size="5" fill="#8a8a8a" font-family='"Liberation Sans", sans-serif' text-anchor="end">-36</text><text x="690.8" y="666.3" font-size="5" fill="#8a8a8a" font-family='"Liberation Sans", sans-serif'>42-</text><text x="724.6" y="666.3" font-size="5" fill="#8a8a8a" font-family='"Liberation Sans", sans-serif' text-anchor="end">-42</text><text x="708" y="609.8" font-size="5" fill="#8a8a8a" font-family='"Liberation Sans", sans-serif' text-anchor="middle">-6-</text><text x="708" y="623.2" font-size="5" fill="#8a8a8a" font-family='"Liberation Sans", sans-serif' text-anchor="middle">-18-</text><text x="708" y="636.6" font-size="5" fill="#8a8a8a" font-family='"Liberation Sans", sans-serif' text-anchor="middle">-30-</text><text x="708" y="650" font-size="5" fill="#8a8a8a" font-family='"Liberation Sans", sans-serif' text-anchor="middle">-42-</text><text x="708" y="663.4" font-size="5" fill="#8a8a8a" font-family='"Liberation Sans", sans-serif' text-anchor="middle">-54-</text><text x="699.5" y="670.4" font-size="5" fill="#8a8a8a" font-family='"Liberation Sans", sans-serif' text-anchor="middle">-inf</text><text x="717" y="670.4" font-size="5" fill="#8a8a8a" font-family='"Liberation Sans", sans-serif' text-anchor="middle">-inf</text><rect x="690.4" y="613.4" width="4.6" height="5.2" fill="#19a04a"/><rect x="720" y="613.4" width="4.6" height="5.2" fill="#19a04a"/><rect x="726.6" y="603.6" width="10.5" height="23" fill="url(#gFader)" stroke="#1a1a1a" stroke-width="0.5" rx="1"/><line x1="726.8" y1="615" x2="737" y2="615" stroke="#222" stroke-width="1"/><rect x="742.7" y="593.6" width="11" height="10.6" fill="#f3f3f1" stroke="#9a9a9a" stroke-width="0.5" rx="1"/><text x="748.2" y="601.6" font-size="6.6" fill="#7a3a30" font-family='"Liberation Sans", sans-serif' font-weight="bold" text-anchor="middle">M</text><rect x="742.7" y="608.9" width="11" height="10.6" fill="#f3f3f1" stroke="#9a9a9a" stroke-width="0.5" rx="1"/><text x="748.2" y="616.9" font-size="6.6" fill="#6e7a2e" font-family='"Liberation Sans", sans-serif' font-weight="bold" text-anchor="middle">S</text><rect x="791.1" y="593.6" width="11" height="10.6" fill="#f3f3f1" stroke="#9a9a9a" stroke-width="0.5" rx="1"/><text x="796.6" y="601.6" font-size="6.6" fill="#7a3a30" font-family='"Liberation Sans", sans-serif' font-weight="bold" text-anchor="middle">M</text><rect x="791.1" y="608.9" width="11" height="10.6" fill="#f3f3f1" stroke="#9a9a9a" stroke-width="0.5" rx="1"/><text x="796.6" y="616.9" font-size="6.6" fill="#6e7a2e" font-family='"Liberation Sans", sans-serif' font-weight="bold" text-anchor="middle">S</text><path d="M757.4 593 H788.2 V655 Q788.2 661 792.4 661 A6.4 6.4 0 0 1 792.4 672.9 H757.4Z" fill="#222" stroke="#111" stroke-width="0.5"/><circle cx="792.4" cy="666.3" r="6.2" fill="#7a3e30" stroke="#3e1f18" stroke-width="0.6"/><circle cx="792.4" cy="666.3" r="2.6" fill="none" stroke="#e2c2b8" stroke-width="1.2"/><line x1="779.8" y1="599" x2="779.8" y2="667" stroke="#0c0c0c" stroke-width="1.2"/><text x="765" y="599.4" font-size="5" fill="#8a8a8a" font-family='"Liberation Sans", sans-serif' text-anchor="middle">-inf</text><text x="765.4" y="609.8" font-size="5" fill="#8a8a8a" font-family='"Liberation Sans", sans-serif' text-anchor="middle">-6-</text><text x="765.4" y="623.2" font-size="5" fill="#8a8a8a" font-family='"Liberation Sans", sans-serif' text-anchor="middle">-18-</text><text x="765.4" y="636.6" font-size="5" fill="#8a8a8a" font-family='"Liberation Sans", sans-serif' text-anchor="middle">-30-</text><text x="765.4" y="650" font-size="5" fill="#8a8a8a" font-family='"Liberation Sans", sans-serif' text-anchor="middle">-42-</text><text x="765.4" y="663.4" font-size="5" fill="#8a8a8a" font-family='"Liberation Sans", sans-serif' text-anchor="middle">-54-</text><rect x="774.6" y="614.7" width="10.7" height="23.8" fill="url(#gFader)" stroke="#1a1a1a" stroke-width="0.5" rx="1"/><line x1="774.8" y1="626.5" x2="785.2" y2="626.5" stroke="#222" stroke-width="1"/><rect x="792.6" y="637.6" width="8" height="5.4" fill="#8a9594"/><text x="796.6" y="642.4" font-size="4.6" fill="#d0d6d5" font-family='"Liberation Sans", sans-serif' font-weight="bold" text-anchor="middle">IN</text><circle cx="796.6" cy="647.4" r="3.2" fill="none" stroke="#c6cecd" stroke-width="0.7"/><path d="M795 646.4 L798.2 646.4 L796.6 649Z" fill="#c6cecd"/><line x1="796.4" y1="651" x2="795" y2="656" stroke="#8a9594" stroke-width="1"/><rect x="685.2" y="687.9" width="462.9" height="7.8" fill="#4a4a4a"/><rect x="685.6" y="688.4" width="3.4" height="7.3" fill="#333"/><text x="687.3" y="694.4" font-size="6" fill="#999" font-family='"Liberation Sans", sans-serif' font-weight="bold" text-anchor="middle">!</text><rect x="690" y="688" width="33" height="7.7" fill="#d3d7d7"/><rect x="693.4" y="689.4" width="4.8" height="5" fill="none" stroke="#444" stroke-width="0.6"/><rect x="694.9" y="690.9" width="1.8" height="2" fill="#444"/><text x="700.9" y="694" font-size="6.2" fill="#222" font-family='"Liberation Sans", sans-serif' font-weight="bold" textLength="15.8" lengthAdjust="spacingAndGlyphs">Mixer</text></g><g id="vst"><rect x="797.8" y="441.5" width="278.1" height="170.8" fill="#dbe6f4" stroke="#7f8c9c" stroke-width="0.7"/><rect x="798.3" y="442" width="277.1" height="15" fill="url(#gTitleV)"/><rect x="801.9" y="456.9" width="269.3" height="151.1" fill="#f0f0f0"/><text x="802.3" y="453.4" font-size="8.2" fill="#4d5a68" font-family='"Liberation Sans", sans-serif' textLength="170.6" lengthAdjust="spacingAndGlyphs">VST: OurVeryOwnParamEQ - Track 1 &quot;RockDrums48khz&quot;</text><path d="M1053 453.6 h6.8 M1054.6 453.4 v-2.6 h3.6 v2.6 M1054 450.6 h4.8" fill="none" stroke="#6a7686" stroke-width="0.8"/><rect x="1062.9" y="447.8" width="7.3" height="6.8" fill="#eef2f8" stroke="#8694a6" stroke-width="0.7" rx="0.8"/><path d="M1065 449.6 l3.2 3.2 M1068.2 449.6 l-3.2 3.2" fill="none" stroke="#8694a6" stroke-width="1"/><rect x="805.3" y="458.3" width="136.2" height="11.4" fill="url(#gBtnV)" stroke="#7c7c7c" stroke-width="0.7" rx="1"/><text x="807.5" y="466.6" font-size="7.4" fill="#111" font-family='"Liberation Sans", sans-serif' textLength="26" lengthAdjust="spacingAndGlyphs">No preset</text><path d="M934.4 463.4 L938.6 463.4 L936.5 465.8Z" fill="#111"/><rect x="944.6" y="458.6" width="9.1" height="10.6" fill="url(#gBtnV)" stroke="#7c7c7c" stroke-width="0.7" rx="1.6"/><text x="949.15" y="466.5" font-size="7.2" fill="#111" font-family='"Liberation Sans", sans-serif' text-anchor="middle">+</text><rect x="956.6" y="458.6" width="24.8" height="10.6" fill="url(#gBtnV)" stroke="#7c7c7c" stroke-width="0.7" rx="1.6"/><text x="969" y="466.5" font-size="7.2" fill="#111" font-family='"Liberation Sans", sans-serif' text-anchor="middle">Param</text><rect x="984.6" y="458.6" width="41.9" height="10.6" fill="url(#gBtnV)" stroke="#7c7c7c" stroke-width="0.7" rx="1.6"/><text x="1005.55" y="466.5" font-size="7.2" fill="#111" font-family='"Liberation Sans", sans-serif' text-anchor="middle">2 in 2 out</text><rect x="1029.7" y="458.6" width="13.6" height="10.6" fill="url(#gBtnV)" stroke="#7c7c7c" stroke-width="0.7" rx="1.6"/><text x="1036.5" y="466.5" font-size="7.2" fill="#111" font-family='"Liberation Sans", sans-serif' text-anchor="middle">UI</text><circle cx="1051.9" cy="463.8" r="4.6" fill="#f4f6f9" stroke="#8a8a8a" stroke-width="0.8"/><line x1="1052.6" y1="464.8" x2="1054.6" y2="467.2" stroke="#333" stroke-width="0.8"/><rect x="1061.4" y="459" width="7.6" height="9" fill="#fdfdfd" stroke="#6a7a94" stroke-width="0.7"/><path d="M1063 463.4 l1.8 2.4 l2.8 -4.8" fill="none" stroke="#2a3f8a" stroke-width="1.1"/><rect x="801.9" y="472" width="259.4" height="135.2" fill="#b9bfbe"/><text x="802.3" y="478.5" font-size="7.8" fill="#222" font-family='"Liberation Sans", sans-serif' textLength="69.4" lengthAdjust="spacingAndGlyphs">OurVeryOwnParamEQ</text><rect x="905.7" y="483" width="103.6" height="11.3" fill="#e5e6e6"/><line x1="905.7" y1="494.5" x2="1009.3" y2="494.5" stroke="#a3abaa" stroke-width="1"/><line x1="957.7" y1="484.6" x2="957.7" y2="492.8" stroke="#222" stroke-width="0.8"/><rect x="989.6" y="484.8" width="11" height="10.6" fill="#8f9897" rx="2" opacity="0.55"/><rect x="989" y="483.8" width="11" height="9.8" fill="url(#gThumb)" stroke="#7a7a7a" stroke-width="0.7" rx="1.6"/><line x1="994.5" y1="484.2" x2="994.5" y2="493.2" stroke="#555" stroke-width="0.8"/><text x="902.9" y="490.7" font-size="7.6" fill="#222" font-family='"Liberation Sans", sans-serif' text-anchor="end" textLength="46.6" lengthAdjust="spacingAndGlyphs">Low Peak Gain</text><text x="1011.5" y="490.7" font-size="7.4" fill="#333" font-family='"Liberation Sans", sans-serif' textLength="31.6" lengthAdjust="spacingAndGlyphs">16.240 dB</text><rect x="905.7" y="496.93" width="103.6" height="11.3" fill="#e5e6e6"/><line x1="905.7" y1="508.43" x2="1009.3" y2="508.43" stroke="#a3abaa" stroke-width="1"/><line x1="957.7" y1="498.53" x2="957.7" y2="506.73" stroke="#222" stroke-width="0.8"/><rect x="928.1" y="498.73" width="11" height="10.6" fill="#8f9897" rx="2" opacity="0.55"/><rect x="927.5" y="497.73" width="11" height="9.8" fill="url(#gThumb)" stroke="#7a7a7a" stroke-width="0.7" rx="1.6"/><line x1="933" y1="498.13" x2="933" y2="507.13" stroke="#555" stroke-width="0.8"/><text x="902.9" y="504.63" font-size="7.6" fill="#222" font-family='"Liberation Sans", sans-serif' text-anchor="end" textLength="68.5" lengthAdjust="spacingAndGlyphs">Low Center Frequency</text><text x="1011.5" y="504.63" font-size="7.4" fill="#333" font-family='"Liberation Sans", sans-serif' textLength="35.2" lengthAdjust="spacingAndGlyphs">100.000 Hz</text><rect x="905.7" y="510.86" width="103.6" height="11.3" fill="#e5e6e6"/><line x1="905.7" y1="522.36" x2="1009.3" y2="522.36" stroke="#a3abaa" stroke-width="1"/><line x1="957.7" y1="512.46" x2="957.7" y2="520.66" stroke="#222" stroke-width="0.8"/><rect x="907.7" y="512.66" width="11" height="10.6" fill="#8f9897" rx="2" opacity="0.55"/><rect x="907.1" y="511.66" width="11" height="9.8" fill="url(#gThumb)" stroke="#7a7a7a" stroke-width="0.7" rx="1.6"/><line x1="912.6" y1="512.06" x2="912.6" y2="521.06" stroke="#555" stroke-width="0.8"/><text x="902.9" y="518.56" font-size="7.6" fill="#222" font-family='"Liberation Sans", sans-serif' text-anchor="end" textLength="40.8" lengthAdjust="spacingAndGlyphs">Low Q Factor</text><text x="1011.5" y="518.56" font-size="7.4" fill="#333" font-family='"Liberation Sans", sans-serif' textLength="18" lengthAdjust="spacingAndGlyphs">0.200</text><rect x="905.7" y="524.79" width="103.6" height="11.3" fill="#e5e6e6"/><line x1="905.7" y1="536.29" x2="1009.3" y2="536.29" stroke="#a3abaa" stroke-width="1"/><line x1="957.7" y1="526.39" x2="957.7" y2="534.59" stroke="#222" stroke-width="0.8"/><rect x="952.6" y="526.59" width="11" height="10.6" fill="#8f9897" rx="2" opacity="0.55"/><rect x="952" y="525.59" width="11" height="9.8" fill="url(#gThumb)" stroke="#7a7a7a" stroke-width="0.7" rx="1.6"/><line x1="957.5" y1="525.99" x2="957.5" y2="534.99" stroke="#555" stroke-width="0.8"/><text x="902.9" y="532.49" font-size="7.6" fill="#222" font-family='"Liberation Sans", sans-serif' text-anchor="end" textLength="59.6" lengthAdjust="spacingAndGlyphs">Medium Peak Gain</text><text x="1011.5" y="532.49" font-size="7.4" fill="#333" font-family='"Liberation Sans", sans-serif' textLength="27.6" lengthAdjust="spacingAndGlyphs">0.000 dB</text><rect x="905.7" y="538.72" width="103.6" height="11.3" fill="#e5e6e6"/><line x1="905.7" y1="550.22" x2="1009.3" y2="550.22" stroke="#a3abaa" stroke-width="1"/><line x1="957.7" y1="540.32" x2="957.7" y2="548.52" stroke="#222" stroke-width="0.8"/><rect x="958.3" y="540.52" width="11" height="10.6" fill="#8f9897" rx="2" opacity="0.55"/><rect x="957.7" y="539.52" width="11" height="9.8" fill="url(#gThumb)" stroke="#7a7a7a" stroke-width="0.7" rx="1.6"/><line x1="963.2" y1="539.92" x2="963.2" y2="548.92" stroke="#555" stroke-width="0.8"/><text x="902.9" y="546.42" font-size="7.6" fill="#222" font-family='"Liberation Sans", sans-serif' text-anchor="end" textLength="82" lengthAdjust="spacingAndGlyphs">Medium Center Frequency</text><text x="1011.5" y="546.42" font-size="7.4" fill="#333" font-family='"Liberation Sans", sans-serif' textLength="39.1" lengthAdjust="spacingAndGlyphs">1000.000 Hz</text><rect x="905.7" y="552.65" width="103.6" height="11.3" fill="#e5e6e6"/><line x1="905.7" y1="564.15" x2="1009.3" y2="564.15" stroke="#a3abaa" stroke-width="1"/><line x1="957.7" y1="554.25" x2="957.7" y2="562.45" stroke="#222" stroke-width="0.8"/><rect x="917" y="554.45" width="11" height="10.6" fill="#8f9897" rx="2" opacity="0.55"/><rect x="916.4" y="553.45" width="11" height="9.8" fill="url(#gThumb)" stroke="#7a7a7a" stroke-width="0.7" rx="1.6"/><line x1="921.9" y1="553.85" x2="921.9" y2="562.85" stroke="#555" stroke-width="0.8"/><text x="902.9" y="560.35" font-size="7.6" fill="#222" font-family='"Liberation Sans", sans-serif' text-anchor="end" textLength="54" lengthAdjust="spacingAndGlyphs">Medium Q Factor</text><text x="1011.5" y="560.35" font-size="7.4" fill="#333" font-family='"Liberation Sans", sans-serif' textLength="18" lengthAdjust="spacingAndGlyphs">0.500</text><rect x="905.7" y="566.58" width="103.6" height="11.3" fill="#e5e6e6"/><line x1="905.7" y1="578.08" x2="1009.3" y2="578.08" stroke="#a3abaa" stroke-width="1"/><line x1="957.7" y1="568.18" x2="957.7" y2="576.38" stroke="#222" stroke-width="0.8"/><rect x="917.9" y="568.38" width="11" height="10.6" fill="#8f9897" rx="2" opacity="0.55"/><rect x="917.3" y="567.38" width="11" height="9.8" fill="url(#gThumb)" stroke="#7a7a7a" stroke-width="0.7" rx="1.6"/><line x1="922.8" y1="567.78" x2="922.8" y2="576.78" stroke="#555" stroke-width="0.8"/><text x="902.9" y="574.28" font-size="7.6" fill="#222" font-family='"Liberation Sans", sans-serif' text-anchor="end" textLength="48" lengthAdjust="spacingAndGlyphs">High Peak Gain</text><text x="1011.5" y="574.28" font-size="7.4" fill="#333" font-family='"Liberation Sans", sans-serif' textLength="34" lengthAdjust="spacingAndGlyphs">-15.320 dB</text><rect x="905.7" y="580.51" width="103.6" height="11.3" fill="#e5e6e6"/><line x1="905.7" y1="592.01" x2="1009.3" y2="592.01" stroke="#a3abaa" stroke-width="1"/><line x1="957.7" y1="582.11" x2="957.7" y2="590.31" stroke="#222" stroke-width="0.8"/><rect x="988.6" y="582.31" width="11" height="10.6" fill="#8f9897" rx="2" opacity="0.55"/><rect x="988" y="581.31" width="11" height="9.8" fill="url(#gThumb)" stroke="#7a7a7a" stroke-width="0.7" rx="1.6"/><line x1="993.5" y1="581.71" x2="993.5" y2="590.71" stroke="#555" stroke-width="0.8"/><text x="902.9" y="588.21" font-size="7.6" fill="#222" font-family='"Liberation Sans", sans-serif' text-anchor="end" textLength="70" lengthAdjust="spacingAndGlyphs">High Center Frequency</text><text x="1011.5" y="588.21" font-size="7.4" fill="#333" font-family='"Liberation Sans", sans-serif' textLength="39.1" lengthAdjust="spacingAndGlyphs">9999.999 Hz</text><rect x="905.7" y="594.44" width="103.6" height="11.3" fill="#e5e6e6"/><line x1="905.7" y1="605.94" x2="1009.3" y2="605.94" stroke="#a3abaa" stroke-width="1"/><line x1="957.7" y1="596.04" x2="957.7" y2="604.24" stroke="#222" stroke-width="0.8"/><rect x="917" y="596.24" width="11" height="10.6" fill="#8f9897" rx="2" opacity="0.55"/><rect x="916.4" y="595.24" width="11" height="9.8" fill="url(#gThumb)" stroke="#7a7a7a" stroke-width="0.7" rx="1.6"/><line x1="921.9" y1="595.64" x2="921.9" y2="604.64" stroke="#555" stroke-width="0.8"/><text x="902.9" y="602.14" font-size="7.6" fill="#222" font-family='"Liberation Sans", sans-serif' text-anchor="end" textLength="42.4" lengthAdjust="spacingAndGlyphs">High Q Factor</text><text x="1011.5" y="602.14" font-size="7.4" fill="#333" font-family='"Liberation Sans", sans-serif' textLength="18" lengthAdjust="spacingAndGlyphs">0.507</text></g>
</svg>
</body></html>
